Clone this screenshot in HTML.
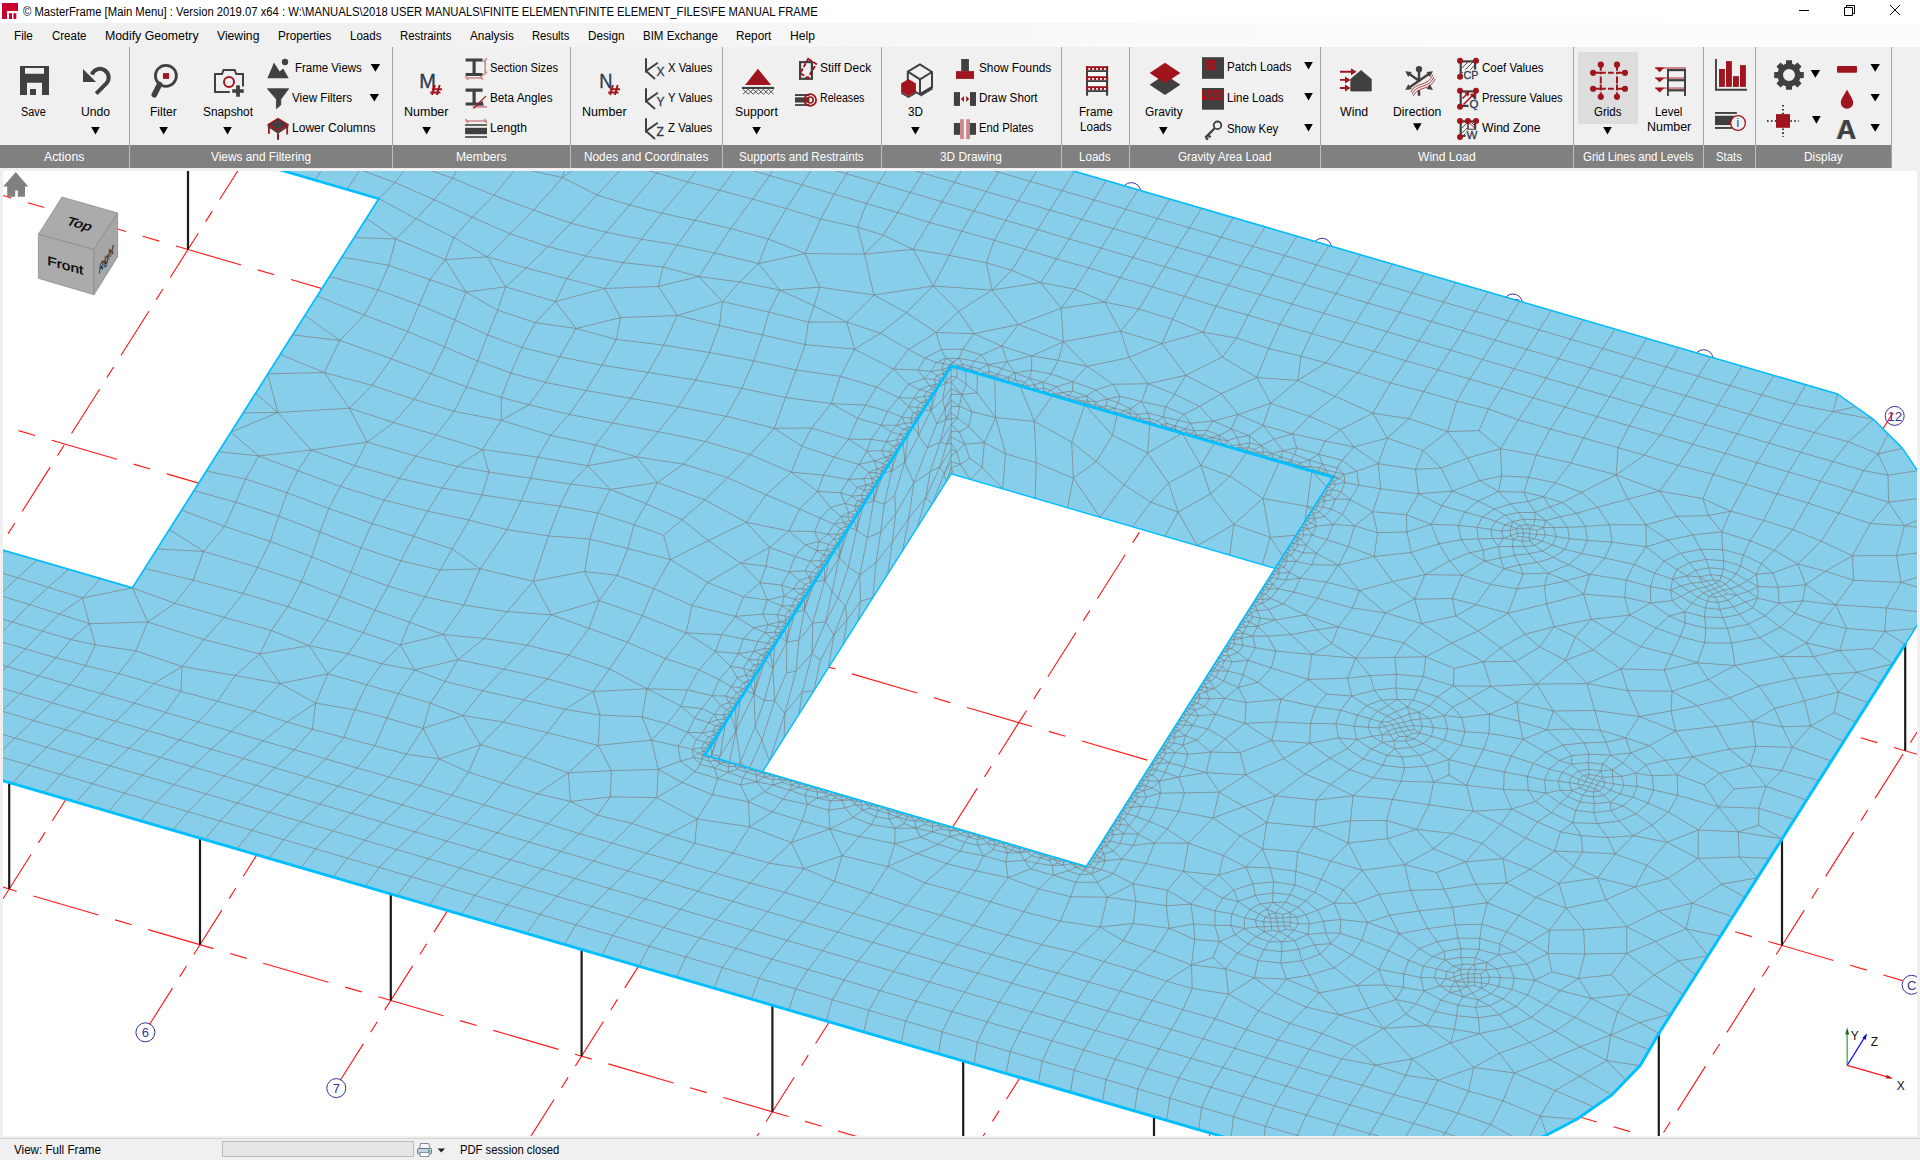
<!DOCTYPE html><html><head><meta charset="utf-8"><title>MasterFrame</title><style>
html,body{margin:0;padding:0;background:#f0f0f0;}
body{width:1920px;height:1160px;position:relative;overflow:hidden;font-family:"Liberation Sans", sans-serif;font-size:12px;color:#000;}
.abs{position:absolute;}
.t{position:absolute;white-space:pre;line-height:1;transform-origin:0 0;}
#title{left:0;top:0;width:1920px;height:23px;background:#fff;}
#menu{left:0;top:23px;width:1920px;height:24px;background:linear-gradient(90deg,#f0f0f0 0px,#f0f0f0 300px,#f6f6f6 800px,#fbfbfb 1300px,#fcfcfc 1920px);}
#ribbon{left:0;top:47px;width:1920px;height:98px;background:#f0f0f0;}
#labels{left:0;top:145px;width:1891.5px;height:22.5px;background:#808080;}
.sep{position:absolute;top:47px;width:1px;height:121px;background:#a3a3a3;}
.sep2{position:absolute;top:145px;width:1px;height:23px;background:#bdbdbd;}
#hl{left:1578px;top:52px;width:60px;height:72px;background:#dddddd;}
#vp{left:3px;top:171px;width:1914px;height:964.5px;background:#fff;overflow:hidden;}
#status{left:0;top:1138px;width:1920px;height:22px;background:#f0f0f0;border-top:1px solid #d4d4d4;}
#prog{left:222px;top:1141px;width:190px;height:14px;background:#e6e6e6;border:1px solid #bcbcbc;}
</style></head><body>
<div id="title" class="abs"></div><div id="menu" class="abs"></div><div id="ribbon" class="abs"></div><div id="labels" class="abs"></div><div id="hl" class="abs"></div>
<div class="sep" style="left:128.9px"></div>
<div class="sep" style="left:391.9px"></div>
<div class="sep" style="left:569.9px"></div>
<div class="sep" style="left:721.9px"></div>
<div class="sep" style="left:880.9px"></div>
<div class="sep" style="left:1060.9px"></div>
<div class="sep" style="left:1129.0px"></div>
<div class="sep" style="left:1320.1px"></div>
<div class="sep" style="left:1573.0px"></div>
<div class="sep" style="left:1703.1px"></div>
<div class="sep" style="left:1755.1px"></div>
<div class="sep" style="left:1890.9px"></div>
<div class="sep2" style="left:128.9px"></div>
<div class="sep2" style="left:391.9px"></div>
<div class="sep2" style="left:569.9px"></div>
<div class="sep2" style="left:721.9px"></div>
<div class="sep2" style="left:880.9px"></div>
<div class="sep2" style="left:1060.9px"></div>
<div class="sep2" style="left:1129.0px"></div>
<div class="sep2" style="left:1320.1px"></div>
<div class="sep2" style="left:1573.0px"></div>
<div class="sep2" style="left:1703.1px"></div>
<div class="sep2" style="left:1755.1px"></div>
<div id="status" class="abs"></div><div id="prog" class="abs"></div>
<svg class="abs" style="left:414px;top:1139px" width="36" height="20" viewBox="414 1139 36 20"><path d="M420.5,1143.5h8l2,5h-11z" fill="#f4f6fa" stroke="#6a7c96" stroke-width="0.9"/><rect x="417.5" y="1148.5" width="14" height="5.5" rx="1" fill="#c9d2e0" stroke="#5a6b86" stroke-width="0.9"/><rect x="420" y="1152.5" width="9" height="4" fill="#fff" stroke="#6a7c96" stroke-width="0.8"/><rect x="428" y="1150" width="2" height="1.6" fill="#2bb24a"/><path d="M437.6,1148.5h7.4l-3.7,4z" fill="#222"/></svg>
<div id="vp" class="abs"><svg width="1914" height="964.5" viewBox="3 171 1914 964.5" style="position:absolute;left:0;top:0;font-family:'Liberation Sans',sans-serif"><path d="M-10.0,883.4 L900.0,1149.1" stroke="#ff1a1a" stroke-width="1.15" fill="none" stroke-dasharray="67.9,17.3,17.3,17.3" stroke-dashoffset="74.7"/>
<path d="M1560.0,1111.2 L1700.0,1152.0" stroke="#ff1a1a" stroke-width="1.15" fill="none" stroke-dasharray="67.9,17.3,17.3,17.3" stroke-dashoffset="29.5"/>
<path d="M828.0,666.9 L1200.0,775.5" stroke="#ff1a1a" stroke-width="1.15" fill="none" stroke-dasharray="67.9,17.3,17.3,17.3" stroke-dashoffset="94.8"/>
<path d="M1700.0,921.5 L1902.5,980.6" stroke="#ff1a1a" stroke-width="1.15" fill="none" stroke-dasharray="67.9,17.3,17.3,17.3" stroke-dashoffset="48.6"/>
<path d="M1840.0,731.8 L1925.0,756.6" stroke="#ff1a1a" stroke-width="1.15" fill="none" stroke-dasharray="67.9,17.3,17.3,17.3" stroke-dashoffset="63.8"/>
<path d="M-10.0,191.7 L340.0,293.9" stroke="#ff1a1a" stroke-width="1.15" fill="none" stroke-dasharray="67.9,17.3,17.3,17.3" stroke-dashoffset="45.9"/>
<path d="M-10.0,422.3 L215.0,487.9" stroke="#ff1a1a" stroke-width="1.15" fill="none" stroke-dasharray="67.9,17.3,17.3,17.3" stroke-dashoffset="55.5"/>
<path d="M-41.3,968.8 L83.1,772.2" stroke="#ff1a1a" stroke-width="1.15" fill="none" stroke-dasharray="52.4,13.7,12.5,13.7" stroke-dashoffset="9.4"/>
<path d="M149.5,1024.5 L273.9,827.9" stroke="#ff1a1a" stroke-width="1.15" fill="none" stroke-dasharray="52.4,13.7,12.5,13.7" stroke-dashoffset="9.4"/>
<path d="M340.3,1080.2 L464.7,883.6" stroke="#ff1a1a" stroke-width="1.15" fill="none" stroke-dasharray="52.4,13.7,12.5,13.7" stroke-dashoffset="9.4"/>
<path d="M531.1,1135.9 L655.5,939.3" stroke="#ff1a1a" stroke-width="1.15" fill="none" stroke-dasharray="52.4,13.7,12.5,13.7" stroke-dashoffset="9.4"/>
<path d="M721.9,1191.6 L846.3,995.0" stroke="#ff1a1a" stroke-width="1.15" fill="none" stroke-dasharray="52.4,13.7,12.5,13.7" stroke-dashoffset="9.4"/>
<path d="M912.7,1247.3 L1037.1,1050.7" stroke="#ff1a1a" stroke-width="1.15" fill="none" stroke-dasharray="52.4,13.7,12.5,13.7" stroke-dashoffset="9.4"/>
<path d="M1103.5,1303.0 L1227.9,1106.4" stroke="#ff1a1a" stroke-width="1.15" fill="none" stroke-dasharray="52.4,13.7,12.5,13.7" stroke-dashoffset="9.4"/>
<path d="M1294.3,1358.7 L1418.7,1162.1" stroke="#ff1a1a" stroke-width="1.15" fill="none" stroke-dasharray="52.4,13.7,12.5,13.7" stroke-dashoffset="9.4"/>
<path d="M1511.0,1373.5 L1929.8,711.9" stroke="#ff1a1a" stroke-width="1.15" fill="none" stroke-dasharray="52.4,13.7,12.5,13.7" stroke-dashoffset="57.8"/>
<path d="M1893.0,412.9 L1837.6,500.5" stroke="#ff1a1a" stroke-width="1.15" fill="none" stroke-dasharray="52.4,13.7,12.5,13.7" stroke-dashoffset="0.0"/>
<path d="M-58.4,638.7 L261.9,132.7" stroke="#ff1a1a" stroke-width="1.15" fill="none" stroke-dasharray="52.4,13.7,12.5,13.7" stroke-dashoffset="34.0"/>
<path d="M883.3,936.7 L1148.2,518.3" stroke="#ff1a1a" stroke-width="1.15" fill="none" stroke-dasharray="52.4,13.7,12.5,13.7" stroke-dashoffset="61.5"/>
<circle cx="145.4" cy="1032.3" r="9.5" fill="none" stroke="#37339a" stroke-width="1"/>
<text x="145.4" y="1037.0" font-size="13" fill="#37339a" text-anchor="middle">6</text>
<circle cx="336.3" cy="1088.1" r="9.5" fill="none" stroke="#37339a" stroke-width="1"/>
<text x="336.3" y="1092.8" font-size="13" fill="#37339a" text-anchor="middle">7</text>
<circle cx="1894.7" cy="415.9" r="9.5" fill="none" stroke="#37339a" stroke-width="1"/>
<text x="1894.7" y="420.8" font-size="13.5" fill="#37339a" text-anchor="middle">12</text>
<circle cx="1911.6" cy="984.8" r="9.5" fill="none" stroke="#37339a" stroke-width="1"/>
<text x="1911.6" y="989.5" font-size="13" fill="#37339a" text-anchor="middle">C</text>
<circle cx="1131.3" cy="192.1" r="9.5" fill="none" stroke="#37339a" stroke-width="1"/>
<text x="1131.3" y="196.8" font-size="13" fill="#37339a" text-anchor="middle">8</text>
<circle cx="1322.1" cy="247.8" r="9.5" fill="none" stroke="#37339a" stroke-width="1"/>
<text x="1322.1" y="252.5" font-size="13" fill="#37339a" text-anchor="middle">9</text>
<circle cx="1512.9" cy="303.5" r="9.5" fill="none" stroke="#37339a" stroke-width="1"/>
<text x="1512.9" y="308.2" font-size="13" fill="#37339a" text-anchor="middle">10</text>
<circle cx="1703.7" cy="359.2" r="9.5" fill="none" stroke="#37339a" stroke-width="1"/>
<text x="1703.7" y="363.9" font-size="13" fill="#37339a" text-anchor="middle">11</text>
<path d="M9.2,782.5 L9.2,889.0" stroke="#1c1c1c" stroke-width="2.2" fill="none"/>
<path d="M200.0,838.2 L200.0,944.7" stroke="#1c1c1c" stroke-width="2.2" fill="none"/>
<path d="M390.8,893.9 L390.8,1000.4" stroke="#1c1c1c" stroke-width="2.2" fill="none"/>
<path d="M581.6,949.6 L581.6,1056.1" stroke="#1c1c1c" stroke-width="2.2" fill="none"/>
<path d="M772.4,1005.3 L772.4,1111.8" stroke="#1c1c1c" stroke-width="2.2" fill="none"/>
<path d="M963.2,1061.0 L963.2,1167.5" stroke="#1c1c1c" stroke-width="2.2" fill="none"/>
<path d="M1154.0,1116.7 L1154.0,1223.2" stroke="#1c1c1c" stroke-width="2.2" fill="none"/>
<path d="M1344.8,1172.4 L1344.8,1278.9" stroke="#1c1c1c" stroke-width="2.2" fill="none"/>
<path d="M1658.8,1033.5 L1658.8,1140.0" stroke="#1c1c1c" stroke-width="2.2" fill="none"/>
<path d="M1782.0,838.9 L1782.0,945.4" stroke="#1c1c1c" stroke-width="2.2" fill="none"/>
<path d="M1905.2,644.3 L1905.2,750.8" stroke="#1c1c1c" stroke-width="2.2" fill="none"/>
<path d="M188.0,143.0 L188.0,249.5" stroke="#1c1c1c" stroke-width="2.2" fill="none"/>
<path d="M951.2,365.8 L1332.8,477.2 L1332.8,585.2 L951.2,473.8Z" fill="#87ceeb" stroke="none" stroke-width="0" stroke-linejoin="round"/>
<path d="M951.2,365.8 L704.8,755.0 L704.8,863.0 L951.2,473.8Z" fill="#87ceeb" stroke="none" stroke-width="0" stroke-linejoin="round"/>
<path d="M956.9,367.5 L951.2,369.9 M956.9,367.5 L956.9,377.5 M965.2,369.9 L966.2,384.2 M977.3,373.4 L977.1,392.9 M994.7,378.5 L995.7,417.6 M1020.0,385.9 L1034.3,421.3 M1052.4,395.4 L1034.3,421.3 M1084.9,404.8 L1071.7,442.2 M1084.9,404.8 L1112.5,435.2 M1117.3,414.3 L1112.5,435.2 M1149.8,423.8 L1147.6,453.0 M1182.2,433.2 L1147.6,453.0 M1182.2,433.2 L1200.8,465.3 M1214.6,442.7 L1200.8,465.3 M1247.1,452.2 L1229.9,476.2 M1279.5,461.6 L1262.9,498.4 M1311.9,471.1 L1332.8,493.5 M1311.9,471.1 L1307.0,506.4 M1332.8,509.8 L1307.0,506.4 M1332.8,526.1 L1307.0,506.4 M1332.8,542.4 L1303.0,534.7 M1332.8,558.7 L1311.0,560.7 M1332.8,575.0 L1317.5,580.7 M1317.5,580.7 L1311.0,560.7 M1294.6,574.1 L1270.2,537.3 M1294.6,574.1 L1311.0,560.7 M1262.2,564.6 L1270.2,537.3 M1229.8,555.1 L1233.7,524.5 M1197.3,545.7 L1233.7,524.5 M1197.3,545.7 L1178.1,512.2 M1164.9,536.2 L1178.1,512.2 M1132.5,526.7 L1150.6,502.2 M1100.0,517.2 L1124.1,484.8 M1100.0,517.2 L1073.3,478.1 M1067.6,507.8 L1073.3,478.1 M1035.2,498.3 L1036.2,462.7 M1002.7,488.8 L1005.6,453.8 M1002.7,488.8 L982.2,467.3 M970.3,479.4 L982.2,467.3 M970.3,479.4 L960.5,464.4 M954.1,474.6 L951.2,467.7 M951.2,467.7 L960.5,464.4 M951.2,461.6 L960.5,464.4 M951.2,455.5 L956.7,451.6 M951.2,449.3 L956.7,451.6 M951.2,443.2 L956.7,451.6 M951.2,437.1 L964.8,444.2 M951.2,431.0 L959.3,431.9 M951.2,424.9 L957.4,418.0 M951.2,424.9 L959.3,431.9 M951.2,418.8 L957.4,418.0 M951.2,412.7 L957.4,418.0 M951.2,406.6 L959.5,406.3 M951.2,400.4 L959.5,406.3 M951.2,394.3 L961.8,394.5 M951.2,388.2 L961.8,394.5 M951.2,382.1 L961.8,394.5 M951.2,382.1 L956.9,377.5 M951.2,376.0 L956.9,377.5 M1147.6,453.0 L1124.1,484.8 M1147.6,453.0 L1168.6,483.0 M1147.6,453.0 L1112.5,435.2 M972.0,411.8 L968.8,426.7 M972.0,411.8 L995.7,417.6 M972.0,411.8 L959.5,406.3 M972.0,411.8 L961.8,394.5 M1200.8,465.3 L1168.6,483.0 M1200.8,465.3 L1210.4,494.0 M1200.8,465.3 L1229.9,476.2 M1096.2,461.5 L1071.7,442.2 M1096.2,461.5 L1124.1,484.8 M1096.2,461.5 L1073.3,478.1 M1096.2,461.5 L1112.5,435.2 M1034.3,421.3 L1036.2,462.7 M1034.3,421.3 L1071.7,442.2 M1034.3,421.3 L995.7,417.6 M1262.9,498.4 L1233.7,524.5 M1262.9,498.4 L1307.0,506.4 M1262.9,498.4 L1229.9,476.2 M1262.9,498.4 L1270.2,537.3 M1005.6,453.8 L1036.2,462.7 M1005.6,453.8 L995.7,417.6 M1005.6,453.8 L984.4,442.7 M982.2,467.3 L969.6,458.4 M982.2,467.3 L984.4,442.7 M1233.7,524.5 L1210.4,494.0 M1233.7,524.5 L1270.2,537.3 M1036.2,462.7 L1073.3,478.1 M1071.7,442.2 L1073.3,478.1 M1307.0,506.4 L1303.0,534.7 M1124.1,484.8 L1150.6,502.2 M1178.1,512.2 L1168.6,483.0 M1178.1,512.2 L1210.4,494.0 M1178.1,512.2 L1150.6,502.2 M966.2,384.2 L977.1,392.9 M966.2,384.2 L961.8,394.5 M966.2,384.2 L956.9,377.5 M968.8,426.7 L957.4,418.0 M968.8,426.7 L984.4,442.7 M968.8,426.7 L959.3,431.9 M1168.6,483.0 L1150.6,502.2 M1210.4,494.0 L1229.9,476.2 M995.7,417.6 L977.1,392.9 M995.7,417.6 L984.4,442.7 M964.8,444.2 L969.6,458.4 M964.8,444.2 L984.4,442.7 M964.8,444.2 L956.7,451.6 M964.8,444.2 L959.3,431.9 M1303.0,534.7 L1270.2,537.3 M1303.0,534.7 L1311.0,560.7 M959.5,406.3 L957.4,418.0 M959.5,406.3 L961.8,394.5 M960.5,464.4 L969.6,458.4 M960.5,464.4 L956.7,451.6 M977.1,392.9 L961.8,394.5 M947.5,371.6 L951.2,369.9 M947.5,371.6 L945.4,383.6 M942.6,379.4 L945.4,383.6 M937.6,387.2 L945.4,383.6 M937.6,387.2 L931.0,410.1 M932.7,395.0 L931.0,410.1 M927.8,402.8 L931.0,410.1 M922.9,410.6 L931.0,410.1 M917.9,418.3 L918.7,435.5 M913.0,426.1 L918.7,435.5 M908.1,433.9 L904.8,462.0 M903.2,441.7 L904.8,462.0 M898.2,449.5 L891.7,471.3 M893.3,457.3 L891.7,471.3 M888.4,465.0 L891.7,471.3 M883.4,472.8 L873.7,500.7 M883.4,472.8 L891.7,471.3 M878.5,480.6 L873.7,500.7 M873.6,488.4 L873.7,500.7 M868.7,496.2 L873.7,500.7 M863.7,504.0 L873.7,500.7 M863.7,504.0 L856.6,530.1 M858.8,511.8 L856.6,530.1 M853.9,519.5 L856.6,530.1 M848.9,527.3 L856.6,530.1 M848.9,527.3 L839.2,557.6 M844.0,535.1 L839.2,557.6 M839.1,542.9 L839.2,557.6 M834.2,550.7 L839.2,557.6 M829.2,558.5 L824.9,580.3 M824.3,566.2 L824.9,580.3 M819.4,574.0 L824.9,580.3 M814.4,581.8 L824.9,580.3 M814.4,581.8 L804.4,609.8 M809.5,589.6 L804.4,609.8 M804.6,597.4 L804.4,609.8 M799.7,605.2 L804.4,609.8 M794.7,612.9 L786.7,642.1 M794.7,612.9 L804.4,609.8 M789.8,620.7 L786.7,642.1 M784.9,628.5 L786.7,642.1 M780.0,636.3 L786.7,642.1 M775.0,644.1 L772.9,668.5 M770.1,651.9 L772.9,668.5 M765.2,659.6 L754.0,694.0 M765.2,659.6 L772.9,668.5 M760.2,667.4 L754.0,694.0 M755.3,675.2 L754.0,694.0 M750.4,683.0 L754.0,694.0 M745.5,690.8 L754.0,694.0 M740.5,698.6 L735.9,731.1 M735.6,706.4 L735.9,731.1 M730.7,714.1 L735.9,731.1 M725.7,721.9 L720.0,756.2 M720.8,729.7 L711.8,754.6 M715.9,737.5 L711.8,754.6 M711.0,745.3 L711.8,754.6 M706.0,753.1 L704.8,762.1 M704.8,762.1 L711.8,754.6 M704.8,769.3 L711.8,754.6 M704.8,776.4 L708.5,780.6 M704.8,776.4 L711.8,754.6 M704.8,783.5 L708.5,780.6 M704.8,790.7 L708.5,780.6 M704.8,797.8 L708.5,780.6 M704.8,797.8 L714.4,787.7 M704.8,804.9 L714.4,787.7 M704.8,812.1 L712.9,802.4 M704.8,819.2 L712.9,802.4 M704.8,826.3 L712.4,816.8 M704.8,833.5 L708.9,833.4 M704.8,840.6 L708.9,833.4 M704.8,847.7 L708.9,833.4 M704.8,854.8 L709.1,856.2 M704.8,854.8 L715.6,833.8 M704.8,862.0 L709.1,856.2 M715.6,846.0 L715.6,833.8 M725.3,830.6 L715.6,833.8 M725.3,830.6 L735.1,796.0 M739.8,807.7 L735.1,796.0 M754.6,784.3 L748.0,771.1 M769.4,761.0 L761.9,740.3 M769.4,761.0 L784.8,713.5 M784.2,737.6 L784.8,713.5 M799.0,714.3 L802.3,691.9 M813.8,690.9 L802.3,691.9 M813.8,690.9 L820.3,660.2 M828.5,667.5 L833.8,635.2 M843.3,644.2 L847.0,619.8 M858.1,620.8 L860.5,601.3 M872.9,597.5 L876.0,562.5 M872.9,597.5 L860.5,601.3 M887.7,574.1 L892.3,542.0 M902.5,550.8 L908.8,518.2 M917.2,527.4 L925.8,497.4 M932.0,504.1 L944.2,473.8 M932.0,504.1 L925.8,497.4 M946.3,481.6 L951.2,467.7 M946.3,481.6 L944.2,473.8 M951.2,461.6 L944.2,473.8 M951.2,455.5 L944.2,473.8 M951.2,449.3 L939.9,466.9 M951.2,443.2 L946.7,444.1 M951.2,437.1 L946.7,444.1 M951.2,431.0 L946.7,444.1 M951.2,424.9 L940.3,441.9 M951.2,418.8 L945.6,419.9 M951.2,412.7 L945.6,419.9 M951.2,406.6 L945.6,419.9 M951.2,400.4 L945.0,409.2 M951.2,394.3 L945.0,409.2 M951.2,388.2 L942.7,399.8 M951.2,382.1 L945.4,383.6 M951.2,376.0 L945.4,383.6 M735.9,731.1 L754.0,694.0 M735.9,731.1 L740.5,761.5 M735.9,731.1 L720.0,756.2 M735.9,731.1 L726.2,777.6 M802.3,691.9 L812.1,653.4 M802.3,691.9 L784.8,713.5 M945.6,419.9 L936.8,423.7 M945.6,419.9 L940.3,441.9 M945.6,419.9 L945.0,409.2 M876.0,562.5 L859.8,574.9 M876.0,562.5 L892.3,542.0 M876.0,562.5 L880.7,532.2 M774.6,700.7 L761.9,740.3 M774.6,700.7 L772.9,668.5 M774.6,700.7 L784.8,713.5 M774.6,700.7 L764.4,700.4 M774.6,700.7 L786.6,672.9 M859.8,574.9 L867.4,537.6 M859.8,574.9 L848.4,567.0 M859.8,574.9 L845.4,605.9 M859.8,574.9 L860.5,601.3 M833.8,635.2 L825.7,621.7 M833.8,635.2 L845.4,605.9 M833.8,635.2 L847.0,619.8 M833.8,635.2 L820.3,660.2 M918.7,435.5 L904.8,462.0 M918.7,435.5 L927.4,447.8 M918.7,435.5 L931.0,410.1 M722.4,806.3 L712.4,816.8 M722.4,806.3 L726.2,777.6 M722.4,806.3 L715.6,833.8 M722.4,806.3 L735.1,796.0 M873.7,500.7 L867.4,537.6 M873.7,500.7 L884.3,504.2 M761.9,740.3 L755.2,726.7 M761.9,740.3 L748.0,771.1 M754.0,694.0 L755.2,726.7 M754.0,694.0 L764.4,700.4 M796.0,671.2 L798.9,640.1 M796.0,671.2 L812.1,653.4 M796.0,671.2 L784.8,713.5 M796.0,671.2 L786.6,672.9 M798.9,640.1 L812.7,623.2 M798.9,640.1 L786.7,642.1 M798.9,640.1 L804.4,609.8 M825.7,621.7 L812.7,623.2 M825.7,621.7 L812.1,653.4 M825.7,621.7 L838.0,597.9 M825.7,621.7 L832.1,591.7 M812.7,623.2 L812.1,653.4 M812.7,623.2 L824.9,580.3 M812.7,623.2 L804.4,609.8 M939.9,466.9 L930.2,471.6 M939.9,466.9 L944.2,473.8 M939.9,466.9 L946.7,444.1 M939.9,466.9 L925.8,497.4 M895.8,513.6 L892.3,542.0 M895.8,513.6 L913.8,482.9 M895.8,513.6 L880.7,532.2 M895.8,513.6 L894.6,495.4 M867.4,537.6 L856.6,530.1 M867.4,537.6 L880.7,532.2 M740.5,761.5 L755.2,726.7 M740.5,761.5 L726.2,777.6 M740.5,761.5 L748.0,771.1 M740.5,761.5 L735.1,796.0 M812.1,653.4 L820.3,660.2 M892.3,542.0 L908.8,518.2 M936.8,423.7 L927.4,447.8 M936.8,423.7 L945.0,409.2 M936.8,423.7 L931.0,410.1 M848.4,567.0 L838.0,597.9 M848.4,567.0 L856.6,530.1 M848.4,567.0 L839.2,557.6 M845.4,605.9 L838.0,597.9 M845.4,605.9 L847.0,619.8 M884.3,504.2 L880.7,532.2 M884.3,504.2 L894.6,495.4 M884.3,504.2 L891.7,471.3 M708.5,780.6 L720.0,756.2 M772.9,668.5 L764.4,700.4 M772.9,668.5 L786.7,642.1 M712.4,816.8 L712.9,802.4 M712.4,816.8 L708.9,833.4 M908.8,518.2 L913.8,482.9 M908.8,518.2 L925.8,497.4 M913.8,482.9 L930.2,471.6 M913.8,482.9 L904.8,462.0 M913.8,482.9 L927.4,447.8 M720.0,756.2 L714.4,787.7 M720.0,756.2 L711.8,754.6 M930.2,471.6 L940.3,441.9 M930.2,471.6 L925.8,497.4 M714.4,787.7 L726.2,777.6 M714.4,787.7 L712.9,802.4 M824.9,580.3 L839.2,557.6 M824.9,580.3 L832.1,591.7 M838.0,597.9 L832.1,591.7 M755.2,726.7 L764.4,700.4 M904.8,462.0 L894.6,495.4 M904.8,462.0 L891.7,471.3 M726.2,777.6 L712.9,802.4 M748.0,771.1 L735.1,796.0 M942.7,399.8 L945.4,383.6 M942.7,399.8 L945.0,409.2 M942.7,399.8 L931.0,410.1 M715.6,833.8 L708.9,833.4 M940.3,441.9 L946.7,444.1 M940.3,441.9 L927.4,447.8 M839.2,557.6 L832.1,591.7 M786.6,672.9 L786.7,642.1 M860.5,601.3 L847.0,619.8" stroke="#7e7e7e" stroke-width="0.7" fill="none"/>
<path d="M704.8,863.0 L951.2,473.8 L1332.8,585.2" stroke="#00bfff" stroke-width="1.4" fill="none"/>
<path d="M951.2,365.8 L951.2,473.8" stroke="#7e7e7e" stroke-width="0.7" fill="none"/>
<path d="M215.8,-79.4 L1837.6,394.0 L1873.4,419.3 L1902.5,448.4 L1917.5,470.8 L1931.0,497.0 L1940.0,530.0 L1940.0,570.0 L1925.3,612.6 L1905.2,644.3 L1658.8,1033.5 L1640.0,1065.7 L1611.7,1095.0 L1576.7,1119.3 L1546.7,1135.0 L1505.0,1152.0 L1460.0,1164.0 L1391.2,1185.9 L-277.0,699.0 L-153.8,504.4 L132.4,587.9 L378.8,198.7 L92.6,115.2Z M704.8,755.0 L1086.4,866.4 L1332.8,477.2 L951.2,365.8Z" fill="#87ceeb" fill-rule="evenodd"/>
<path d="M704.8,755.0 L708.0,755.9 M704.8,755.0 L706.0,753.1 M704.8,755.0 L702.3,754.9 M704.8,755.0 L704.2,756.7 M708.0,755.9 L711.2,756.9 M708.0,755.9 L708.3,757.8 M711.2,756.9 L714.3,757.8 M711.2,756.9 L708.3,757.8 M711.2,756.9 L714.6,760.2 M714.3,757.8 L717.5,758.7 M714.3,757.8 L714.6,760.2 M717.5,758.7 L720.7,759.6 M717.5,758.7 L719.2,761.0 M720.7,759.6 L723.9,760.6 M720.7,759.6 L719.2,761.0 M723.9,760.6 L727.1,761.5 M723.9,760.6 L723.8,762.3 M727.1,761.5 L730.2,762.4 M727.1,761.5 L723.8,762.3 M730.2,762.4 L733.4,763.4 M730.2,762.4 L729.1,763.8 M733.4,763.4 L736.6,764.3 M733.4,763.4 L729.1,763.8 M733.4,763.4 L734.9,766.1 M736.6,764.3 L739.8,765.2 M736.6,764.3 L734.9,766.1 M739.8,765.2 L743.0,766.1 M739.8,765.2 L739.2,767.1 M743.0,766.1 L746.1,767.1 M743.0,766.1 L744.7,768.0 M746.1,767.1 L749.3,768.0 M746.1,767.1 L744.7,768.0 M749.3,768.0 L752.5,768.9 M749.3,768.0 L744.7,768.0 M749.3,768.0 L750.6,770.0 M752.5,768.9 L755.7,769.9 M752.5,768.9 L750.6,770.0 M755.7,769.9 L758.9,770.8 M755.7,769.9 L755.2,771.3 M758.9,770.8 L762.0,771.7 M758.9,770.8 L755.2,771.3 M758.9,770.8 L760.2,772.8 M762.0,771.7 L765.2,772.6 M762.0,771.7 L760.2,772.8 M765.2,772.6 L768.4,773.6 M765.2,772.6 L764.4,774.1 M768.4,773.6 L771.6,774.5 M768.4,773.6 L764.4,774.1 M768.4,773.6 L769.6,775.7 M771.6,774.5 L774.8,775.4 M771.6,774.5 L769.6,775.7 M774.8,775.4 L777.9,776.4 M774.8,775.4 L774.1,776.9 M777.9,776.4 L781.1,777.3 M777.9,776.4 L774.1,776.9 M777.9,776.4 L780.0,779.2 M781.1,777.3 L784.3,778.2 M781.1,777.3 L780.0,779.2 M784.3,778.2 L787.5,779.1 M784.3,778.2 L784.9,780.1 M787.5,779.1 L790.7,780.1 M787.5,779.1 L784.9,780.1 M790.7,780.1 L793.8,781.0 M790.7,780.1 L790.1,781.6 M793.8,781.0 L797.0,781.9 M793.8,781.0 L790.1,781.6 M793.8,781.0 L795.5,783.2 M797.0,781.9 L800.2,782.9 M797.0,781.9 L795.5,783.2 M800.2,782.9 L803.4,783.8 M800.2,782.9 L799.7,784.4 M803.4,783.8 L806.6,784.7 M803.4,783.8 L799.7,784.4 M803.4,783.8 L805.4,786.3 M806.6,784.7 L809.7,785.6 M806.6,784.7 L805.4,786.3 M809.7,785.6 L812.9,786.6 M809.7,785.6 L805.4,786.3 M809.7,785.6 L811.3,787.9 M812.9,786.6 L816.1,787.5 M812.9,786.6 L811.3,787.9 M816.1,787.5 L819.3,788.4 M816.1,787.5 L815.8,789.0 M819.3,788.4 L822.5,789.3 M819.3,788.4 L815.8,789.0 M819.3,788.4 L821.1,790.6 M822.5,789.3 L825.6,790.3 M822.5,789.3 L821.1,790.6 M825.6,790.3 L828.8,791.2 M825.6,790.3 L825.3,792.6 M828.8,791.2 L832.0,792.1 M828.8,791.2 L825.3,792.6 M832.0,792.1 L835.2,793.1 M832.0,792.1 L831.2,794.8 M835.2,793.1 L838.4,794.0 M835.2,793.1 L836.3,795.3 M838.4,794.0 L841.5,794.9 M838.4,794.0 L836.3,795.3 M841.5,794.9 L844.7,795.8 M841.5,794.9 L841.2,796.6 M844.7,795.8 L847.9,796.8 M844.7,795.8 L841.2,796.6 M844.7,795.8 L846.6,798.2 M847.9,796.8 L851.1,797.7 M847.9,796.8 L846.6,798.2 M851.1,797.7 L854.3,798.6 M851.1,797.7 L851.0,800.0 M854.3,798.6 L857.4,799.6 M854.3,798.6 L851.0,800.0 M857.4,799.6 L860.6,800.5 M857.4,799.6 L856.0,801.4 M860.6,800.5 L863.8,801.4 M860.6,800.5 L860.7,802.2 M863.8,801.4 L867.0,802.3 M863.8,801.4 L860.7,802.2 M863.8,801.4 L866.7,804.5 M867.0,802.3 L870.2,803.3 M867.0,802.3 L866.7,804.5 M870.2,803.3 L873.3,804.2 M870.2,803.3 L871.3,805.4 M873.3,804.2 L876.5,805.1 M873.3,804.2 L871.3,805.4 M876.5,805.1 L879.7,806.1 M876.5,805.1 L876.5,807.0 M879.7,806.1 L882.9,807.0 M879.7,806.1 L876.5,807.0 M879.7,806.1 L882.0,808.5 M882.9,807.0 L886.1,807.9 M882.9,807.0 L882.0,808.5 M886.1,807.9 L889.2,808.8 M886.1,807.9 L887.5,810.1 M889.2,808.8 L892.4,809.8 M889.2,808.8 L887.5,810.1 M892.4,809.8 L895.6,810.7 M892.4,809.8 L891.5,811.6 M895.6,810.7 L898.8,811.6 M895.6,810.7 L897.1,813.0 M898.8,811.6 L902.0,812.6 M898.8,811.6 L897.1,813.0 M902.0,812.6 L905.1,813.5 M902.0,812.6 L901.8,814.4 M905.1,813.5 L908.3,814.4 M905.1,813.5 L901.8,814.4 M908.3,814.4 L911.5,815.3 M908.3,814.4 L907.1,816.4 M911.5,815.3 L914.7,816.3 M911.5,815.3 L912.1,817.4 M914.7,816.3 L917.9,817.2 M914.7,816.3 L912.1,817.4 M914.7,816.3 L918.2,818.7 M917.9,817.2 L921.0,818.1 M917.9,817.2 L918.2,818.7 M921.0,818.1 L924.2,819.1 M921.0,818.1 L918.2,818.7 M924.2,819.1 L927.4,820.0 M924.2,819.1 L922.0,820.9 M927.4,820.0 L930.6,820.9 M927.4,820.0 L927.4,821.9 M930.6,820.9 L933.8,821.8 M930.6,820.9 L927.4,821.9 M933.8,821.8 L936.9,822.8 M933.8,821.8 L932.6,823.3 M936.9,822.8 L940.1,823.7 M936.9,822.8 L932.6,823.3 M936.9,822.8 L938.5,825.6 M940.1,823.7 L943.3,824.6 M940.1,823.7 L938.5,825.6 M943.3,824.6 L946.5,825.6 M943.3,824.6 L942.7,826.6 M946.5,825.6 L949.7,826.5 M946.5,825.6 L948.4,827.4 M949.7,826.5 L952.8,827.4 M949.7,826.5 L948.4,827.4 M952.8,827.4 L956.0,828.3 M952.8,827.4 L948.4,827.4 M952.8,827.4 L954.1,829.4 M956.0,828.3 L959.2,829.3 M956.0,828.3 L954.1,829.4 M959.2,829.3 L962.4,830.2 M959.2,829.3 L957.4,830.8 M962.4,830.2 L965.6,831.1 M962.4,830.2 L957.4,830.8 M962.4,830.2 L963.9,832.4 M965.6,831.1 L968.7,832.1 M965.6,831.1 L963.9,832.4 M968.7,832.1 L971.9,833.0 M968.7,832.1 L968.2,833.7 M971.9,833.0 L975.1,833.9 M971.9,833.0 L968.2,833.7 M971.9,833.0 L973.5,835.3 M975.1,833.9 L978.3,834.8 M975.1,833.9 L973.5,835.3 M978.3,834.8 L981.5,835.8 M978.3,834.8 L978.7,836.9 M981.5,835.8 L984.6,836.7 M981.5,835.8 L978.7,836.9 M984.6,836.7 L987.8,837.6 M984.6,836.7 L983.2,838.7 M987.8,837.6 L991.0,838.6 M987.8,837.6 L983.2,838.7 M987.8,837.6 L989.8,840.1 M991.0,838.6 L994.2,839.5 M991.0,838.6 L989.8,840.1 M994.2,839.5 L997.4,840.4 M994.2,839.5 L994.0,841.2 M997.4,840.4 L1000.5,841.3 M997.4,840.4 L994.0,841.2 M997.4,840.4 L999.1,842.8 M1000.5,841.3 L1003.7,842.3 M1000.5,841.3 L999.1,842.8 M1003.7,842.3 L1006.9,843.2 M1003.7,842.3 L1003.6,844.0 M1006.9,843.2 L1010.1,844.1 M1006.9,843.2 L1003.6,844.0 M1006.9,843.2 L1008.8,845.6 M1010.1,844.1 L1013.3,845.0 M1010.1,844.1 L1008.8,845.6 M1013.3,845.0 L1016.4,846.0 M1013.3,845.0 L1014.0,847.2 M1016.4,846.0 L1019.6,846.9 M1016.4,846.0 L1014.0,847.2 M1019.6,846.9 L1022.8,847.8 M1019.6,846.9 L1019.3,848.7 M1022.8,847.8 L1026.0,848.8 M1022.8,847.8 L1019.3,848.7 M1022.8,847.8 L1024.6,850.3 M1026.0,848.8 L1029.2,849.7 M1026.0,848.8 L1024.6,850.3 M1029.2,849.7 L1032.3,850.6 M1029.2,849.7 L1027.9,851.8 M1032.3,850.6 L1035.5,851.5 M1032.3,850.6 L1027.9,851.8 M1032.3,850.6 L1034.8,853.1 M1035.5,851.5 L1038.7,852.5 M1035.5,851.5 L1034.8,853.1 M1038.7,852.5 L1041.9,853.4 M1038.7,852.5 L1040.0,854.6 M1041.9,853.4 L1045.1,854.3 M1041.9,853.4 L1040.0,854.6 M1045.1,854.3 L1048.2,855.3 M1045.1,854.3 L1044.7,856.1 M1048.2,855.3 L1051.4,856.2 M1048.2,855.3 L1044.7,856.1 M1051.4,856.2 L1054.6,857.1 M1051.4,856.2 L1049.9,857.9 M1054.6,857.1 L1057.8,858.0 M1054.6,857.1 L1054.7,859.4 M1057.8,858.0 L1061.0,859.0 M1057.8,858.0 L1054.7,859.4 M1061.0,859.0 L1064.1,859.9 M1061.0,859.0 L1059.5,860.7 M1064.1,859.9 L1067.3,860.8 M1064.1,859.9 L1064.0,861.7 M1067.3,860.8 L1070.5,861.8 M1067.3,860.8 L1064.0,861.7 M1067.3,860.8 L1071.0,863.7 M1070.5,861.8 L1073.7,862.7 M1070.5,861.8 L1071.0,863.7 M1073.7,862.7 L1076.9,863.6 M1073.7,862.7 L1071.0,863.7 M1076.9,863.6 L1080.0,864.5 M1076.9,863.6 L1075.7,864.8 M1080.0,864.5 L1083.2,865.5 M1080.0,864.5 L1075.7,864.8 M1080.0,864.5 L1080.7,866.3 M1083.2,865.5 L1086.4,866.4 M1083.2,865.5 L1080.7,866.3 M1086.4,866.4 L1087.6,864.5 M1086.4,866.4 L1084.9,867.8 M1086.4,866.4 L1088.2,867.5 M1087.6,864.5 L1088.9,862.5 M1087.6,864.5 L1090.5,864.7 M1088.9,862.5 L1090.1,860.6 M1088.9,862.5 L1090.5,864.7 M1090.1,860.6 L1091.3,858.6 M1090.1,860.6 L1093.5,861.3 M1091.3,858.6 L1092.6,856.7 M1091.3,858.6 L1095.1,857.8 M1092.6,856.7 L1093.8,854.7 M1092.6,856.7 L1095.1,857.8 M1093.8,854.7 L1095.0,852.8 M1093.8,854.7 L1096.8,854.9 M1095.0,852.8 L1096.3,850.8 M1095.0,852.8 L1096.8,854.9 M1096.3,850.8 L1097.5,848.9 M1096.3,850.8 L1099.5,851.9 M1097.5,848.9 L1098.7,846.9 M1097.5,848.9 L1101.5,848.8 M1098.7,846.9 L1100.0,845.0 M1098.7,846.9 L1101.5,848.8 M1100.0,845.0 L1101.2,843.0 M1100.0,845.0 L1102.5,845.7 M1101.2,843.0 L1102.4,841.1 M1101.2,843.0 L1102.5,845.7 M1101.2,843.0 L1105.1,842.2 M1102.4,841.1 L1103.6,839.2 M1102.4,841.1 L1105.1,842.2 M1103.6,839.2 L1104.9,837.2 M1103.6,839.2 L1105.1,842.2 M1103.6,839.2 L1106.8,838.4 M1104.9,837.2 L1106.1,835.3 M1104.9,837.2 L1106.8,838.4 M1106.1,835.3 L1107.3,833.3 M1106.1,835.3 L1108.5,835.5 M1107.3,833.3 L1108.6,831.4 M1107.3,833.3 L1108.5,835.5 M1107.3,833.3 L1110.7,832.6 M1108.6,831.4 L1109.8,829.4 M1108.6,831.4 L1110.7,832.6 M1109.8,829.4 L1111.0,827.5 M1109.8,829.4 L1112.6,830.6 M1111.0,827.5 L1112.3,825.5 M1111.0,827.5 L1112.6,830.6 M1111.0,827.5 L1114.2,826.5 M1112.3,825.5 L1113.5,823.6 M1112.3,825.5 L1114.2,826.5 M1113.5,823.6 L1114.7,821.6 M1113.5,823.6 L1115.9,824.0 M1114.7,821.6 L1116.0,819.7 M1114.7,821.6 L1115.9,824.0 M1114.7,821.6 L1119.4,820.5 M1116.0,819.7 L1117.2,817.8 M1116.0,819.7 L1119.4,820.5 M1117.2,817.8 L1118.4,815.8 M1117.2,817.8 L1120.6,817.5 M1118.4,815.8 L1119.7,813.9 M1118.4,815.8 L1120.6,817.5 M1119.7,813.9 L1120.9,811.9 M1119.7,813.9 L1122.2,814.2 M1120.9,811.9 L1122.1,810.0 M1120.9,811.9 L1122.2,814.2 M1120.9,811.9 L1124.2,811.1 M1122.1,810.0 L1123.4,808.0 M1122.1,810.0 L1124.2,811.1 M1123.4,808.0 L1124.6,806.1 M1123.4,808.0 L1126.1,808.2 M1124.6,806.1 L1125.8,804.1 M1124.6,806.1 L1126.1,808.2 M1124.6,806.1 L1128.1,804.9 M1125.8,804.1 L1127.1,802.2 M1125.8,804.1 L1128.1,804.9 M1127.1,802.2 L1128.3,800.2 M1127.1,802.2 L1130.3,801.7 M1128.3,800.2 L1129.5,798.3 M1128.3,800.2 L1130.3,801.7 M1129.5,798.3 L1130.8,796.3 M1129.5,798.3 L1132.1,798.7 M1130.8,796.3 L1132.0,794.4 M1130.8,796.3 L1132.1,798.7 M1132.0,794.4 L1133.2,792.5 M1132.0,794.4 L1134.7,795.6 M1133.2,792.5 L1134.4,790.5 M1133.2,792.5 L1136.7,793.1 M1134.4,790.5 L1135.7,788.6 M1134.4,790.5 L1136.7,793.1 M1134.4,790.5 L1138.5,789.1 M1135.7,788.6 L1136.9,786.6 M1135.7,788.6 L1138.5,789.1 M1136.9,786.6 L1138.1,784.7 M1136.9,786.6 L1140.4,786.1 M1138.1,784.7 L1139.4,782.7 M1138.1,784.7 L1140.4,786.1 M1139.4,782.7 L1140.6,780.8 M1139.4,782.7 L1142.4,783.7 M1140.6,780.8 L1141.8,778.8 M1140.6,780.8 L1144.0,780.2 M1141.8,778.8 L1143.1,776.9 M1141.8,778.8 L1144.0,780.2 M1143.1,776.9 L1144.3,774.9 M1143.1,776.9 L1146.8,776.9 M1144.3,774.9 L1145.5,773.0 M1144.3,774.9 L1146.8,776.9 M1145.5,773.0 L1146.8,771.0 M1145.5,773.0 L1148.8,773.8 M1146.8,771.0 L1148.0,769.1 M1146.8,771.0 L1150.4,770.4 M1148.0,769.1 L1149.2,767.2 M1148.0,769.1 L1150.4,770.4 M1149.2,767.2 L1150.5,765.2 M1149.2,767.2 L1152.2,767.9 M1150.5,765.2 L1151.7,763.3 M1150.5,765.2 L1153.5,764.3 M1151.7,763.3 L1152.9,761.3 M1151.7,763.3 L1153.5,764.3 M1152.9,761.3 L1154.2,759.4 M1152.9,761.3 L1153.5,764.3 M1152.9,761.3 L1156.1,760.7 M1154.2,759.4 L1155.4,757.4 M1154.2,759.4 L1156.1,760.7 M1155.4,757.4 L1156.6,755.5 M1155.4,757.4 L1157.7,758.2 M1156.6,755.5 L1157.9,753.5 M1156.6,755.5 L1157.7,758.2 M1156.6,755.5 L1160.0,755.0 M1157.9,753.5 L1159.1,751.6 M1157.9,753.5 L1160.0,755.0 M1159.1,751.6 L1160.3,749.6 M1159.1,751.6 L1162.3,752.3 M1160.3,749.6 L1161.6,747.7 M1160.3,749.6 L1164.1,749.4 M1161.6,747.7 L1162.8,745.7 M1161.6,747.7 L1164.1,749.4 M1162.8,745.7 L1164.0,743.8 M1162.8,745.7 L1165.6,745.8 M1164.0,743.8 L1165.2,741.9 M1164.0,743.8 L1165.6,745.8 M1165.2,741.9 L1166.5,739.9 M1165.2,741.9 L1168.5,742.5 M1166.5,739.9 L1167.7,738.0 M1166.5,739.9 L1169.6,739.5 M1167.7,738.0 L1168.9,736.0 M1167.7,738.0 L1169.6,739.5 M1167.7,738.0 L1171.4,735.8 M1168.9,736.0 L1170.2,734.1 M1168.9,736.0 L1171.4,735.8 M1170.2,734.1 L1171.4,732.1 M1170.2,734.1 L1171.4,735.8 M1171.4,732.1 L1172.6,730.2 M1171.4,732.1 L1174.6,733.3 M1172.6,730.2 L1173.9,728.2 M1172.6,730.2 L1175.3,730.5 M1173.9,728.2 L1175.1,726.3 M1173.9,728.2 L1175.3,730.5 M1173.9,728.2 L1177.2,727.2 M1175.1,726.3 L1176.3,724.3 M1175.1,726.3 L1177.2,727.2 M1176.3,724.3 L1177.6,722.4 M1176.3,724.3 L1179.3,724.1 M1177.6,722.4 L1178.8,720.5 M1177.6,722.4 L1179.3,724.1 M1178.8,720.5 L1180.0,718.5 M1178.8,720.5 L1181.2,721.0 M1180.0,718.5 L1181.3,716.6 M1180.0,718.5 L1181.2,721.0 M1180.0,718.5 L1183.5,717.8 M1181.3,716.6 L1182.5,714.6 M1181.3,716.6 L1183.5,717.8 M1182.5,714.6 L1183.7,712.7 M1182.5,714.6 L1185.3,714.9 M1183.7,712.7 L1185.0,710.7 M1183.7,712.7 L1185.3,714.9 M1183.7,712.7 L1187.3,711.5 M1185.0,710.7 L1186.2,708.8 M1185.0,710.7 L1187.3,711.5 M1186.2,708.8 L1187.4,706.8 M1186.2,708.8 L1189.7,708.5 M1187.4,706.8 L1188.7,704.9 M1187.4,706.8 L1189.7,708.5 M1188.7,704.9 L1189.9,702.9 M1188.7,704.9 L1192.3,705.3 M1189.9,702.9 L1191.1,701.0 M1189.9,702.9 L1192.3,705.3 M1191.1,701.0 L1192.4,699.0 M1191.1,701.0 L1194.0,702.1 M1192.4,699.0 L1193.6,697.1 M1192.4,699.0 L1195.5,698.6 M1193.6,697.1 L1194.8,695.2 M1193.6,697.1 L1195.5,698.6 M1194.8,695.2 L1196.0,693.2 M1194.8,695.2 L1197.5,696.4 M1196.0,693.2 L1197.3,691.3 M1196.0,693.2 L1199.4,694.0 M1197.3,691.3 L1198.5,689.3 M1197.3,691.3 L1199.4,694.0 M1197.3,691.3 L1201.1,689.9 M1198.5,689.3 L1199.7,687.4 M1198.5,689.3 L1201.1,689.9 M1199.7,687.4 L1201.0,685.4 M1199.7,687.4 L1202.9,686.9 M1201.0,685.4 L1202.2,683.5 M1201.0,685.4 L1202.9,686.9 M1202.2,683.5 L1203.4,681.5 M1202.2,683.5 L1205.3,684.1 M1203.4,681.5 L1204.7,679.6 M1203.4,681.5 L1205.3,684.1 M1203.4,681.5 L1206.9,680.0 M1204.7,679.6 L1205.9,677.6 M1204.7,679.6 L1206.9,680.0 M1205.9,677.6 L1207.1,675.7 M1205.9,677.6 L1208.5,677.8 M1207.1,675.7 L1208.4,673.7 M1207.1,675.7 L1208.5,677.8 M1208.4,673.7 L1209.6,671.8 M1208.4,673.7 L1211.5,674.7 M1209.6,671.8 L1210.8,669.9 M1209.6,671.8 L1213.1,671.1 M1210.8,669.9 L1212.1,667.9 M1210.8,669.9 L1213.1,671.1 M1212.1,667.9 L1213.3,666.0 M1212.1,667.9 L1214.9,668.1 M1213.3,666.0 L1214.5,664.0 M1213.3,666.0 L1214.9,668.1 M1214.5,664.0 L1215.8,662.1 M1214.5,664.0 L1217.7,665.1 M1215.8,662.1 L1217.0,660.1 M1215.8,662.1 L1218.8,661.9 M1217.0,660.1 L1218.2,658.2 M1217.0,660.1 L1218.8,661.9 M1217.0,660.1 L1220.7,658.2 M1218.2,658.2 L1219.5,656.2 M1218.2,658.2 L1220.7,658.2 M1219.5,656.2 L1220.7,654.3 M1219.5,656.2 L1220.7,658.2 M1220.7,654.3 L1221.9,652.3 M1220.7,654.3 L1223.1,655.2 M1221.9,652.3 L1223.2,650.4 M1221.9,652.3 L1223.1,655.2 M1221.9,652.3 L1226.4,651.4 M1223.2,650.4 L1224.4,648.4 M1223.2,650.4 L1226.4,651.4 M1224.4,648.4 L1225.6,646.5 M1224.4,648.4 L1227.6,648.8 M1225.6,646.5 L1226.8,644.6 M1225.6,646.5 L1228.5,646.3 M1226.8,644.6 L1228.1,642.6 M1226.8,644.6 L1228.5,646.3 M1228.1,642.6 L1229.3,640.7 M1228.1,642.6 L1230.4,643.3 M1229.3,640.7 L1230.5,638.7 M1229.3,640.7 L1230.4,643.3 M1229.3,640.7 L1233.9,639.7 M1230.5,638.7 L1231.8,636.8 M1230.5,638.7 L1233.9,639.7 M1231.8,636.8 L1233.0,634.8 M1231.8,636.8 L1235.0,636.7 M1233.0,634.8 L1234.2,632.9 M1233.0,634.8 L1235.0,636.7 M1234.2,632.9 L1235.5,630.9 M1234.2,632.9 L1236.8,633.5 M1235.5,630.9 L1236.7,629.0 M1235.5,630.9 L1236.8,633.5 M1235.5,630.9 L1239.1,630.2 M1236.7,629.0 L1237.9,627.0 M1236.7,629.0 L1239.1,630.2 M1237.9,627.0 L1239.2,625.1 M1237.9,627.0 L1240.9,627.3 M1239.2,625.1 L1240.4,623.2 M1239.2,625.1 L1240.9,627.3 M1239.2,625.1 L1242.7,624.3 M1240.4,623.2 L1241.6,621.2 M1240.4,623.2 L1242.7,624.3 M1241.6,621.2 L1242.9,619.3 M1241.6,621.2 L1244.3,621.7 M1242.9,619.3 L1244.1,617.3 M1242.9,619.3 L1244.3,621.7 M1242.9,619.3 L1246.4,618.4 M1244.1,617.3 L1245.3,615.4 M1244.1,617.3 L1246.4,618.4 M1245.3,615.4 L1246.6,613.4 M1245.3,615.4 L1248.5,615.1 M1246.6,613.4 L1247.8,611.5 M1246.6,613.4 L1248.5,615.1 M1247.8,611.5 L1249.0,609.5 M1247.8,611.5 L1251.1,612.4 M1249.0,609.5 L1250.3,607.6 M1249.0,609.5 L1251.1,612.4 M1249.0,609.5 L1252.0,608.4 M1250.3,607.6 L1251.5,605.6 M1250.3,607.6 L1252.0,608.4 M1251.5,605.6 L1252.7,603.7 M1251.5,605.6 L1252.0,608.4 M1251.5,605.6 L1255.6,605.9 M1252.7,603.7 L1254.0,601.7 M1252.7,603.7 L1255.6,605.9 M1252.7,603.7 L1256.7,602.2 M1254.0,601.7 L1255.2,599.8 M1254.0,601.7 L1256.7,602.2 M1255.2,599.8 L1256.4,597.9 M1255.2,599.8 L1258.6,599.2 M1256.4,597.9 L1257.6,595.9 M1256.4,597.9 L1258.6,599.2 M1257.6,595.9 L1258.9,594.0 M1257.6,595.9 L1261.5,596.4 M1258.9,594.0 L1260.1,592.0 M1258.9,594.0 L1262.1,593.3 M1260.1,592.0 L1261.3,590.1 M1260.1,592.0 L1262.1,593.3 M1261.3,590.1 L1262.6,588.1 M1261.3,590.1 L1264.0,590.1 M1262.6,588.1 L1263.8,586.2 M1262.6,588.1 L1264.0,590.1 M1262.6,588.1 L1266.0,586.8 M1263.8,586.2 L1265.0,584.2 M1263.8,586.2 L1266.0,586.8 M1265.0,584.2 L1266.3,582.3 M1265.0,584.2 L1267.7,584.3 M1266.3,582.3 L1267.5,580.3 M1266.3,582.3 L1267.7,584.3 M1266.3,582.3 L1269.8,581.0 M1267.5,580.3 L1268.7,578.4 M1267.5,580.3 L1269.8,581.0 M1268.7,578.4 L1270.0,576.4 M1268.7,578.4 L1272.1,577.7 M1270.0,576.4 L1271.2,574.5 M1270.0,576.4 L1272.1,577.7 M1271.2,574.5 L1272.4,572.6 M1271.2,574.5 L1274.0,574.5 M1272.4,572.6 L1273.7,570.6 M1272.4,572.6 L1274.0,574.5 M1272.4,572.6 L1276.2,571.2 M1273.7,570.6 L1274.9,568.7 M1273.7,570.6 L1276.2,571.2 M1274.9,568.7 L1276.1,566.7 M1274.9,568.7 L1278.7,568.6 M1276.1,566.7 L1277.4,564.8 M1276.1,566.7 L1278.7,568.6 M1277.4,564.8 L1278.6,562.8 M1277.4,564.8 L1280.4,565.0 M1278.6,562.8 L1279.8,560.9 M1278.6,562.8 L1280.4,565.0 M1279.8,560.9 L1281.1,558.9 M1279.8,560.9 L1282.9,561.6 M1281.1,558.9 L1282.3,557.0 M1281.1,558.9 L1284.1,559.1 M1282.3,557.0 L1283.5,555.0 M1282.3,557.0 L1284.1,559.1 M1283.5,555.0 L1284.8,553.1 M1283.5,555.0 L1286.8,556.7 M1284.8,553.1 L1286.0,551.1 M1284.8,553.1 L1287.7,553.2 M1286.0,551.1 L1287.2,549.2 M1286.0,551.1 L1287.7,553.2 M1287.2,549.2 L1288.4,547.3 M1287.2,549.2 L1289.7,550.0 M1288.4,547.3 L1289.7,545.3 M1288.4,547.3 L1289.7,550.0 M1288.4,547.3 L1292.0,546.6 M1289.7,545.3 L1290.9,543.4 M1289.7,545.3 L1292.0,546.6 M1290.9,543.4 L1292.1,541.4 M1290.9,543.4 L1294.1,543.4 M1292.1,541.4 L1293.4,539.5 M1292.1,541.4 L1294.1,543.4 M1293.4,539.5 L1294.6,537.5 M1293.4,539.5 L1296.9,540.8 M1294.6,537.5 L1295.8,535.6 M1294.6,537.5 L1297.6,537.4 M1295.8,535.6 L1297.1,533.6 M1295.8,535.6 L1297.6,537.4 M1297.1,533.6 L1298.3,531.7 M1297.1,533.6 L1299.3,534.3 M1298.3,531.7 L1299.5,529.7 M1298.3,531.7 L1299.3,534.3 M1298.3,531.7 L1302.6,530.5 M1299.5,529.7 L1300.8,527.8 M1299.5,529.7 L1302.6,530.5 M1300.8,527.8 L1302.0,525.9 M1300.8,527.8 L1304.0,527.6 M1302.0,525.9 L1303.2,523.9 M1302.0,525.9 L1304.0,527.6 M1303.2,523.9 L1304.5,522.0 M1303.2,523.9 L1306.3,525.0 M1304.5,522.0 L1305.7,520.0 M1304.5,522.0 L1306.3,525.0 M1304.5,522.0 L1307.8,521.0 M1305.7,520.0 L1306.9,518.1 M1305.7,520.0 L1307.8,521.0 M1306.9,518.1 L1308.2,516.1 M1306.9,518.1 L1309.6,518.4 M1308.2,516.1 L1309.4,514.2 M1308.2,516.1 L1309.6,518.4 M1308.2,516.1 L1311.6,515.4 M1309.4,514.2 L1310.6,512.2 M1309.4,514.2 L1311.6,515.4 M1310.6,512.2 L1311.9,510.3 M1310.6,512.2 L1313.7,513.4 M1311.9,510.3 L1313.1,508.3 M1311.9,510.3 L1313.7,513.4 M1311.9,510.3 L1315.5,509.2 M1313.1,508.3 L1314.3,506.4 M1313.1,508.3 L1315.5,509.2 M1314.3,506.4 L1315.6,504.4 M1314.3,506.4 L1317.6,506.1 M1315.6,504.4 L1316.8,502.5 M1315.6,504.4 L1317.6,506.1 M1316.8,502.5 L1318.0,500.6 M1316.8,502.5 L1319.4,502.7 M1318.0,500.6 L1319.2,498.6 M1318.0,500.6 L1319.4,502.7 M1318.0,500.6 L1321.6,499.4 M1319.2,498.6 L1320.5,496.7 M1319.2,498.6 L1321.6,499.4 M1320.5,496.7 L1321.7,494.7 M1320.5,496.7 L1323.9,496.8 M1321.7,494.7 L1322.9,492.8 M1321.7,494.7 L1323.9,496.8 M1322.9,492.8 L1324.2,490.8 M1322.9,492.8 L1325.8,493.9 M1324.2,490.8 L1325.4,488.9 M1324.2,490.8 L1327.2,490.8 M1325.4,488.9 L1326.6,486.9 M1325.4,488.9 L1327.2,490.8 M1325.4,488.9 L1329.1,487.4 M1326.6,486.9 L1327.9,485.0 M1326.6,486.9 L1329.1,487.4 M1327.9,485.0 L1329.1,483.0 M1327.9,485.0 L1331.3,484.2 M1329.1,483.0 L1330.3,481.1 M1329.1,483.0 L1331.3,484.2 M1330.3,481.1 L1331.6,479.1 M1330.3,481.1 L1333.8,481.5 M1331.6,479.1 L1332.8,477.2 M1331.6,479.1 L1333.8,481.5 M1331.6,479.1 L1334.7,477.8 M1332.8,477.2 L1329.6,476.3 M1332.8,477.2 L1334.7,477.8 M1332.8,477.2 L1334.3,476.0 M1329.6,476.3 L1326.4,475.3 M1329.6,476.3 L1328.1,474.1 M1326.4,475.3 L1323.3,474.4 M1326.4,475.3 L1328.1,474.1 M1323.3,474.4 L1320.1,473.5 M1323.3,474.4 L1323.4,472.6 M1320.1,473.5 L1316.9,472.6 M1320.1,473.5 L1323.4,472.6 M1316.9,472.6 L1313.7,471.6 M1316.9,472.6 L1318.4,470.8 M1313.7,471.6 L1310.5,470.7 M1313.7,471.6 L1313.3,469.9 M1310.5,470.7 L1307.4,469.8 M1310.5,470.7 L1313.3,469.9 M1310.5,470.7 L1307.9,468.3 M1307.4,469.8 L1304.2,468.8 M1307.4,469.8 L1307.9,468.3 M1304.2,468.8 L1301.0,467.9 M1304.2,468.8 L1303.6,466.6 M1301.0,467.9 L1297.8,467.0 M1301.0,467.9 L1303.6,466.6 M1297.8,467.0 L1294.6,466.1 M1297.8,467.0 L1297.8,465.1 M1294.6,466.1 L1291.5,465.1 M1294.6,466.1 L1297.8,465.1 M1291.5,465.1 L1288.3,464.2 M1291.5,465.1 L1292.2,463.1 M1288.3,464.2 L1285.1,463.3 M1288.3,464.2 L1287.9,462.2 M1285.1,463.3 L1281.9,462.3 M1285.1,463.3 L1287.9,462.2 M1281.9,462.3 L1278.7,461.4 M1281.9,462.3 L1282.4,460.8 M1278.7,461.4 L1275.6,460.5 M1278.7,461.4 L1282.4,460.8 M1278.7,461.4 L1277.1,459.2 M1275.6,460.5 L1272.4,459.6 M1275.6,460.5 L1277.1,459.2 M1272.4,459.6 L1269.2,458.6 M1272.4,459.6 L1272.7,457.7 M1269.2,458.6 L1266.0,457.7 M1269.2,458.6 L1272.7,457.7 M1269.2,458.6 L1267.4,456.1 M1266.0,457.7 L1262.8,456.8 M1266.0,457.7 L1267.4,456.1 M1262.8,456.8 L1259.7,455.8 M1262.8,456.8 L1262.3,454.6 M1259.7,455.8 L1256.5,454.9 M1259.7,455.8 L1262.3,454.6 M1256.5,454.9 L1253.3,454.0 M1256.5,454.9 L1258.0,452.7 M1253.3,454.0 L1250.1,453.1 M1253.3,454.0 L1252.6,452.0 M1250.1,453.1 L1246.9,452.1 M1250.1,453.1 L1252.6,452.0 M1246.9,452.1 L1243.8,451.2 M1246.9,452.1 L1246.8,450.2 M1243.8,451.2 L1240.6,450.3 M1243.8,451.2 L1246.8,450.2 M1240.6,450.3 L1237.4,449.4 M1240.6,450.3 L1242.4,448.1 M1237.4,449.4 L1234.2,448.4 M1237.4,449.4 L1238.1,447.6 M1234.2,448.4 L1231.0,447.5 M1234.2,448.4 L1238.1,447.6 M1234.2,448.4 L1232.1,445.7 M1231.0,447.5 L1227.9,446.6 M1231.0,447.5 L1232.1,445.7 M1227.9,446.6 L1224.7,445.6 M1227.9,446.6 L1232.1,445.7 M1227.9,446.6 L1225.8,444.2 M1224.7,445.6 L1221.5,444.7 M1224.7,445.6 L1225.8,444.2 M1221.5,444.7 L1218.3,443.8 M1221.5,444.7 L1221.4,443.0 M1218.3,443.8 L1215.1,442.9 M1218.3,443.8 L1221.4,443.0 M1218.3,443.8 L1216.2,441.6 M1215.1,442.9 L1212.0,441.9 M1215.1,442.9 L1216.2,441.6 M1212.0,441.9 L1208.8,441.0 M1212.0,441.9 L1212.0,440.4 M1208.8,441.0 L1205.6,440.1 M1208.8,441.0 L1212.0,440.4 M1208.8,441.0 L1206.7,438.8 M1205.6,440.1 L1202.4,439.1 M1205.6,440.1 L1206.7,438.8 M1202.4,439.1 L1199.2,438.2 M1202.4,439.1 L1201.5,437.1 M1199.2,438.2 L1196.1,437.3 M1199.2,438.2 L1201.5,437.1 M1196.1,437.3 L1192.9,436.4 M1196.1,437.3 L1196.5,435.1 M1192.9,436.4 L1189.7,435.4 M1192.9,436.4 L1196.5,435.1 M1189.7,435.4 L1186.5,434.5 M1189.7,435.4 L1191.6,433.6 M1186.5,434.5 L1183.3,433.6 M1186.5,434.5 L1186.7,432.7 M1183.3,433.6 L1180.2,432.6 M1183.3,433.6 L1186.7,432.7 M1183.3,433.6 L1181.1,431.1 M1180.2,432.6 L1177.0,431.7 M1180.2,432.6 L1181.1,431.1 M1177.0,431.7 L1173.8,430.8 M1177.0,431.7 L1175.7,429.4 M1173.8,430.8 L1170.6,429.9 M1173.8,430.8 L1175.7,429.4 M1170.6,429.9 L1167.4,428.9 M1170.6,429.9 L1170.9,428.0 M1167.4,428.9 L1164.3,428.0 M1167.4,428.9 L1170.9,428.0 M1164.3,428.0 L1161.1,427.1 M1164.3,428.0 L1166.0,426.1 M1161.1,427.1 L1157.9,426.1 M1161.1,427.1 L1161.9,424.7 M1157.9,426.1 L1154.7,425.2 M1157.9,426.1 L1161.9,424.7 M1157.9,426.1 L1155.3,423.5 M1154.7,425.2 L1151.5,424.3 M1154.7,425.2 L1155.3,423.5 M1151.5,424.3 L1148.4,423.4 M1151.5,424.3 L1150.0,422.0 M1148.4,423.4 L1145.2,422.4 M1148.4,423.4 L1150.0,422.0 M1145.2,422.4 L1142.0,421.5 M1145.2,422.4 L1144.7,421.0 M1142.0,421.5 L1138.8,420.6 M1142.0,421.5 L1144.7,421.0 M1138.8,420.6 L1135.6,419.6 M1138.8,420.6 L1141.4,418.6 M1135.6,419.6 L1132.5,418.7 M1135.6,419.6 L1135.7,417.6 M1132.5,418.7 L1129.3,417.8 M1132.5,418.7 L1135.7,417.6 M1129.3,417.8 L1126.1,416.9 M1129.3,417.8 L1130.2,416.4 M1126.1,416.9 L1122.9,415.9 M1126.1,416.9 L1130.2,416.4 M1126.1,416.9 L1124.9,414.9 M1122.9,415.9 L1119.7,415.0 M1122.9,415.9 L1124.9,414.9 M1119.7,415.0 L1116.6,414.1 M1119.7,415.0 L1120.7,413.3 M1116.6,414.1 L1113.4,413.1 M1116.6,414.1 L1115.0,412.1 M1113.4,413.1 L1110.2,412.2 M1113.4,413.1 L1115.0,412.1 M1110.2,412.2 L1107.0,411.3 M1110.2,412.2 L1115.0,412.1 M1110.2,412.2 L1109.1,410.0 M1107.0,411.3 L1103.8,410.4 M1107.0,411.3 L1109.1,410.0 M1103.8,410.4 L1100.7,409.4 M1103.8,410.4 L1104.7,408.3 M1100.7,409.4 L1097.5,408.5 M1100.7,409.4 L1100.0,406.7 M1097.5,408.5 L1094.3,407.6 M1097.5,408.5 L1100.0,406.7 M1094.3,407.6 L1091.1,406.6 M1094.3,407.6 L1095.0,405.3 M1091.1,406.6 L1087.9,405.7 M1091.1,406.6 L1089.5,404.2 M1087.9,405.7 L1084.8,404.8 M1087.9,405.7 L1089.5,404.2 M1084.8,404.8 L1081.6,403.9 M1084.8,404.8 L1084.9,402.8 M1081.6,403.9 L1078.4,402.9 M1081.6,403.9 L1084.9,402.8 M1078.4,402.9 L1075.2,402.0 M1078.4,402.9 L1080.5,400.9 M1075.2,402.0 L1072.0,401.1 M1075.2,402.0 L1074.8,400.0 M1072.0,401.1 L1068.9,400.1 M1072.0,401.1 L1074.8,400.0 M1068.9,400.1 L1065.7,399.2 M1068.9,400.1 L1069.4,398.5 M1065.7,399.2 L1062.5,398.3 M1065.7,399.2 L1069.4,398.5 M1065.7,399.2 L1064.0,397.1 M1062.5,398.3 L1059.3,397.4 M1062.5,398.3 L1064.0,397.1 M1059.3,397.4 L1056.1,396.4 M1059.3,397.4 L1059.1,395.4 M1056.1,396.4 L1053.0,395.5 M1056.1,396.4 L1059.1,395.4 M1053.0,395.5 L1049.8,394.6 M1053.0,395.5 L1054.7,393.7 M1049.8,394.6 L1046.6,393.7 M1049.8,394.6 L1054.7,393.7 M1049.8,394.6 L1047.8,392.4 M1046.6,393.7 L1043.4,392.7 M1046.6,393.7 L1047.8,392.4 M1043.4,392.7 L1040.2,391.8 M1043.4,392.7 L1043.8,391.1 M1040.2,391.8 L1037.1,390.9 M1040.2,391.8 L1043.8,391.1 M1040.2,391.8 L1037.9,388.8 M1037.1,390.9 L1033.9,389.9 M1037.1,390.9 L1037.9,388.8 M1033.9,389.9 L1030.7,389.0 M1033.9,389.9 L1034.2,388.1 M1030.7,389.0 L1027.5,388.1 M1030.7,389.0 L1034.2,388.1 M1030.7,389.0 L1028.2,385.8 M1027.5,388.1 L1024.3,387.2 M1027.5,388.1 L1028.2,385.8 M1024.3,387.2 L1021.2,386.2 M1024.3,387.2 L1023.3,384.9 M1021.2,386.2 L1018.0,385.3 M1021.2,386.2 L1023.3,384.9 M1018.0,385.3 L1014.8,384.4 M1018.0,385.3 L1018.0,383.6 M1014.8,384.4 L1011.6,383.4 M1014.8,384.4 L1018.0,383.6 M1014.8,384.4 L1012.7,382.1 M1011.6,383.4 L1008.4,382.5 M1011.6,383.4 L1012.7,382.1 M1008.4,382.5 L1005.3,381.6 M1008.4,382.5 L1008.6,380.8 M1005.3,381.6 L1002.1,380.7 M1005.3,381.6 L1008.6,380.8 M1005.3,381.6 L1003.2,379.3 M1002.1,380.7 L998.9,379.7 M1002.1,380.7 L1003.2,379.3 M998.9,379.7 L995.7,378.8 M998.9,379.7 L997.8,377.6 M995.7,378.8 L992.5,377.9 M995.7,378.8 L997.8,377.6 M992.5,377.9 L989.4,376.9 M992.5,377.9 L994.0,376.0 M989.4,376.9 L986.2,376.0 M989.4,376.9 L988.3,374.7 M986.2,376.0 L983.0,375.1 M986.2,376.0 L988.3,374.7 M983.0,375.1 L979.8,374.2 M983.0,375.1 L983.7,373.0 M979.8,374.2 L976.6,373.2 M979.8,374.2 L983.7,373.0 M979.8,374.2 L977.2,371.6 M976.6,373.2 L973.5,372.3 M976.6,373.2 L977.2,371.6 M973.5,372.3 L970.3,371.4 M973.5,372.3 L972.1,370.1 M970.3,371.4 L967.1,370.4 M970.3,371.4 L972.1,370.1 M967.1,370.4 L963.9,369.5 M967.1,370.4 L968.2,368.7 M963.9,369.5 L960.7,368.6 M963.9,369.5 L962.7,367.3 M960.7,368.6 L957.6,367.7 M960.7,368.6 L962.7,367.3 M957.6,367.7 L954.4,366.7 M957.6,367.7 L958.1,365.5 M954.4,366.7 L951.2,365.8 M954.4,366.7 L958.1,365.5 M954.4,366.7 L952.0,364.6 M951.2,365.8 L950.0,367.7 M951.2,365.8 L952.0,364.6 M951.2,365.8 L949.3,364.7 M950.0,367.7 L948.7,369.7 M950.0,367.7 L947.3,367.9 M948.7,369.7 L947.5,371.6 M948.7,369.7 L947.3,367.9 M948.7,369.7 L945.1,371.1 M947.5,371.6 L946.3,373.6 M947.5,371.6 L945.1,371.1 M946.3,373.6 L945.0,375.5 M946.3,373.6 L943.0,373.8 M945.0,375.5 L943.8,377.5 M945.0,375.5 L943.0,373.8 M943.8,377.5 L942.6,379.4 M943.8,377.5 L943.0,373.8 M943.8,377.5 L940.4,378.1 M942.6,379.4 L941.3,381.4 M942.6,379.4 L940.4,378.1 M941.3,381.4 L940.1,383.3 M941.3,381.4 L939.0,380.5 M940.1,383.3 L938.9,385.3 M940.1,383.3 L939.0,380.5 M940.1,383.3 L935.9,384.2 M938.9,385.3 L937.6,387.2 M938.9,385.3 L935.9,384.2 M937.6,387.2 L936.4,389.2 M937.6,387.2 L934.6,387.0 M936.4,389.2 L935.2,391.1 M936.4,389.2 L934.6,387.0 M935.2,391.1 L934.0,393.0 M935.2,391.1 L932.0,388.9 M935.2,391.1 L931.6,393.3 M934.0,393.0 L932.7,395.0 M934.0,393.0 L931.6,393.3 M932.7,395.0 L931.5,396.9 M932.7,395.0 L931.6,393.3 M931.5,396.9 L930.3,398.9 M931.5,396.9 L929.1,396.3 M930.3,398.9 L929.0,400.8 M930.3,398.9 L929.1,396.3 M930.3,398.9 L925.9,400.0 M929.0,400.8 L927.8,402.8 M929.0,400.8 L925.9,400.0 M927.8,402.8 L926.6,404.7 M927.8,402.8 L925.3,402.4 M926.6,404.7 L925.3,406.7 M926.6,404.7 L925.3,402.4 M926.6,404.7 L923.3,405.4 M925.3,406.7 L924.1,408.6 M925.3,406.7 L923.3,405.4 M924.1,408.6 L922.9,410.6 M924.1,408.6 L921.6,408.1 M922.9,410.6 L921.6,412.5 M922.9,410.6 L921.6,408.1 M922.9,410.6 L918.4,411.7 M921.6,412.5 L920.4,414.5 M921.6,412.5 L918.4,411.7 M920.4,414.5 L919.2,416.4 M920.4,414.5 L917.2,414.7 M919.2,416.4 L917.9,418.3 M919.2,416.4 L917.2,414.7 M917.9,418.3 L916.7,420.3 M917.9,418.3 L915.4,418.0 M916.7,420.3 L915.5,422.2 M916.7,420.3 L915.4,418.0 M916.7,420.3 L913.5,421.0 M915.5,422.2 L914.2,424.2 M915.5,422.2 L913.5,421.0 M914.2,424.2 L913.0,426.1 M914.2,424.2 L911.1,422.8 M913.0,426.1 L911.8,428.1 M913.0,426.1 L911.1,422.8 M913.0,426.1 L908.2,427.5 M911.8,428.1 L910.5,430.0 M911.8,428.1 L908.2,427.5 M910.5,430.0 L909.3,432.0 M910.5,430.0 L907.4,430.5 M909.3,432.0 L908.1,433.9 M909.3,432.0 L907.4,430.5 M908.1,433.9 L906.8,435.9 M908.1,433.9 L905.4,433.7 M906.8,435.9 L905.6,437.8 M906.8,435.9 L905.4,433.7 M906.8,435.9 L903.3,437.0 M905.6,437.8 L904.4,439.7 M905.6,437.8 L903.3,437.0 M904.4,439.7 L903.2,441.7 M904.4,439.7 L901.8,439.6 M903.2,441.7 L901.9,443.6 M903.2,441.7 L901.8,439.6 M903.2,441.7 L898.7,443.4 M901.9,443.6 L900.7,445.6 M901.9,443.6 L898.7,443.4 M900.7,445.6 L899.5,447.5 M900.7,445.6 L898.1,445.6 M899.5,447.5 L898.2,449.5 M899.5,447.5 L898.1,445.6 M899.5,447.5 L896.0,449.3 M898.2,449.5 L897.0,451.4 M898.2,449.5 L896.0,449.3 M897.0,451.4 L895.8,453.4 M897.0,451.4 L896.0,449.3 M895.8,453.4 L894.5,455.3 M895.8,453.4 L892.8,452.4 M894.5,455.3 L893.3,457.3 M894.5,455.3 L890.7,455.3 M893.3,457.3 L892.1,459.2 M893.3,457.3 L890.7,455.3 M892.1,459.2 L890.8,461.2 M892.1,459.2 L888.9,458.1 M890.8,461.2 L889.6,463.1 M890.8,461.2 L887.4,460.7 M889.6,463.1 L888.4,465.0 M889.6,463.1 L887.4,460.7 M889.6,463.1 L885.8,464.7 M888.4,465.0 L887.1,467.0 M888.4,465.0 L885.8,464.7 M887.1,467.0 L885.9,468.9 M887.1,467.0 L883.4,467.3 M885.9,468.9 L884.7,470.9 M885.9,468.9 L883.4,467.3 M884.7,470.9 L883.4,472.8 M884.7,470.9 L881.7,470.7 M883.4,472.8 L882.2,474.8 M883.4,472.8 L881.7,470.7 M882.2,474.8 L881.0,476.7 M882.2,474.8 L880.1,473.8 M881.0,476.7 L879.7,478.7 M881.0,476.7 L880.1,473.8 M881.0,476.7 L877.0,476.7 M879.7,478.7 L878.5,480.6 M879.7,478.7 L877.0,476.7 M879.7,478.7 L876.0,480.6 M878.5,480.6 L877.3,482.6 M878.5,480.6 L876.0,480.6 M877.3,482.6 L876.0,484.5 M877.3,482.6 L876.0,480.6 M876.0,484.5 L874.8,486.5 M876.0,484.5 L872.6,483.0 M874.8,486.5 L873.6,488.4 M874.8,486.5 L871.6,486.4 M873.6,488.4 L872.4,490.3 M873.6,488.4 L871.6,486.4 M872.4,490.3 L871.1,492.3 M872.4,490.3 L869.9,489.7 M871.1,492.3 L869.9,494.2 M871.1,492.3 L869.9,489.7 M871.1,492.3 L867.9,493.1 M869.9,494.2 L868.7,496.2 M869.9,494.2 L867.9,493.1 M868.7,496.2 L867.4,498.1 M868.7,496.2 L866.2,495.7 M867.4,498.1 L866.2,500.1 M867.4,498.1 L866.2,495.7 M867.4,498.1 L863.0,499.2 M866.2,500.1 L865.0,502.0 M866.2,500.1 L863.0,499.2 M865.0,502.0 L863.7,504.0 M865.0,502.0 L861.8,502.2 M863.7,504.0 L862.5,505.9 M863.7,504.0 L861.8,502.2 M862.5,505.9 L861.3,507.9 M862.5,505.9 L859.4,505.4 M861.3,507.9 L860.0,509.8 M861.3,507.9 L858.3,507.9 M860.0,509.8 L858.8,511.8 M860.0,509.8 L858.3,507.9 M858.8,511.8 L857.6,513.7 M858.8,511.8 L855.7,510.5 M857.6,513.7 L856.3,515.6 M857.6,513.7 L855.7,510.5 M857.6,513.7 L853.7,514.6 M856.3,515.6 L855.1,517.6 M856.3,515.6 L853.7,514.6 M855.1,517.6 L853.9,519.5 M855.1,517.6 L852.4,517.2 M853.9,519.5 L852.6,521.5 M853.9,519.5 L852.4,517.2 M853.9,519.5 L849.8,520.8 M852.6,521.5 L851.4,523.4 M852.6,521.5 L849.8,520.8 M851.4,523.4 L850.2,525.4 M851.4,523.4 L849.8,520.8 M851.4,523.4 L847.8,524.4 M850.2,525.4 L848.9,527.3 M850.2,525.4 L847.8,524.4 M848.9,527.3 L847.7,529.3 M848.9,527.3 L845.7,526.5 M847.7,529.3 L846.5,531.2 M847.7,529.3 L845.7,526.5 M847.7,529.3 L844.3,530.5 M846.5,531.2 L845.2,533.2 M846.5,531.2 L844.3,530.5 M845.2,533.2 L844.0,535.1 M845.2,533.2 L842.6,533.3 M844.0,535.1 L842.8,537.0 M844.0,535.1 L842.6,533.3 M844.0,535.1 L840.5,536.3 M842.8,537.0 L841.6,539.0 M842.8,537.0 L840.5,536.3 M841.6,539.0 L840.3,540.9 M841.6,539.0 L838.9,538.9 M840.3,540.9 L839.1,542.9 M840.3,540.9 L838.9,538.9 M840.3,540.9 L837.0,542.7 M839.1,542.9 L837.9,544.8 M839.1,542.9 L837.0,542.7 M837.9,544.8 L836.6,546.8 M837.9,544.8 L837.0,542.7 M836.6,546.8 L835.4,548.7 M836.6,546.8 L833.9,545.7 M835.4,548.7 L834.2,550.7 M835.4,548.7 L832.5,548.7 M834.2,550.7 L832.9,552.6 M834.2,550.7 L832.5,548.7 M834.2,550.7 L830.5,552.1 M832.9,552.6 L831.7,554.6 M832.9,552.6 L830.5,552.1 M831.7,554.6 L830.5,556.5 M831.7,554.6 L828.5,555.2 M830.5,556.5 L829.2,558.5 M830.5,556.5 L828.5,555.2 M829.2,558.5 L828.0,560.4 M829.2,558.5 L826.3,557.5 M828.0,560.4 L826.8,562.3 M828.0,560.4 L824.4,561.1 M826.8,562.3 L825.5,564.3 M826.8,562.3 L824.4,561.1 M825.5,564.3 L824.3,566.2 M825.5,564.3 L821.9,564.4 M824.3,566.2 L823.1,568.2 M824.3,566.2 L821.9,564.4 M823.1,568.2 L821.8,570.1 M823.1,568.2 L820.8,567.4 M821.8,570.1 L820.6,572.1 M821.8,570.1 L820.8,567.4 M821.8,570.1 L818.7,570.6 M820.6,572.1 L819.4,574.0 M820.6,572.1 L818.7,570.6 M819.4,574.0 L818.1,576.0 M819.4,574.0 L816.4,573.4 M818.1,576.0 L816.9,577.9 M818.1,576.0 L815.3,576.9 M816.9,577.9 L815.7,579.9 M816.9,577.9 L815.3,576.9 M815.7,579.9 L814.4,581.8 M815.7,579.9 L815.3,576.9 M815.7,579.9 L812.5,580.2 M814.4,581.8 L813.2,583.8 M814.4,581.8 L812.5,580.2 M813.2,583.8 L812.0,585.7 M813.2,583.8 L810.5,582.3 M812.0,585.7 L810.8,587.6 M812.0,585.7 L810.5,582.3 M812.0,585.7 L808.5,586.6 M810.8,587.6 L809.5,589.6 M810.8,587.6 L808.5,586.6 M809.5,589.6 L808.3,591.5 M809.5,589.6 L806.4,589.6 M808.3,591.5 L807.1,593.5 M808.3,591.5 L806.4,589.6 M807.1,593.5 L805.8,595.4 M807.1,593.5 L803.7,592.1 M805.8,595.4 L804.6,597.4 M805.8,595.4 L802.9,595.4 M804.6,597.4 L803.4,599.3 M804.6,597.4 L802.9,595.4 M803.4,599.3 L802.1,601.3 M803.4,599.3 L800.9,598.7 M802.1,601.3 L800.9,603.2 M802.1,601.3 L800.9,598.7 M802.1,601.3 L798.8,602.1 M800.9,603.2 L799.7,605.2 M800.9,603.2 L798.8,602.1 M799.7,605.2 L798.4,607.1 M799.7,605.2 L797.1,605.0 M798.4,607.1 L797.2,609.0 M798.4,607.1 L797.1,605.0 M798.4,607.1 L795.1,608.1 M797.2,609.0 L796.0,611.0 M797.2,609.0 L795.1,608.1 M796.0,611.0 L794.7,612.9 M796.0,611.0 L793.5,610.7 M794.7,612.9 L793.5,614.9 M794.7,612.9 L793.5,610.7 M794.7,612.9 L791.4,614.1 M793.5,614.9 L792.3,616.8 M793.5,614.9 L791.4,614.1 M792.3,616.8 L791.0,618.8 M792.3,616.8 L789.0,617.3 M791.0,618.8 L789.8,620.7 M791.0,618.8 L789.0,617.3 M789.8,620.7 L788.6,622.7 M789.8,620.7 L785.8,620.0 M788.6,622.7 L787.3,624.6 M788.6,622.7 L785.0,623.1 M787.3,624.6 L786.1,626.6 M787.3,624.6 L785.0,623.1 M786.1,626.6 L784.9,628.5 M786.1,626.6 L783.2,626.4 M784.9,628.5 L783.6,630.5 M784.9,628.5 L783.2,626.4 M784.9,628.5 L781.3,629.7 M783.6,630.5 L782.4,632.4 M783.6,630.5 L781.3,629.7 M782.4,632.4 L781.2,634.3 M782.4,632.4 L779.2,632.9 M781.2,634.3 L780.0,636.3 M781.2,634.3 L779.2,632.9 M780.0,636.3 L778.7,638.2 M780.0,636.3 L776.7,635.5 M778.7,638.2 L777.5,640.2 M778.7,638.2 L776.7,635.5 M778.7,638.2 L775.0,639.5 M777.5,640.2 L776.3,642.1 M777.5,640.2 L775.0,639.5 M776.3,642.1 L775.0,644.1 M776.3,642.1 L773.3,642.2 M775.0,644.1 L773.8,646.0 M775.0,644.1 L773.3,642.2 M775.0,644.1 L771.4,645.5 M773.8,646.0 L772.6,648.0 M773.8,646.0 L771.4,645.5 M772.6,648.0 L771.3,649.9 M772.6,648.0 L769.2,648.6 M771.3,649.9 L770.1,651.9 M771.3,649.9 L769.2,648.6 M770.1,651.9 L768.9,653.8 M770.1,651.9 L766.5,651.9 M768.9,653.8 L767.6,655.8 M768.9,653.8 L766.5,651.9 M767.6,655.8 L766.4,657.7 M767.6,655.8 L764.8,654.9 M766.4,657.7 L765.2,659.6 M766.4,657.7 L763.7,657.4 M765.2,659.6 L763.9,661.6 M765.2,659.6 L763.7,657.4 M763.9,661.6 L762.7,663.5 M763.9,661.6 L761.9,660.6 M762.7,663.5 L761.5,665.5 M762.7,663.5 L761.9,660.6 M762.7,663.5 L758.6,664.0 M761.5,665.5 L760.2,667.4 M761.5,665.5 L758.6,664.0 M760.2,667.4 L759.0,669.4 M760.2,667.4 L757.0,666.7 M759.0,669.4 L757.8,671.3 M759.0,669.4 L755.5,670.2 M757.8,671.3 L756.5,673.3 M757.8,671.3 L755.5,670.2 M756.5,673.3 L755.3,675.2 M756.5,673.3 L753.8,673.2 M755.3,675.2 L754.1,677.2 M755.3,675.2 L753.8,673.2 M754.1,677.2 L752.8,679.1 M754.1,677.2 L751.6,676.3 M752.8,679.1 L751.6,681.1 M752.8,679.1 L751.6,676.3 M752.8,679.1 L748.3,680.1 M751.6,681.1 L750.4,683.0 M751.6,681.1 L748.3,680.1 M750.4,683.0 L749.2,684.9 M750.4,683.0 L747.6,682.6 M749.2,684.9 L747.9,686.9 M749.2,684.9 L747.6,682.6 M749.2,684.9 L745.8,685.9 M747.9,686.9 L746.7,688.8 M747.9,686.9 L745.8,685.9 M746.7,688.8 L745.5,690.8 M746.7,688.8 L743.7,688.9 M745.5,690.8 L744.2,692.7 M745.5,690.8 L743.7,688.9 M744.2,692.7 L743.0,694.7 M744.2,692.7 L741.3,691.3 M743.0,694.7 L741.8,696.6 M743.0,694.7 L741.3,691.3 M743.0,694.7 L739.6,695.4 M741.8,696.6 L740.5,698.6 M741.8,696.6 L739.6,695.4 M740.5,698.6 L739.3,700.5 M740.5,698.6 L737.8,698.2 M739.3,700.5 L738.1,702.5 M739.3,700.5 L737.8,698.2 M739.3,700.5 L735.9,701.2 M738.1,702.5 L736.8,704.4 M738.1,702.5 L735.9,701.2 M736.8,704.4 L735.6,706.4 M736.8,704.4 L734.1,703.8 M735.6,706.4 L734.4,708.3 M735.6,706.4 L734.1,703.8 M735.6,706.4 L731.7,707.5 M734.4,708.3 L733.1,710.2 M734.4,708.3 L731.7,707.5 M733.1,710.2 L731.9,712.2 M733.1,710.2 L731.7,707.5 M733.1,710.2 L729.6,711.3 M731.9,712.2 L730.7,714.1 M731.9,712.2 L729.6,711.3 M730.7,714.1 L729.4,716.1 M730.7,714.1 L728.0,714.0 M729.4,716.1 L728.2,718.0 M729.4,716.1 L728.0,714.0 M729.4,716.1 L726.2,717.2 M728.2,718.0 L727.0,720.0 M728.2,718.0 L726.2,717.2 M727.0,720.0 L725.7,721.9 M727.0,720.0 L723.9,719.0 M725.7,721.9 L724.5,723.9 M725.7,721.9 L723.9,719.0 M725.7,721.9 L720.7,723.5 M724.5,723.9 L723.3,725.8 M724.5,723.9 L720.7,723.5 M723.3,725.8 L722.0,727.8 M723.3,725.8 L720.0,726.4 M722.0,727.8 L720.8,729.7 M722.0,727.8 L720.0,726.4 M720.8,729.7 L719.6,731.6 M720.8,729.7 L718.2,729.5 M719.6,731.6 L718.4,733.6 M719.6,731.6 L718.2,729.5 M719.6,731.6 L716.0,732.8 M718.4,733.6 L717.1,735.5 M718.4,733.6 L716.0,732.8 M717.1,735.5 L715.9,737.5 M717.1,735.5 L713.9,734.9 M715.9,737.5 L714.7,739.4 M715.9,737.5 L713.9,734.9 M715.9,737.5 L712.1,738.9 M714.7,739.4 L713.4,741.4 M714.7,739.4 L712.1,738.9 M713.4,741.4 L712.2,743.3 M713.4,741.4 L710.1,742.0 M712.2,743.3 L711.0,745.3 M712.2,743.3 L710.1,742.0 M711.0,745.3 L709.7,747.2 M711.0,745.3 L708.3,744.9 M709.7,747.2 L708.5,749.2 M709.7,747.2 L708.3,744.9 M708.5,749.2 L707.3,751.1 M708.5,749.2 L705.5,748.2 M707.3,751.1 L706.0,753.1 M707.3,751.1 L703.4,751.3 M706.0,753.1 L703.4,751.3 M708.3,757.8 L704.2,756.7 M708.3,757.8 L709.7,761.4 M714.6,760.2 L719.2,761.0 M714.6,760.2 L709.7,761.4 M714.6,760.2 L719.8,763.8 M719.2,761.0 L723.8,762.3 M719.2,761.0 L719.8,763.8 M723.8,762.3 L729.1,763.8 M723.8,762.3 L719.8,763.8 M729.1,763.8 L728.3,766.7 M734.9,766.1 L739.2,767.1 M734.9,766.1 L728.3,766.7 M734.9,766.1 L737.2,769.4 M739.2,767.1 L744.7,768.0 M739.2,767.1 L737.2,769.4 M744.7,768.0 L746.3,772.0 M750.6,770.0 L755.2,771.3 M750.6,770.0 L746.3,772.0 M755.2,771.3 L756.3,774.9 M760.2,772.8 L764.4,774.1 M760.2,772.8 L756.3,774.9 M764.4,774.1 L764.0,777.2 M769.6,775.7 L774.1,776.9 M769.6,775.7 L764.0,777.2 M774.1,776.9 L772.9,779.7 M780.0,779.2 L784.9,780.1 M780.0,779.2 L772.9,779.7 M780.0,779.2 L782.3,782.3 M784.9,780.1 L790.1,781.6 M784.9,780.1 L782.3,782.3 M790.1,781.6 L791.3,785.1 M795.5,783.2 L799.7,784.4 M795.5,783.2 L791.3,785.1 M799.7,784.4 L799.0,787.3 M805.4,786.3 L799.0,787.3 M805.4,786.3 L807.5,789.9 M811.3,787.9 L815.8,789.0 M811.3,787.9 L807.5,789.9 M815.8,789.0 L817.4,792.1 M821.1,790.6 L825.3,792.6 M821.1,790.6 L817.4,792.1 M825.3,792.6 L831.2,794.8 M825.3,792.6 L817.4,792.1 M825.3,792.6 L826.4,796.6 M831.2,794.8 L836.3,795.3 M831.2,794.8 L826.4,796.6 M831.2,794.8 L835.4,798.0 M836.3,795.3 L841.2,796.6 M836.3,795.3 L835.4,798.0 M841.2,796.6 L842.1,800.4 M846.6,798.2 L851.0,800.0 M846.6,798.2 L842.1,800.4 M851.0,800.0 L856.0,801.4 M851.0,800.0 L842.1,800.4 M851.0,800.0 L855.0,804.7 M856.0,801.4 L860.7,802.2 M856.0,801.4 L855.0,804.7 M860.7,802.2 L861.3,805.3 M866.7,804.5 L871.3,805.4 M866.7,804.5 L861.3,805.3 M866.7,804.5 L869.9,808.0 M871.3,805.4 L876.5,807.0 M871.3,805.4 L869.9,808.0 M876.5,807.0 L878.5,810.9 M882.0,808.5 L887.5,810.1 M882.0,808.5 L878.5,810.9 M887.5,810.1 L891.5,811.6 M887.5,810.1 L888.9,813.8 M891.5,811.6 L897.1,813.0 M891.5,811.6 L888.9,813.8 M897.1,813.0 L901.8,814.4 M897.1,813.0 L897.9,817.1 M901.8,814.4 L907.1,816.4 M901.8,814.4 L897.9,817.1 M907.1,816.4 L912.1,817.4 M907.1,816.4 L906.3,819.5 M912.1,817.4 L915.1,821.1 M918.2,818.7 L922.0,820.9 M918.2,818.7 L915.1,821.1 M922.0,820.9 L927.4,821.9 M922.0,820.9 L915.1,821.1 M922.0,820.9 L924.5,824.3 M927.4,821.9 L932.6,823.3 M927.4,821.9 L924.5,824.3 M932.6,823.3 L932.3,826.4 M938.5,825.6 L942.7,826.6 M938.5,825.6 L932.3,826.4 M938.5,825.6 L941.0,828.9 M942.7,826.6 L948.4,827.4 M942.7,826.6 L941.0,828.9 M948.4,827.4 L950.2,830.7 M954.1,829.4 L957.4,830.8 M954.1,829.4 L950.2,830.7 M957.4,830.8 L950.2,830.7 M957.4,830.8 L960.1,834.2 M963.9,832.4 L968.2,833.7 M963.9,832.4 L960.1,834.2 M968.2,833.7 L968.7,837.0 M973.5,835.3 L978.7,836.9 M973.5,835.3 L968.7,837.0 M978.7,836.9 L983.2,838.7 M978.7,836.9 L977.1,839.5 M983.2,838.7 L977.1,839.5 M983.2,838.7 L987.5,843.6 M989.8,840.1 L994.0,841.2 M989.8,840.1 L987.5,843.6 M994.0,841.2 L995.4,845.0 M999.1,842.8 L1003.6,844.0 M999.1,842.8 L995.4,845.0 M1003.6,844.0 L1005.1,847.7 M1008.8,845.6 L1014.0,847.2 M1008.8,845.6 L1005.1,847.7 M1014.0,847.2 L1019.3,848.7 M1014.0,847.2 L1011.8,850.3 M1019.3,848.7 L1019.8,852.5 M1024.6,850.3 L1027.9,851.8 M1024.6,850.3 L1019.8,852.5 M1027.9,851.8 L1019.8,852.5 M1027.9,851.8 L1031.6,855.7 M1034.8,853.1 L1040.0,854.6 M1034.8,853.1 L1031.6,855.7 M1040.0,854.6 L1044.7,856.1 M1040.0,854.6 L1040.1,858.0 M1044.7,856.1 L1049.9,857.9 M1044.7,856.1 L1040.1,858.0 M1049.9,857.9 L1054.7,859.4 M1049.9,857.9 L1049.1,860.2 M1054.7,859.4 L1059.5,860.7 M1054.7,859.4 L1049.1,860.2 M1054.7,859.4 L1057.7,862.8 M1059.5,860.7 L1064.0,861.7 M1059.5,860.7 L1057.7,862.8 M1064.0,861.7 L1063.2,865.1 M1071.0,863.7 L1075.7,864.8 M1071.0,863.7 L1063.2,865.1 M1071.0,863.7 L1075.6,867.3 M1075.7,864.8 L1075.6,867.3 M1080.7,866.3 L1084.9,867.8 M1080.7,866.3 L1075.6,867.3 M1084.9,867.8 L1088.2,867.5 M1084.9,867.8 L1084.1,870.5 M1088.2,867.5 L1090.5,864.7 M1088.2,867.5 L1084.1,870.5 M1088.2,867.5 L1094.0,867.9 M1090.5,864.7 L1093.5,861.3 M1090.5,864.7 L1094.0,867.9 M1093.5,861.3 L1095.1,857.8 M1093.5,861.3 L1098.3,862.1 M1095.1,857.8 L1096.8,854.9 M1095.1,857.8 L1100.2,857.8 M1096.8,854.9 L1099.5,851.9 M1096.8,854.9 L1100.2,857.8 M1099.5,851.9 L1101.5,848.8 M1099.5,851.9 L1104.0,853.8 M1101.5,848.8 L1102.5,845.7 M1101.5,848.8 L1104.0,853.8 M1101.5,848.8 L1106.9,846.0 M1102.5,845.7 L1106.9,846.0 M1105.1,842.2 L1106.9,846.0 M1105.1,842.2 L1110.5,841.1 M1106.8,838.4 L1108.5,835.5 M1106.8,838.4 L1110.5,841.1 M1108.5,835.5 L1113.4,834.8 M1110.7,832.6 L1112.6,830.6 M1110.7,832.6 L1113.4,834.8 M1112.6,830.6 L1113.4,834.8 M1112.6,830.6 L1117.7,828.9 M1114.2,826.5 L1115.9,824.0 M1114.2,826.5 L1117.7,828.9 M1115.9,824.0 L1120.6,824.5 M1119.4,820.5 L1120.6,817.5 M1119.4,820.5 L1120.6,824.5 M1119.4,820.5 L1124.4,819.3 M1120.6,817.5 L1122.2,814.2 M1120.6,817.5 L1124.4,819.3 M1122.2,814.2 L1127.7,813.8 M1124.2,811.1 L1126.1,808.2 M1124.2,811.1 L1127.7,813.8 M1126.1,808.2 L1131.7,807.3 M1128.1,804.9 L1130.3,801.7 M1128.1,804.9 L1131.7,807.3 M1130.3,801.7 L1132.1,798.7 M1130.3,801.7 L1135.1,802.2 M1132.1,798.7 L1134.7,795.6 M1132.1,798.7 L1135.1,802.2 M1134.7,795.6 L1136.7,793.1 M1134.7,795.6 L1138.3,796.9 M1136.7,793.1 L1138.3,796.9 M1136.7,793.1 L1143.8,790.8 M1138.5,789.1 L1140.4,786.1 M1138.5,789.1 L1143.8,790.8 M1140.4,786.1 L1142.4,783.7 M1140.4,786.1 L1145.8,786.1 M1142.4,783.7 L1144.0,780.2 M1142.4,783.7 L1145.8,786.1 M1144.0,780.2 L1146.8,776.9 M1144.0,780.2 L1149.1,780.9 M1146.8,776.9 L1148.8,773.8 M1146.8,776.9 L1149.1,780.9 M1146.8,776.9 L1152.7,775.2 M1148.8,773.8 L1150.4,770.4 M1148.8,773.8 L1152.7,775.2 M1150.4,770.4 L1152.2,767.9 M1150.4,770.4 L1155.9,769.8 M1152.2,767.9 L1153.5,764.3 M1152.2,767.9 L1155.9,769.8 M1153.5,764.3 L1159.5,763.4 M1156.1,760.7 L1157.7,758.2 M1156.1,760.7 L1159.5,763.4 M1157.7,758.2 L1162.7,758.7 M1160.0,755.0 L1162.3,752.3 M1160.0,755.0 L1162.7,758.7 M1162.3,752.3 L1164.1,749.4 M1162.3,752.3 L1166.1,753.3 M1164.1,749.4 L1165.6,745.8 M1164.1,749.4 L1166.1,753.3 M1164.1,749.4 L1169.3,747.7 M1165.6,745.8 L1168.5,742.5 M1165.6,745.8 L1169.3,747.7 M1168.5,742.5 L1169.6,739.5 M1168.5,742.5 L1173.7,743.0 M1169.6,739.5 L1175.1,737.5 M1171.4,735.8 L1174.6,733.3 M1171.4,735.8 L1175.1,737.5 M1174.6,733.3 L1175.3,730.5 M1174.6,733.3 L1175.1,737.5 M1174.6,733.3 L1179.4,730.5 M1175.3,730.5 L1179.4,730.5 M1177.2,727.2 L1179.3,724.1 M1177.2,727.2 L1179.4,730.5 M1179.3,724.1 L1181.2,721.0 M1179.3,724.1 L1184.3,725.4 M1181.2,721.0 L1186.5,720.9 M1183.5,717.8 L1185.3,714.9 M1183.5,717.8 L1186.5,720.9 M1185.3,714.9 L1190.7,714.6 M1187.3,711.5 L1189.7,708.5 M1187.3,711.5 L1190.7,714.6 M1189.7,708.5 L1192.3,705.3 M1189.7,708.5 L1195.2,710.0 M1192.3,705.3 L1194.0,702.1 M1192.3,705.3 L1195.2,710.0 M1192.3,705.3 L1197.6,703.2 M1194.0,702.1 L1195.5,698.6 M1194.0,702.1 L1197.6,703.2 M1195.5,698.6 L1197.5,696.4 M1195.5,698.6 L1200.1,698.2 M1197.5,696.4 L1199.4,694.0 M1197.5,696.4 L1200.1,698.2 M1199.4,694.0 L1200.1,698.2 M1199.4,694.0 L1206.2,691.9 M1201.1,689.9 L1202.9,686.9 M1201.1,689.9 L1206.2,691.9 M1202.9,686.9 L1205.3,684.1 M1202.9,686.9 L1207.3,687.9 M1205.3,684.1 L1207.3,687.9 M1205.3,684.1 L1210.3,681.4 M1206.9,680.0 L1208.5,677.8 M1206.9,680.0 L1210.3,681.4 M1208.5,677.8 L1211.5,674.7 M1208.5,677.8 L1210.3,681.4 M1211.5,674.7 L1213.1,671.1 M1211.5,674.7 L1215.9,677.0 M1213.1,671.1 L1214.9,668.1 M1213.1,671.1 L1218.7,670.8 M1214.9,668.1 L1217.7,665.1 M1214.9,668.1 L1218.7,670.8 M1217.7,665.1 L1218.8,661.9 M1217.7,665.1 L1222.2,666.8 M1218.8,661.9 L1224.5,660.7 M1220.7,658.2 L1223.1,655.2 M1220.7,658.2 L1224.5,660.7 M1223.1,655.2 L1228.7,656.1 M1226.4,651.4 L1227.6,648.8 M1226.4,651.4 L1228.7,656.1 M1226.4,651.4 L1231.3,648.6 M1227.6,648.8 L1228.5,646.3 M1227.6,648.8 L1231.3,648.6 M1228.5,646.3 L1230.4,643.3 M1228.5,646.3 L1231.3,648.6 M1230.4,643.3 L1235.0,644.0 M1233.9,639.7 L1235.0,636.7 M1233.9,639.7 L1235.0,644.0 M1233.9,639.7 L1241.2,638.3 M1235.0,636.7 L1236.8,633.5 M1235.0,636.7 L1241.2,638.3 M1236.8,633.5 L1243.0,633.0 M1239.1,630.2 L1240.9,627.3 M1239.1,630.2 L1243.0,633.0 M1240.9,627.3 L1246.6,626.7 M1242.7,624.3 L1244.3,621.7 M1242.7,624.3 L1246.6,626.7 M1244.3,621.7 L1249.6,621.9 M1246.4,618.4 L1248.5,615.1 M1246.4,618.4 L1249.6,621.9 M1248.5,615.1 L1251.1,612.4 M1248.5,615.1 L1252.8,616.6 M1251.1,612.4 L1252.8,616.6 M1251.1,612.4 L1257.3,610.7 M1252.0,608.4 L1257.3,610.7 M1255.6,605.9 L1257.3,610.7 M1255.6,605.9 L1262.3,603.5 M1256.7,602.2 L1258.6,599.2 M1256.7,602.2 L1262.3,603.5 M1258.6,599.2 L1261.5,596.4 M1258.6,599.2 L1263.2,599.5 M1261.5,596.4 L1262.1,593.3 M1261.5,596.4 L1263.2,599.5 M1261.5,596.4 L1266.1,594.2 M1262.1,593.3 L1264.0,590.1 M1262.1,593.3 L1266.1,594.2 M1264.0,590.1 L1269.6,588.8 M1266.0,586.8 L1267.7,584.3 M1266.0,586.8 L1269.6,588.8 M1267.7,584.3 L1272.8,584.2 M1269.8,581.0 L1272.1,577.7 M1269.8,581.0 L1272.8,584.2 M1272.1,577.7 L1274.0,574.5 M1272.1,577.7 L1277.6,578.7 M1274.0,574.5 L1279.4,573.1 M1276.2,571.2 L1278.7,568.6 M1276.2,571.2 L1279.4,573.1 M1278.7,568.6 L1280.4,565.0 M1278.7,568.6 L1279.4,573.1 M1278.7,568.6 L1284.1,567.0 M1280.4,565.0 L1282.9,561.6 M1280.4,565.0 L1284.1,567.0 M1282.9,561.6 L1284.1,559.1 M1282.9,561.6 L1287.0,561.2 M1284.1,559.1 L1286.8,556.7 M1284.1,559.1 L1287.0,561.2 M1286.8,556.7 L1287.7,553.2 M1286.8,556.7 L1287.0,561.2 M1286.8,556.7 L1291.4,555.5 M1287.7,553.2 L1289.7,550.0 M1287.7,553.2 L1291.4,555.5 M1289.7,550.0 L1294.9,550.2 M1292.0,546.6 L1294.1,543.4 M1292.0,546.6 L1294.9,550.2 M1294.1,543.4 L1296.9,540.8 M1294.1,543.4 L1298.2,545.0 M1296.9,540.8 L1297.6,537.4 M1296.9,540.8 L1298.2,545.0 M1296.9,540.8 L1301.3,539.4 M1297.6,537.4 L1299.3,534.3 M1297.6,537.4 L1301.3,539.4 M1299.3,534.3 L1303.8,534.8 M1302.6,530.5 L1304.0,527.6 M1302.6,530.5 L1303.8,534.8 M1302.6,530.5 L1308.4,528.9 M1304.0,527.6 L1306.3,525.0 M1304.0,527.6 L1308.4,528.9 M1306.3,525.0 L1308.4,528.9 M1306.3,525.0 L1311.4,522.9 M1307.8,521.0 L1309.6,518.4 M1307.8,521.0 L1311.4,522.9 M1309.6,518.4 L1314.8,518.7 M1311.6,515.4 L1313.7,513.4 M1311.6,515.4 L1314.8,518.7 M1313.7,513.4 L1314.8,518.7 M1313.7,513.4 L1319.2,511.8 M1315.5,509.2 L1317.6,506.1 M1315.5,509.2 L1319.2,511.8 M1317.6,506.1 L1319.4,502.7 M1317.6,506.1 L1323.1,507.2 M1319.4,502.7 L1324.8,501.2 M1321.6,499.4 L1323.9,496.8 M1321.6,499.4 L1324.8,501.2 M1323.9,496.8 L1325.8,493.9 M1323.9,496.8 L1324.8,501.2 M1323.9,496.8 L1329.5,494.9 M1325.8,493.9 L1327.2,490.8 M1325.8,493.9 L1329.5,494.9 M1327.2,490.8 L1332.8,489.7 M1329.1,487.4 L1331.3,484.2 M1329.1,487.4 L1332.8,489.7 M1331.3,484.2 L1333.8,481.5 M1331.3,484.2 L1336.1,484.4 M1333.8,481.5 L1336.1,484.4 M1333.8,481.5 L1339.1,478.5 M1334.7,477.8 L1334.3,476.0 M1334.7,477.8 L1339.1,478.5 M1334.3,476.0 L1328.1,474.1 M1334.3,476.0 L1339.1,478.5 M1334.3,476.0 L1335.9,472.3 M1328.1,474.1 L1323.4,472.6 M1328.1,474.1 L1326.2,470.3 M1323.4,472.6 L1318.4,470.8 M1323.4,472.6 L1326.2,470.3 M1318.4,470.8 L1313.3,469.9 M1318.4,470.8 L1319.4,467.9 M1313.3,469.9 L1310.4,466.5 M1307.9,468.3 L1303.6,466.6 M1307.9,468.3 L1310.4,466.5 M1303.6,466.6 L1297.8,465.1 M1303.6,466.6 L1310.4,466.5 M1303.6,466.6 L1300.4,462.9 M1297.8,465.1 L1292.2,463.1 M1297.8,465.1 L1300.4,462.9 M1292.2,463.1 L1287.9,462.2 M1292.2,463.1 L1291.2,460.0 M1287.9,462.2 L1282.4,460.8 M1287.9,462.2 L1291.2,460.0 M1282.4,460.8 L1280.9,457.0 M1277.1,459.2 L1272.7,457.7 M1277.1,459.2 L1280.9,457.0 M1272.7,457.7 L1271.7,453.4 M1267.4,456.1 L1262.3,454.6 M1267.4,456.1 L1271.7,453.4 M1262.3,454.6 L1258.0,452.7 M1262.3,454.6 L1263.7,451.7 M1258.0,452.7 L1252.6,452.0 M1258.0,452.7 L1263.7,451.7 M1258.0,452.7 L1255.2,449.5 M1252.6,452.0 L1246.8,450.2 M1252.6,452.0 L1255.2,449.5 M1246.8,450.2 L1242.4,448.1 M1246.8,450.2 L1248.4,447.7 M1242.4,448.1 L1238.1,447.6 M1242.4,448.1 L1248.4,447.7 M1242.4,448.1 L1239.6,444.4 M1238.1,447.6 L1239.6,444.4 M1232.1,445.7 L1239.6,444.4 M1232.1,445.7 L1227.4,440.7 M1225.8,444.2 L1221.4,443.0 M1225.8,444.2 L1227.4,440.7 M1221.4,443.0 L1219.4,439.5 M1216.2,441.6 L1212.0,440.4 M1216.2,441.6 L1219.4,439.5 M1212.0,440.4 L1211.9,437.5 M1206.7,438.8 L1201.5,437.1 M1206.7,438.8 L1211.9,437.5 M1201.5,437.1 L1196.5,435.1 M1201.5,437.1 L1203.8,434.8 M1196.5,435.1 L1191.6,433.6 M1196.5,435.1 L1203.8,434.8 M1196.5,435.1 L1193.9,430.6 M1191.6,433.6 L1186.7,432.7 M1191.6,433.6 L1193.9,430.6 M1186.7,432.7 L1185.4,428.9 M1181.1,431.1 L1175.7,429.4 M1181.1,431.1 L1185.4,428.9 M1175.7,429.4 L1170.9,428.0 M1175.7,429.4 L1175.4,426.0 M1170.9,428.0 L1166.0,426.1 M1170.9,428.0 L1175.4,426.0 M1166.0,426.1 L1161.9,424.7 M1166.0,426.1 L1166.9,423.4 M1161.9,424.7 L1166.9,423.4 M1161.9,424.7 L1157.7,420.9 M1155.3,423.5 L1150.0,422.0 M1155.3,423.5 L1157.7,420.9 M1150.0,422.0 L1144.7,421.0 M1150.0,422.0 L1149.4,418.6 M1144.7,421.0 L1141.4,418.6 M1141.4,418.6 L1135.7,417.6 M1141.4,418.6 L1149.4,418.6 M1141.4,418.6 L1137.7,414.5 M1135.7,417.6 L1130.2,416.4 M1135.7,417.6 L1137.7,414.5 M1130.2,416.4 L1129.7,413.2 M1124.9,414.9 L1120.7,413.3 M1124.9,414.9 L1129.7,413.2 M1120.7,413.3 L1115.0,412.1 M1120.7,413.3 L1123.8,410.9 M1115.0,412.1 L1114.4,408.2 M1109.1,410.0 L1104.7,408.3 M1109.1,410.0 L1114.4,408.2 M1104.7,408.3 L1100.0,406.7 M1104.7,408.3 L1106.3,405.6 M1100.0,406.7 L1095.0,405.3 M1100.0,406.7 L1106.3,405.6 M1100.0,406.7 L1095.7,401.8 M1095.0,405.3 L1089.5,404.2 M1095.0,405.3 L1095.7,401.8 M1089.5,404.2 L1084.9,402.8 M1089.5,404.2 L1087.7,401.0 M1084.9,402.8 L1080.5,400.9 M1084.9,402.8 L1087.7,401.0 M1080.5,400.9 L1074.8,400.0 M1080.5,400.9 L1087.7,401.0 M1080.5,400.9 L1077.6,397.9 M1074.8,400.0 L1069.4,398.5 M1074.8,400.0 L1077.6,397.9 M1069.4,398.5 L1068.9,395.3 M1064.0,397.1 L1059.1,395.4 M1064.0,397.1 L1068.9,395.3 M1059.1,395.4 L1054.7,393.7 M1059.1,395.4 L1062.0,392.4 M1054.7,393.7 L1062.0,392.4 M1054.7,393.7 L1050.7,390.3 M1047.8,392.4 L1043.8,391.1 M1047.8,392.4 L1050.7,390.3 M1043.8,391.1 L1043.7,388.1 M1037.9,388.8 L1034.2,388.1 M1037.9,388.8 L1043.7,388.1 M1037.9,388.8 L1034.5,384.6 M1034.2,388.1 L1034.5,384.6 M1028.2,385.8 L1023.3,384.9 M1028.2,385.8 L1034.5,384.6 M1028.2,385.8 L1024.4,382.2 M1023.3,384.9 L1018.0,383.6 M1023.3,384.9 L1024.4,382.2 M1018.0,383.6 L1015.6,379.7 M1012.7,382.1 L1008.6,380.8 M1012.7,382.1 L1015.6,379.7 M1008.6,380.8 L1008.0,377.4 M1003.2,379.3 L997.8,377.6 M1003.2,379.3 L1008.0,377.4 M997.8,377.6 L994.0,376.0 M997.8,377.6 L998.0,374.2 M994.0,376.0 L988.3,374.7 M994.0,376.0 L998.0,374.2 M988.3,374.7 L983.7,373.0 M988.3,374.7 L989.3,371.6 M983.7,373.0 L989.3,371.6 M983.7,373.0 L979.9,369.1 M977.2,371.6 L972.1,370.1 M977.2,371.6 L979.9,369.1 M972.1,370.1 L968.2,368.7 M972.1,370.1 L971.1,366.6 M968.2,368.7 L962.7,367.3 M968.2,368.7 L971.1,366.6 M962.7,367.3 L958.1,365.5 M962.7,367.3 L962.7,364.2 M958.1,365.5 L962.7,364.2 M958.1,365.5 L952.8,361.9 M952.0,364.6 L949.3,364.7 M952.0,364.6 L952.8,361.9 M949.3,364.7 L947.3,367.9 M949.3,364.7 L952.8,361.9 M949.3,364.7 L943.3,363.5 M947.3,367.9 L941.8,369.5 M945.1,371.1 L943.0,373.8 M945.1,371.1 L941.8,369.5 M943.0,373.8 L941.8,369.5 M943.0,373.8 L937.0,375.6 M940.4,378.1 L939.0,380.5 M940.4,378.1 L937.0,375.6 M939.0,380.5 L934.2,379.7 M935.9,384.2 L934.6,387.0 M935.9,384.2 L934.2,379.7 M935.9,384.2 L929.5,385.6 M934.6,387.0 L932.0,388.9 M934.6,387.0 L929.5,385.6 M932.0,388.9 L929.5,385.6 M932.0,388.9 L926.9,391.7 M931.6,393.3 L929.1,396.3 M931.6,393.3 L926.9,391.7 M929.1,396.3 L923.8,396.3 M925.9,400.0 L925.3,402.4 M925.9,400.0 L923.8,396.3 M925.9,400.0 L920.7,402.5 M925.3,402.4 L920.7,402.5 M923.3,405.4 L921.6,408.1 M923.3,405.4 L920.7,402.5 M921.6,408.1 L917.0,407.3 M918.4,411.7 L917.2,414.7 M918.4,411.7 L917.0,407.3 M918.4,411.7 L913.5,412.8 M917.2,414.7 L915.4,418.0 M917.2,414.7 L913.5,412.8 M915.4,418.0 L910.8,418.3 M913.5,421.0 L911.1,422.8 M913.5,421.0 L910.8,418.3 M911.1,422.8 L910.8,418.3 M911.1,422.8 L904.7,423.3 M908.2,427.5 L907.4,430.5 M908.2,427.5 L904.7,423.3 M908.2,427.5 L903.1,429.4 M907.4,430.5 L905.4,433.7 M907.4,430.5 L903.1,429.4 M905.4,433.7 L899.7,434.6 M903.3,437.0 L901.8,439.6 M903.3,437.0 L899.7,434.6 M901.8,439.6 L896.5,439.9 M898.7,443.4 L898.1,445.6 M898.7,443.4 L896.5,439.9 M898.7,443.4 L893.5,446.2 M898.1,445.6 L893.5,446.2 M896.0,449.3 L892.8,452.4 M896.0,449.3 L893.5,446.2 M892.8,452.4 L890.7,455.3 M892.8,452.4 L889.3,451.3 M890.7,455.3 L888.9,458.1 M890.7,455.3 L889.3,451.3 M890.7,455.3 L884.8,457.2 M888.9,458.1 L887.4,460.7 M888.9,458.1 L884.8,457.2 M887.4,460.7 L884.8,457.2 M887.4,460.7 L882.6,463.4 M885.8,464.7 L883.4,467.3 M885.8,464.7 L882.6,463.4 M883.4,467.3 L881.7,470.7 M883.4,467.3 L882.6,463.4 M883.4,467.3 L876.9,468.7 M881.7,470.7 L880.1,473.8 M881.7,470.7 L876.9,468.7 M880.1,473.8 L875.8,472.8 M877.0,476.7 L875.8,472.8 M877.0,476.7 L871.6,478.3 M876.0,480.6 L872.6,483.0 M876.0,480.6 L871.6,478.3 M872.6,483.0 L871.6,486.4 M872.6,483.0 L871.6,478.3 M872.6,483.0 L866.0,485.0 M871.6,486.4 L869.9,489.7 M871.6,486.4 L866.0,485.0 M869.9,489.7 L864.3,490.1 M867.9,493.1 L866.2,495.7 M867.9,493.1 L864.3,490.1 M866.2,495.7 L861.2,495.4 M863.0,499.2 L861.8,502.2 M863.0,499.2 L861.2,495.4 M863.0,499.2 L857.7,500.8 M861.8,502.2 L859.4,505.4 M861.8,502.2 L857.7,500.8 M859.4,505.4 L858.3,507.9 M859.4,505.4 L854.9,505.8 M858.3,507.9 L855.7,510.5 M858.3,507.9 L854.9,505.8 M855.7,510.5 L854.9,505.8 M855.7,510.5 L848.7,512.4 M853.7,514.6 L852.4,517.2 M853.7,514.6 L848.7,512.4 M852.4,517.2 L847.8,516.9 M849.8,520.8 L847.8,516.9 M849.8,520.8 L843.6,522.5 M847.8,524.4 L845.7,526.5 M847.8,524.4 L843.6,522.5 M845.7,526.5 L843.6,522.5 M845.7,526.5 L840.3,528.7 M844.3,530.5 L842.6,533.3 M844.3,530.5 L840.3,528.7 M842.6,533.3 L836.9,534.3 M840.5,536.3 L838.9,538.9 M840.5,536.3 L836.9,534.3 M838.9,538.9 L833.8,539.0 M837.0,542.7 L833.9,545.7 M837.0,542.7 L833.8,539.0 M833.9,545.7 L832.5,548.7 M833.9,545.7 L828.7,544.4 M832.5,548.7 L826.4,550.2 M830.5,552.1 L828.5,555.2 M830.5,552.1 L826.4,550.2 M828.5,555.2 L826.3,557.5 M828.5,555.2 L823.4,554.9 M826.3,557.5 L824.4,561.1 M826.3,557.5 L823.4,554.9 M824.4,561.1 L821.9,564.4 M824.4,561.1 L819.9,560.5 M821.9,564.4 L820.8,567.4 M821.9,564.4 L819.9,560.5 M821.9,564.4 L816.7,567.1 M820.8,567.4 L816.7,567.1 M818.7,570.6 L816.4,573.4 M818.7,570.6 L816.7,567.1 M816.4,573.4 L815.3,576.9 M816.4,573.4 L811.9,572.1 M815.3,576.9 L809.2,577.1 M812.5,580.2 L810.5,582.3 M812.5,580.2 L809.2,577.1 M810.5,582.3 L809.2,577.1 M810.5,582.3 L805.3,584.3 M808.5,586.6 L806.4,589.6 M808.5,586.6 L805.3,584.3 M806.4,589.6 L803.7,592.1 M806.4,589.6 L802.3,588.6 M803.7,592.1 L802.9,595.4 M803.7,592.1 L802.3,588.6 M803.7,592.1 L799.0,593.8 M802.9,595.4 L800.9,598.7 M802.9,595.4 L799.0,593.8 M800.9,598.7 L795.0,599.3 M798.8,602.1 L797.1,605.0 M798.8,602.1 L795.0,599.3 M797.1,605.0 L791.5,605.8 M795.1,608.1 L793.5,610.7 M795.1,608.1 L791.5,605.8 M793.5,610.7 L788.6,610.7 M791.4,614.1 L789.0,617.3 M791.4,614.1 L788.6,610.7 M789.0,617.3 L785.8,620.0 M789.0,617.3 L785.0,615.9 M785.8,620.0 L785.0,623.1 M785.8,620.0 L785.0,615.9 M785.8,620.0 L779.3,621.9 M785.0,623.1 L783.2,626.4 M785.0,623.1 L779.3,621.9 M783.2,626.4 L777.5,627.0 M781.3,629.7 L779.2,632.9 M781.3,629.7 L777.5,627.0 M779.2,632.9 L776.7,635.5 M779.2,632.9 L774.6,632.2 M776.7,635.5 L774.6,632.2 M776.7,635.5 L771.1,637.8 M775.0,639.5 L773.3,642.2 M775.0,639.5 L771.1,637.8 M773.3,642.2 L767.5,643.2 M771.4,645.5 L769.2,648.6 M771.4,645.5 L767.5,643.2 M769.2,648.6 L766.5,651.9 M769.2,648.6 L764.1,648.5 M766.5,651.9 L764.8,654.9 M766.5,651.9 L764.1,648.5 M766.5,651.9 L761.3,654.8 M764.8,654.9 L763.7,657.4 M764.8,654.9 L761.3,654.8 M763.7,657.4 L761.9,660.6 M763.7,657.4 L761.3,654.8 M761.9,660.6 L757.6,659.7 M758.6,664.0 L757.0,666.7 M758.6,664.0 L757.6,659.7 M758.6,664.0 L753.6,665.2 M757.0,666.7 L755.5,670.2 M757.0,666.7 L753.6,665.2 M755.5,670.2 L753.8,673.2 M755.5,670.2 L750.2,670.6 M753.8,673.2 L751.6,676.3 M753.8,673.2 L750.2,670.6 M751.6,676.3 L745.9,675.0 M748.3,680.1 L747.6,682.6 M748.3,680.1 L745.9,675.0 M748.3,680.1 L743.4,682.7 M747.6,682.6 L743.4,682.7 M745.8,685.9 L743.7,688.9 M745.8,685.9 L743.4,682.7 M743.7,688.9 L741.3,691.3 M743.7,688.9 L739.6,687.4 M741.3,691.3 L739.6,687.4 M741.3,691.3 L736.2,692.8 M739.6,695.4 L737.8,698.2 M739.6,695.4 L736.2,692.8 M737.8,698.2 L732.7,698.2 M735.9,701.2 L734.1,703.8 M735.9,701.2 L732.7,698.2 M734.1,703.8 L728.8,702.6 M731.7,707.5 L728.8,702.6 M731.7,707.5 L726.1,709.6 M729.6,711.3 L728.0,714.0 M729.6,711.3 L726.1,709.6 M728.0,714.0 L723.5,714.9 M726.2,717.2 L723.9,719.0 M726.2,717.2 L723.5,714.9 M723.9,719.0 L723.5,714.9 M723.9,719.0 L717.1,719.9 M720.7,723.5 L720.0,726.4 M720.7,723.5 L717.1,719.9 M720.7,723.5 L715.5,725.9 M720.0,726.4 L718.2,729.5 M720.0,726.4 L715.5,725.9 M718.2,729.5 L713.0,731.1 M716.0,732.8 L713.9,734.9 M716.0,732.8 L713.0,731.1 M713.9,734.9 L713.0,731.1 M713.9,734.9 L708.3,737.1 M712.1,738.9 L710.1,742.0 M712.1,738.9 L708.3,737.1 M710.1,742.0 L708.3,744.9 M710.1,742.0 L704.8,742.2 M708.3,744.9 L705.5,748.2 M708.3,744.9 L704.8,742.2 M705.5,748.2 L703.4,751.3 M705.5,748.2 L701.3,747.7 M703.4,751.3 L702.3,754.9 M703.4,751.3 L701.3,747.7 M703.4,751.3 L697.4,753.4 M702.3,754.9 L704.2,756.7 M702.3,754.9 L697.4,753.4 M702.3,754.9 L701.7,759.0 M704.2,756.7 L701.7,759.0 M709.7,761.4 L701.7,759.0 M709.7,761.4 L714.6,768.1 M719.8,763.8 L728.3,766.7 M719.8,763.8 L714.6,768.1 M728.3,766.7 L728.3,772.3 M737.2,769.4 L746.3,772.0 M737.2,769.4 L728.3,772.3 M746.3,772.0 L756.3,774.9 M746.3,772.0 L743.1,777.7 M756.3,774.9 L764.0,777.2 M756.3,774.9 L756.7,781.8 M764.0,777.2 L772.9,779.7 M764.0,777.2 L756.7,781.8 M772.9,779.7 L772.9,785.0 M782.3,782.3 L791.3,785.1 M782.3,782.3 L772.9,785.0 M791.3,785.1 L799.0,787.3 M791.3,785.1 L789.7,790.3 M799.0,787.3 L807.5,789.9 M799.0,787.3 L789.7,790.3 M807.5,789.9 L817.4,792.1 M807.5,789.9 L805.0,795.6 M817.4,792.1 L817.5,798.0 M826.4,796.6 L817.5,798.0 M826.4,796.6 L830.5,801.0 M835.4,798.0 L842.1,800.4 M835.4,798.0 L830.5,801.0 M842.1,800.4 L830.5,801.0 M842.1,800.4 L845.2,807.9 M855.0,804.7 L861.3,805.3 M855.0,804.7 L845.2,807.9 M855.0,804.7 L862.8,810.3 M861.3,805.3 L862.8,810.3 M869.9,808.0 L878.5,810.9 M869.9,808.0 L862.8,810.3 M878.5,810.9 L888.9,813.8 M878.5,810.9 L875.4,816.4 M888.9,813.8 L897.9,817.1 M888.9,813.8 L889.0,819.1 M897.9,817.1 L906.3,819.5 M897.9,817.1 L889.0,819.1 M897.9,817.1 L904.2,823.6 M906.3,819.5 L915.1,821.1 M906.3,819.5 L904.2,823.6 M915.1,821.1 L915.8,828.1 M924.5,824.3 L932.3,826.4 M924.5,824.3 L915.8,828.1 M932.3,826.4 L932.4,831.8 M941.0,828.9 L950.2,830.7 M941.0,828.9 L932.4,831.8 M950.2,830.7 L949.7,836.6 M960.1,834.2 L968.7,837.0 M960.1,834.2 L949.7,836.6 M968.7,837.0 L977.1,839.5 M968.7,837.0 L964.6,842.2 M977.1,839.5 L978.1,845.3 M987.5,843.6 L995.4,845.0 M987.5,843.6 L978.1,845.3 M987.5,843.6 L993.4,849.7 M995.4,845.0 L1005.1,847.7 M995.4,845.0 L993.4,849.7 M1005.1,847.7 L1011.8,850.3 M1005.1,847.7 L1007.4,853.0 M1011.8,850.3 L1019.8,852.5 M1011.8,850.3 L1007.4,853.0 M1019.8,852.5 L1007.4,853.0 M1019.8,852.5 L1024.6,860.3 M1031.6,855.7 L1040.1,858.0 M1031.6,855.7 L1024.6,860.3 M1040.1,858.0 L1049.1,860.2 M1040.1,858.0 L1036.7,863.2 M1049.1,860.2 L1052.3,865.5 M1057.7,862.8 L1063.2,865.1 M1057.7,862.8 L1052.3,865.5 M1063.2,865.1 L1052.3,865.5 M1063.2,865.1 L1068.0,870.9 M1075.6,867.3 L1084.1,870.5 M1075.6,867.3 L1068.0,870.9 M1084.1,870.5 L1080.0,874.9 M1084.1,870.5 L1091.6,873.8 M1094.0,867.9 L1098.3,862.1 M1094.0,867.9 L1091.6,873.8 M1094.0,867.9 L1101.2,869.6 M1098.3,862.1 L1100.2,857.8 M1098.3,862.1 L1105.3,860.6 M1100.2,857.8 L1104.0,853.8 M1100.2,857.8 L1105.3,860.6 M1104.0,853.8 L1105.3,860.6 M1104.0,853.8 L1113.4,850.9 M1106.9,846.0 L1110.5,841.1 M1106.9,846.0 L1113.4,850.9 M1110.5,841.1 L1113.4,834.8 M1110.5,841.1 L1120.0,843.3 M1113.4,834.8 L1123.7,833.6 M1117.7,828.9 L1120.6,824.5 M1117.7,828.9 L1123.7,833.6 M1120.6,824.5 L1128.8,825.5 M1124.4,819.3 L1127.7,813.8 M1124.4,819.3 L1128.8,825.5 M1127.7,813.8 L1131.7,807.3 M1127.7,813.8 L1136.5,816.6 M1131.7,807.3 L1135.1,802.2 M1131.7,807.3 L1141.4,806.3 M1135.1,802.2 L1138.3,796.9 M1135.1,802.2 L1141.4,806.3 M1138.3,796.9 L1146.3,797.0 M1143.8,790.8 L1145.8,786.1 M1143.8,790.8 L1146.3,797.0 M1143.8,790.8 L1152.7,788.0 M1145.8,786.1 L1149.1,780.9 M1145.8,786.1 L1152.7,788.0 M1149.1,780.9 L1159.5,781.0 M1152.7,775.2 L1155.9,769.8 M1152.7,775.2 L1159.5,781.0 M1155.9,769.8 L1159.5,763.4 M1155.9,769.8 L1165.0,772.5 M1159.5,763.4 L1162.7,758.7 M1159.5,763.4 L1169.1,762.7 M1162.7,758.7 L1166.1,753.3 M1162.7,758.7 L1169.1,762.7 M1166.1,753.3 L1174.9,752.6 M1169.3,747.7 L1173.7,743.0 M1169.3,747.7 L1174.9,752.6 M1173.7,743.0 L1175.1,737.5 M1173.7,743.0 L1183.1,745.0 M1175.1,737.5 L1185.3,735.7 M1179.4,730.5 L1184.3,725.4 M1179.4,730.5 L1185.3,735.7 M1184.3,725.4 L1186.5,720.9 M1184.3,725.4 L1192.6,725.4 M1186.5,720.9 L1190.7,714.6 M1186.5,720.9 L1192.6,725.4 M1190.7,714.6 L1195.2,710.0 M1190.7,714.6 L1198.6,715.9 M1195.2,710.0 L1198.6,715.9 M1195.2,710.0 L1204.7,706.5 M1197.6,703.2 L1200.1,698.2 M1197.6,703.2 L1204.7,706.5 M1200.1,698.2 L1209.4,698.8 M1206.2,691.9 L1207.3,687.9 M1206.2,691.9 L1209.4,698.8 M1206.2,691.9 L1214.3,688.5 M1207.3,687.9 L1214.3,688.5 M1210.3,681.4 L1215.9,677.0 M1210.3,681.4 L1214.3,688.5 M1215.9,677.0 L1218.7,670.8 M1215.9,677.0 L1223.7,681.1 M1218.7,670.8 L1222.2,666.8 M1218.7,670.8 L1227.9,671.1 M1222.2,666.8 L1224.5,660.7 M1222.2,666.8 L1227.9,671.1 M1224.5,660.7 L1228.7,656.1 M1224.5,660.7 L1232.1,661.8 M1228.7,656.1 L1232.1,661.8 M1228.7,656.1 L1238.0,652.6 M1231.3,648.6 L1235.0,644.0 M1231.3,648.6 L1238.0,652.6 M1235.0,644.0 L1243.2,645.5 M1241.2,638.3 L1243.0,633.0 M1241.2,638.3 L1243.2,645.5 M1241.2,638.3 L1252.5,636.1 M1243.0,633.0 L1246.6,626.7 M1243.0,633.0 L1252.5,636.1 M1246.6,626.7 L1249.6,621.9 M1246.6,626.7 L1257.7,626.3 M1249.6,621.9 L1252.8,616.6 M1249.6,621.9 L1257.7,626.3 M1252.8,616.6 L1260.4,618.1 M1257.3,610.7 L1260.4,618.1 M1257.3,610.7 L1268.5,609.6 M1262.3,603.5 L1263.2,599.5 M1262.3,603.5 L1268.5,609.6 M1262.3,603.5 L1270.5,598.4 M1263.2,599.5 L1270.5,598.4 M1266.1,594.2 L1269.6,588.8 M1266.1,594.2 L1270.5,598.4 M1269.6,588.8 L1272.8,584.2 M1269.6,588.8 L1278.4,588.9 M1272.8,584.2 L1277.6,578.7 M1272.8,584.2 L1278.4,588.9 M1277.6,578.7 L1279.4,573.1 M1277.6,578.7 L1286.0,580.0 M1279.4,573.1 L1289.2,572.3 M1284.1,567.0 L1287.0,561.2 M1284.1,567.0 L1289.2,572.3 M1287.0,561.2 L1296.2,561.5 M1291.4,555.5 L1294.9,550.2 M1291.4,555.5 L1296.2,561.5 M1294.9,550.2 L1298.2,545.0 M1294.9,550.2 L1303.0,552.7 M1298.2,545.0 L1306.1,545.2 M1301.3,539.4 L1303.8,534.8 M1301.3,539.4 L1306.1,545.2 M1303.8,534.8 L1312.2,535.1 M1308.4,528.9 L1312.2,535.1 M1308.4,528.9 L1316.4,526.2 M1311.4,522.9 L1314.8,518.7 M1311.4,522.9 L1316.4,526.2 M1314.8,518.7 L1316.4,526.2 M1314.8,518.7 L1324.5,516.3 M1319.2,511.8 L1323.1,507.2 M1319.2,511.8 L1324.5,516.3 M1323.1,507.2 L1324.8,501.2 M1323.1,507.2 L1331.1,509.2 M1324.8,501.2 L1335.5,499.0 M1329.5,494.9 L1332.8,489.7 M1329.5,494.9 L1335.5,499.0 M1332.8,489.7 L1336.1,484.4 M1332.8,489.7 L1341.1,491.8 M1336.1,484.4 L1344.9,482.5 M1339.1,478.5 L1344.9,482.5 M1339.1,478.5 L1344.1,474.4 M1335.9,472.3 L1326.2,470.3 M1335.9,472.3 L1344.1,474.4 M1335.9,472.3 L1337.1,467.8 M1326.2,470.3 L1319.4,467.9 M1326.2,470.3 L1322.5,464.0 M1319.4,467.9 L1310.4,466.5 M1319.4,467.9 L1322.5,464.0 M1310.4,466.5 L1309.2,460.2 M1300.4,462.9 L1291.2,460.0 M1300.4,462.9 L1309.2,460.2 M1291.2,460.0 L1280.9,457.0 M1291.2,460.0 L1294.6,454.5 M1280.9,457.0 L1271.7,453.4 M1280.9,457.0 L1282.8,450.7 M1271.7,453.4 L1263.7,451.7 M1271.7,453.4 L1282.8,450.7 M1271.7,453.4 L1261.3,445.5 M1263.7,451.7 L1261.3,445.5 M1255.2,449.5 L1248.4,447.7 M1255.2,449.5 L1261.3,445.5 M1248.4,447.7 L1249.9,443.1 M1239.6,444.4 L1249.9,443.1 M1239.6,444.4 L1237.1,437.4 M1227.4,440.7 L1219.4,439.5 M1227.4,440.7 L1237.1,437.4 M1227.4,440.7 L1219.6,435.4 M1219.4,439.5 L1211.9,437.5 M1219.4,439.5 L1219.6,435.4 M1211.9,437.5 L1203.8,434.8 M1211.9,437.5 L1219.6,435.4 M1203.8,434.8 L1207.0,430.4 M1193.9,430.6 L1185.4,428.9 M1193.9,430.6 L1207.0,430.4 M1193.9,430.6 L1190.6,423.3 M1185.4,428.9 L1175.4,426.0 M1185.4,428.9 L1190.6,423.3 M1175.4,426.0 L1166.9,423.4 M1175.4,426.0 L1178.2,420.3 M1166.9,423.4 L1163.4,416.9 M1157.7,420.9 L1149.4,418.6 M1157.7,420.9 L1163.4,416.9 M1149.4,418.6 L1148.0,413.0 M1137.7,414.5 L1129.7,413.2 M1137.7,414.5 L1148.0,413.0 M1137.7,414.5 L1130.5,408.6 M1129.7,413.2 L1123.8,410.9 M1129.7,413.2 L1130.5,408.6 M1123.8,410.9 L1114.4,408.2 M1123.8,410.9 L1130.5,408.6 M1114.4,408.2 L1106.3,405.6 M1114.4,408.2 L1118.2,402.8 M1106.3,405.6 L1107.2,399.1 M1095.7,401.8 L1087.7,401.0 M1095.7,401.8 L1107.2,399.1 M1095.7,401.8 L1086.6,396.0 M1087.7,401.0 L1086.6,396.0 M1077.6,397.9 L1068.9,395.3 M1077.6,397.9 L1086.6,396.0 M1068.9,395.3 L1062.0,392.4 M1068.9,395.3 L1072.6,391.1 M1062.0,392.4 L1072.6,391.1 M1062.0,392.4 L1057.0,386.7 M1050.7,390.3 L1043.7,388.1 M1050.7,390.3 L1057.0,386.7 M1043.7,388.1 L1043.2,382.3 M1034.5,384.6 L1043.2,382.3 M1034.5,384.6 L1029.6,378.3 M1024.4,382.2 L1015.6,379.7 M1024.4,382.2 L1029.6,378.3 M1015.6,379.7 L1008.0,377.4 M1015.6,379.7 L1015.1,372.9 M1008.0,377.4 L998.0,374.2 M1008.0,377.4 L1015.1,372.9 M998.0,374.2 L989.3,371.6 M998.0,374.2 L1001.7,368.6 M989.3,371.6 L988.4,364.6 M979.9,369.1 L971.1,366.6 M979.9,369.1 L988.4,364.6 M971.1,366.6 L962.7,364.2 M971.1,366.6 L974.2,361.0 M962.7,364.2 L959.0,358.4 M952.8,361.9 L959.0,358.4 M952.8,361.9 L946.0,358.4 M943.3,363.5 L941.8,369.5 M943.3,363.5 L946.0,358.4 M943.3,363.5 L936.2,362.5 M941.8,369.5 L931.2,371.3 M937.0,375.6 L934.2,379.7 M937.0,375.6 L931.2,371.3 M934.2,379.7 L924.2,378.5 M929.5,385.6 L924.2,378.5 M929.5,385.6 L919.4,389.6 M926.9,391.7 L923.8,396.3 M926.9,391.7 L919.4,389.6 M923.8,396.3 L913.7,398.3 M920.7,402.5 L917.0,407.3 M920.7,402.5 L913.7,398.3 M917.0,407.3 L908.6,406.6 M913.5,412.8 L910.8,418.3 M913.5,412.8 L908.6,406.6 M910.8,418.3 L901.7,416.9 M904.7,423.3 L901.7,416.9 M904.7,423.3 L896.7,425.3 M903.1,429.4 L899.7,434.6 M903.1,429.4 L896.7,425.3 M899.7,434.6 L896.5,439.9 M899.7,434.6 L891.1,431.9 M896.5,439.9 L886.6,441.7 M893.5,446.2 L889.3,451.3 M893.5,446.2 L886.6,441.7 M889.3,451.3 L881.7,450.6 M884.8,457.2 L881.7,450.6 M884.8,457.2 L874.2,460.9 M882.6,463.4 L874.2,460.9 M876.9,468.7 L875.8,472.8 M876.9,468.7 L874.2,460.9 M876.9,468.7 L869.1,472.4 M875.8,472.8 L869.1,472.4 M871.6,478.3 L869.1,472.4 M871.6,478.3 L863.5,478.6 M866.0,485.0 L864.3,490.1 M866.0,485.0 L863.5,478.6 M866.0,485.0 L857.3,487.5 M864.3,490.1 L861.2,495.4 M864.3,490.1 L857.3,487.5 M861.2,495.4 L851.9,496.2 M857.7,500.8 L854.9,505.8 M857.7,500.8 L851.9,496.2 M854.9,505.8 L844.9,503.4 M848.7,512.4 L847.8,516.9 M848.7,512.4 L844.9,503.4 M848.7,512.4 L840.8,516.6 M847.8,516.9 L840.8,516.6 M843.6,522.5 L840.8,516.6 M843.6,522.5 L834.4,524.1 M840.3,528.7 L836.9,534.3 M840.3,528.7 L834.4,524.1 M836.9,534.3 L833.8,539.0 M836.9,534.3 L827.8,534.2 M833.8,539.0 L828.7,544.4 M833.8,539.0 L827.8,534.2 M828.7,544.4 L826.4,550.2 M828.7,544.4 L819.0,541.4 M826.4,550.2 L823.4,554.9 M826.4,550.2 L816.8,550.6 M823.4,554.9 L819.9,560.5 M823.4,554.9 L816.8,550.6 M819.9,560.5 L810.6,561.2 M816.7,567.1 L811.9,572.1 M816.7,567.1 L810.6,561.2 M811.9,572.1 L809.2,577.1 M811.9,572.1 L804.9,570.7 M809.2,577.1 L804.9,570.7 M809.2,577.1 L799.5,580.4 M805.3,584.3 L802.3,588.6 M805.3,584.3 L799.5,580.4 M802.3,588.6 L793.4,588.8 M799.0,593.8 L795.0,599.3 M799.0,593.8 L793.4,588.8 M795.0,599.3 L791.5,605.8 M795.0,599.3 L784.2,596.1 M791.5,605.8 L788.6,610.7 M791.5,605.8 L782.0,605.9 M788.6,610.7 L785.0,615.9 M788.6,610.7 L782.0,605.9 M785.0,615.9 L777.4,614.7 M779.3,621.9 L777.5,627.0 M779.3,621.9 L777.4,614.7 M779.3,621.9 L768.1,624.5 M777.5,627.0 L774.6,632.2 M777.5,627.0 L768.1,624.5 M774.6,632.2 L765.2,632.7 M771.1,637.8 L767.5,643.2 M771.1,637.8 L765.2,632.7 M767.5,643.2 L764.1,648.5 M767.5,643.2 L757.7,641.5 M764.1,648.5 L753.8,651.4 M761.3,654.8 L757.6,659.7 M761.3,654.8 L753.8,651.4 M757.6,659.7 L748.9,659.7 M753.6,665.2 L750.2,670.6 M753.6,665.2 L748.9,659.7 M750.2,670.6 L745.9,675.0 M750.2,670.6 L743.4,668.3 M745.9,675.0 L743.4,668.3 M745.9,675.0 L737.3,677.9 M743.4,682.7 L739.6,687.4 M743.4,682.7 L737.3,677.9 M739.6,687.4 L731.3,686.8 M736.2,692.8 L732.7,698.2 M736.2,692.8 L731.3,686.8 M732.7,698.2 L728.8,702.6 M732.7,698.2 L725.8,696.0 M728.8,702.6 L725.8,696.0 M728.8,702.6 L720.5,705.6 M726.1,709.6 L723.5,714.9 M726.1,709.6 L720.5,705.6 M723.5,714.9 L714.5,714.4 M717.1,719.9 L714.5,714.4 M717.1,719.9 L708.5,722.7 M715.5,725.9 L713.0,731.1 M715.5,725.9 L708.5,722.7 M713.0,731.1 L702.5,732.7 M708.3,737.1 L704.8,742.2 M708.3,737.1 L702.5,732.7 M704.8,742.2 L701.3,747.7 M704.8,742.2 L696.3,739.5 M701.3,747.7 L692.4,749.3 M697.4,753.4 L692.4,749.3 M697.4,753.4 L693.3,757.6 M701.7,759.0 L693.3,757.6 M701.7,759.0 L700.4,764.2 M714.6,768.1 L728.3,772.3 M714.6,768.1 L700.4,764.2 M714.6,768.1 L717.6,778.5 M728.3,772.3 L743.1,777.7 M728.3,772.3 L717.6,778.5 M743.1,777.7 L756.7,781.8 M743.1,777.7 L740.6,784.9 M756.7,781.8 L772.9,785.0 M756.7,781.8 L740.6,784.9 M756.7,781.8 L764.6,791.6 M772.9,785.0 L789.7,790.3 M772.9,785.0 L764.6,791.6 M789.7,790.3 L805.0,795.6 M789.7,790.3 L783.2,799.2 M805.0,795.6 L817.5,798.0 M805.0,795.6 L807.4,804.4 M817.5,798.0 L830.5,801.0 M817.5,798.0 L807.4,804.4 M830.5,801.0 L828.7,810.1 M845.2,807.9 L828.7,810.1 M845.2,807.9 L853.0,817.4 M862.8,810.3 L875.4,816.4 M862.8,810.3 L853.0,817.4 M875.4,816.4 L889.0,819.1 M875.4,816.4 L871.5,824.6 M889.0,819.1 L895.0,828.2 M904.2,823.6 L915.8,828.1 M904.2,823.6 L895.0,828.2 M915.8,828.1 L932.4,831.8 M915.8,828.1 L895.0,828.2 M915.8,828.1 L920.5,837.2 M932.4,831.8 L949.7,836.6 M932.4,831.8 L920.5,837.2 M949.7,836.6 L964.6,842.2 M949.7,836.6 L938.1,844.3 M964.6,842.2 L978.1,845.3 M964.6,842.2 L959.9,851.1 M978.1,845.3 L983.5,855.8 M993.4,849.7 L1007.4,853.0 M993.4,849.7 L983.5,855.8 M1007.4,853.0 L1005.8,861.9 M1024.6,860.3 L1036.7,863.2 M1024.6,860.3 L1005.8,861.9 M1024.6,860.3 L1030.5,868.9 M1036.7,863.2 L1052.3,865.5 M1036.7,863.2 L1030.5,868.9 M1052.3,865.5 L1053.3,875.2 M1068.0,870.9 L1080.0,874.9 M1068.0,870.9 L1053.3,875.2 M1080.0,874.9 L1091.6,873.8 M1080.0,874.9 L1075.6,882.4 M1091.6,873.8 L1101.2,869.6 M1091.6,873.8 L1097.2,882.2 M1101.2,869.6 L1105.3,860.6 M1101.2,869.6 L1113.3,873.7 M1105.3,860.6 L1121.8,859.1 M1113.4,850.9 L1120.0,843.3 M1113.4,850.9 L1121.8,859.1 M1120.0,843.3 L1123.7,833.6 M1120.0,843.3 L1133.2,845.4 M1123.7,833.6 L1128.8,825.5 M1123.7,833.6 L1138.1,834.0 M1128.8,825.5 L1136.5,816.6 M1128.8,825.5 L1138.1,834.0 M1136.5,816.6 L1141.4,806.3 M1136.5,816.6 L1149.1,821.3 M1141.4,806.3 L1146.3,797.0 M1141.4,806.3 L1156.6,807.8 M1146.3,797.0 L1160.4,793.2 M1152.7,788.0 L1159.5,781.0 M1152.7,788.0 L1160.4,793.2 M1159.5,781.0 L1165.0,772.5 M1159.5,781.0 L1160.4,793.2 M1159.5,781.0 L1178.6,777.2 M1165.0,772.5 L1169.1,762.7 M1165.0,772.5 L1178.6,777.2 M1169.1,762.7 L1174.9,752.6 M1169.1,762.7 L1184.3,766.9 M1174.9,752.6 L1183.1,745.0 M1174.9,752.6 L1187.8,754.2 M1183.1,745.0 L1185.3,735.7 M1183.1,745.0 L1187.8,754.2 M1183.1,745.0 L1196.7,740.3 M1185.3,735.7 L1192.6,725.4 M1185.3,735.7 L1196.7,740.3 M1192.6,725.4 L1198.6,715.9 M1192.6,725.4 L1207.8,729.0 M1198.6,715.9 L1215.7,714.2 M1204.7,706.5 L1209.4,698.8 M1204.7,706.5 L1215.7,714.2 M1209.4,698.8 L1224.7,698.4 M1214.3,688.5 L1223.7,681.1 M1214.3,688.5 L1224.7,698.4 M1223.7,681.1 L1227.9,671.1 M1223.7,681.1 L1238.4,687.5 M1227.9,671.1 L1232.1,661.8 M1227.9,671.1 L1243.0,674.8 M1232.1,661.8 L1247.9,660.4 M1238.0,652.6 L1243.2,645.5 M1238.0,652.6 L1247.9,660.4 M1243.2,645.5 L1255.5,647.8 M1252.5,636.1 L1257.7,626.3 M1252.5,636.1 L1255.5,647.8 M1252.5,636.1 L1267.8,636.2 M1257.7,626.3 L1260.4,618.1 M1257.7,626.3 L1267.8,636.2 M1257.7,626.3 L1275.1,620.0 M1260.4,618.1 L1275.1,620.0 M1268.5,609.6 L1275.1,620.0 M1268.5,609.6 L1283.2,603.8 M1270.5,598.4 L1278.4,588.9 M1270.5,598.4 L1283.2,603.8 M1278.4,588.9 L1286.0,580.0 M1278.4,588.9 L1293.5,592.1 M1286.0,580.0 L1289.2,572.3 M1286.0,580.0 L1300.3,578.3 M1289.2,572.3 L1296.2,561.5 M1289.2,572.3 L1300.3,578.3 M1296.2,561.5 L1303.0,552.7 M1296.2,561.5 L1311.8,564.7 M1303.0,552.7 L1306.1,545.2 M1303.0,552.7 L1316.4,553.3 M1306.1,545.2 L1312.2,535.1 M1306.1,545.2 L1316.4,553.3 M1312.2,535.1 L1316.4,526.2 M1312.2,535.1 L1327.0,539.8 M1316.4,526.2 L1333.1,524.5 M1324.5,516.3 L1331.1,509.2 M1324.5,516.3 L1333.1,524.5 M1331.1,509.2 L1335.5,499.0 M1331.1,509.2 L1342.3,514.3 M1335.5,499.0 L1341.1,491.8 M1335.5,499.0 L1350.2,499.5 M1341.1,491.8 L1344.9,482.5 M1341.1,491.8 L1350.2,499.5 M1344.9,482.5 L1344.1,474.4 M1344.9,482.5 L1358.8,485.3 M1344.1,474.4 L1337.1,467.8 M1344.1,474.4 L1356.9,471.2 M1337.1,467.8 L1322.5,464.0 M1337.1,467.8 L1342.0,460.3 M1322.5,464.0 L1309.2,460.2 M1322.5,464.0 L1318.8,454.3 M1309.2,460.2 L1294.6,454.5 M1309.2,460.2 L1318.8,454.3 M1294.6,454.5 L1282.8,450.7 M1294.6,454.5 L1296.7,447.9 M1282.8,450.7 L1296.7,447.9 M1282.8,450.7 L1274.0,439.2 M1261.3,445.5 L1249.9,443.1 M1261.3,445.5 L1274.0,439.2 M1261.3,445.5 L1249.1,435.6 M1249.9,443.1 L1249.1,435.6 M1237.1,437.4 L1249.1,435.6 M1237.1,437.4 L1231.2,428.8 M1219.6,435.4 L1207.0,430.4 M1219.6,435.4 L1231.2,428.8 M1207.0,430.4 L1212.8,421.0 M1190.6,423.3 L1178.2,420.3 M1190.6,423.3 L1212.8,421.0 M1190.6,423.3 L1184.0,414.3 M1178.2,420.3 L1163.4,416.9 M1178.2,420.3 L1184.0,414.3 M1163.4,416.9 L1148.0,413.0 M1163.4,416.9 L1165.4,406.8 M1148.0,413.0 L1141.5,401.6 M1130.5,408.6 L1118.2,402.8 M1130.5,408.6 L1141.5,401.6 M1118.2,402.8 L1107.2,399.1 M1118.2,402.8 L1119.9,396.3 M1107.2,399.1 L1119.9,396.3 M1107.2,399.1 L1095.7,389.9 M1086.6,396.0 L1072.6,391.1 M1086.6,396.0 L1095.7,389.9 M1072.6,391.1 L1072.7,381.7 M1057.0,386.7 L1043.2,382.3 M1057.0,386.7 L1072.7,381.7 M1043.2,382.3 L1029.6,378.3 M1043.2,382.3 L1051.2,373.8 M1029.6,378.3 L1015.1,372.9 M1029.6,378.3 L1031.4,370.1 M1015.1,372.9 L1001.7,368.6 M1015.1,372.9 L1031.4,370.1 M1015.1,372.9 L1007.1,361.6 M1001.7,368.6 L988.4,364.6 M1001.7,368.6 L1007.1,361.6 M988.4,364.6 L974.2,361.0 M988.4,364.6 L1007.1,361.6 M988.4,364.6 L981.3,355.0 M974.2,361.0 L959.0,358.4 M974.2,361.0 L981.3,355.0 M959.0,358.4 L946.0,358.4 M959.0,358.4 L962.7,349.2 M946.0,358.4 L936.2,362.5 M946.0,358.4 L941.2,349.5 M936.2,362.5 L931.2,371.3 M936.2,362.5 L925.0,358.1 M931.2,371.3 L924.2,378.5 M931.2,371.3 L917.9,370.1 M924.2,378.5 L917.9,370.1 M924.2,378.5 L908.5,384.2 M919.4,389.6 L913.7,398.3 M919.4,389.6 L908.5,384.2 M913.7,398.3 L908.6,406.6 M913.7,398.3 L898.8,397.6 M908.6,406.6 L901.7,416.9 M908.6,406.6 L898.8,397.6 M901.7,416.9 L896.7,425.3 M901.7,416.9 L887.5,411.3 M896.7,425.3 L891.1,431.9 M896.7,425.3 L881.3,425.1 M891.1,431.9 L886.6,441.7 M891.1,431.9 L881.3,425.1 M886.6,441.7 L881.7,450.6 M886.6,441.7 L871.0,439.3 M881.7,450.6 L866.9,451.2 M874.2,460.9 L866.9,451.2 M874.2,460.9 L858.8,464.5 M869.1,472.4 L863.5,478.6 M869.1,472.4 L858.8,464.5 M863.5,478.6 L848.5,479.5 M857.3,487.5 L851.9,496.2 M857.3,487.5 L848.5,479.5 M851.9,496.2 L844.9,503.4 M851.9,496.2 L840.5,492.8 M844.9,503.4 L840.5,492.8 M844.9,503.4 L830.5,507.5 M840.8,516.6 L834.4,524.1 M840.8,516.6 L830.5,507.5 M834.4,524.1 L827.8,534.2 M834.4,524.1 L820.1,518.2 M827.8,534.2 L819.0,541.4 M827.8,534.2 L814.7,531.6 M819.0,541.4 L816.8,550.6 M819.0,541.4 L814.7,531.6 M819.0,541.4 L805.4,544.9 M816.8,550.6 L810.6,561.2 M816.8,550.6 L805.4,544.9 M810.6,561.2 L804.9,570.7 M810.6,561.2 L794.8,556.4 M804.9,570.7 L789.4,571.9 M799.5,580.4 L793.4,588.8 M799.5,580.4 L789.4,571.9 M793.4,588.8 L784.2,596.1 M793.4,588.8 L781.7,585.1 M784.2,596.1 L782.0,605.9 M784.2,596.1 L781.7,585.1 M784.2,596.1 L767.2,599.9 M782.0,605.9 L777.4,614.7 M782.0,605.9 L767.2,599.9 M777.4,614.7 L762.7,614.1 M768.1,624.5 L765.2,632.7 M768.1,624.5 L762.7,614.1 M768.1,624.5 L753.8,627.8 M765.2,632.7 L757.7,641.5 M765.2,632.7 L753.8,627.8 M757.7,641.5 L753.8,651.4 M757.7,641.5 L743.5,638.9 M753.8,651.4 L748.9,659.7 M753.8,651.4 L738.1,653.6 M748.9,659.7 L743.4,668.3 M748.9,659.7 L738.1,653.6 M743.4,668.3 L730.5,666.4 M737.3,677.9 L731.3,686.8 M737.3,677.9 L730.5,666.4 M731.3,686.8 L725.8,696.0 M731.3,686.8 L719.2,679.6 M725.8,696.0 L712.1,695.7 M720.5,705.6 L714.5,714.4 M720.5,705.6 L712.1,695.7 M714.5,714.4 L708.5,722.7 M714.5,714.4 L701.6,708.6 M708.5,722.7 L702.5,732.7 M708.5,722.7 L694.6,718.1 M702.5,732.7 L696.3,739.5 M702.5,732.7 L687.6,732.3 M696.3,739.5 L692.4,749.3 M696.3,739.5 L687.6,732.3 M692.4,749.3 L693.3,757.6 M692.4,749.3 L678.1,746.1 M693.3,757.6 L700.4,764.2 M693.3,757.6 L680.5,761.1 M700.4,764.2 L694.9,771.6 M717.6,778.5 L740.6,784.9 M717.6,778.5 L694.9,771.6 M717.6,778.5 L712.5,794.7 M740.6,784.9 L748.3,801.8 M764.6,791.6 L783.2,799.2 M764.6,791.6 L748.3,801.8 M783.2,799.2 L807.4,804.4 M783.2,799.2 L772.4,811.9 M807.4,804.4 L828.7,810.1 M807.4,804.4 L802.0,820.8 M828.7,810.1 L829.9,828.9 M853.0,817.4 L871.5,824.6 M853.0,817.4 L829.9,828.9 M871.5,824.6 L895.0,828.2 M871.5,824.6 L859.5,836.5 M895.0,828.2 L894.8,843.7 M920.5,837.2 L938.1,844.3 M920.5,837.2 L894.8,843.7 M938.1,844.3 L959.9,851.1 M938.1,844.3 L917.2,853.6 M959.9,851.1 L983.5,855.8 M959.9,851.1 L946.6,863.6 M983.5,855.8 L1005.8,861.9 M983.5,855.8 L975.9,870.8 M1005.8,861.9 L1008.1,877.7 M1030.5,868.9 L1053.3,875.2 M1030.5,868.9 L1008.1,877.7 M1053.3,875.2 L1075.6,882.4 M1053.3,875.2 L1038.7,888.9 M1075.6,882.4 L1097.2,882.2 M1075.6,882.4 L1070.7,896.8 M1097.2,882.2 L1113.3,873.7 M1097.2,882.2 L1107.3,897.2 M1113.3,873.7 L1121.8,859.1 M1113.3,873.7 L1133.0,883.7 M1121.8,859.1 L1133.2,845.4 M1121.8,859.1 L1146.2,863.6 M1133.2,845.4 L1138.1,834.0 M1133.2,845.4 L1154.5,843.0 M1138.1,834.0 L1149.1,821.3 M1138.1,834.0 L1154.5,843.0 M1149.1,821.3 L1156.6,807.8 M1149.1,821.3 L1167.3,829.1 M1156.6,807.8 L1160.4,793.2 M1156.6,807.8 L1178.8,811.5 M1160.4,793.2 L1184.5,792.8 M1178.6,777.2 L1184.3,766.9 M1178.6,777.2 L1184.5,792.8 M1178.6,777.2 L1206.3,772.6 M1184.3,766.9 L1187.8,754.2 M1184.3,766.9 L1206.3,772.6 M1187.8,754.2 L1210.9,752.1 M1196.7,740.3 L1207.8,729.0 M1196.7,740.3 L1210.9,752.1 M1207.8,729.0 L1215.7,714.2 M1207.8,729.0 L1225.3,739.0 M1215.7,714.2 L1224.7,698.4 M1215.7,714.2 L1244.8,723.4 M1224.7,698.4 L1238.4,687.5 M1224.7,698.4 L1246.2,702.5 M1238.4,687.5 L1243.0,674.8 M1238.4,687.5 L1246.2,702.5 M1238.4,687.5 L1257.9,682.3 M1243.0,674.8 L1247.9,660.4 M1243.0,674.8 L1257.9,682.3 M1247.9,660.4 L1255.5,647.8 M1247.9,660.4 L1271.3,667.9 M1255.5,647.8 L1275.8,651.1 M1267.8,636.2 L1275.8,651.1 M1267.8,636.2 L1291.1,634.6 M1275.1,620.0 L1291.1,634.6 M1275.1,620.0 L1305.0,614.9 M1283.2,603.8 L1293.5,592.1 M1283.2,603.8 L1305.0,614.9 M1293.5,592.1 L1300.3,578.3 M1293.5,592.1 L1317.6,598.3 M1300.3,578.3 L1311.8,564.7 M1300.3,578.3 L1326.6,582.2 M1311.8,564.7 L1316.4,553.3 M1311.8,564.7 L1338.5,565.2 M1316.4,553.3 L1327.0,539.8 M1316.4,553.3 L1338.5,565.2 M1327.0,539.8 L1333.1,524.5 M1327.0,539.8 L1348.3,546.5 M1333.1,524.5 L1342.3,514.3 M1333.1,524.5 L1354.6,525.8 M1342.3,514.3 L1350.2,499.5 M1342.3,514.3 L1354.6,525.8 M1350.2,499.5 L1358.8,485.3 M1350.2,499.5 L1372.5,511.7 M1358.8,485.3 L1356.9,471.2 M1358.8,485.3 L1380.7,488.8 M1356.9,471.2 L1342.0,460.3 M1356.9,471.2 L1378.3,463.7 M1342.0,460.3 L1318.8,454.3 M1342.0,460.3 L1353.9,446.9 M1318.8,454.3 L1296.7,447.9 M1318.8,454.3 L1325.2,441.0 M1296.7,447.9 L1292.4,433.9 M1274.0,439.2 L1292.4,433.9 M1274.0,439.2 L1263.0,425.3 M1249.1,435.6 L1231.2,428.8 M1249.1,435.6 L1263.0,425.3 M1231.2,428.8 L1212.8,421.0 M1231.2,428.8 L1238.0,414.5 M1212.8,421.0 L1238.0,414.5 M1212.8,421.0 L1199.7,406.4 M1184.0,414.3 L1165.4,406.8 M1184.0,414.3 L1199.7,406.4 M1165.4,406.8 L1141.5,401.6 M1165.4,406.8 L1174.6,394.2 M1141.5,401.6 L1119.9,396.3 M1141.5,401.6 L1148.0,383.7 M1119.9,396.3 L1113.1,384.3 M1095.7,389.9 L1072.7,381.7 M1095.7,389.9 L1113.1,384.3 M1072.7,381.7 L1051.2,373.8 M1072.7,381.7 L1087.2,366.4 M1051.2,373.8 L1031.4,370.1 M1051.2,373.8 L1058.3,360.3 M1031.4,370.1 L1031.9,355.9 M1007.1,361.6 L1031.9,355.9 M1007.1,361.6 L1001.7,346.1 M981.3,355.0 L962.7,349.2 M981.3,355.0 L1001.7,346.1 M962.7,349.2 L941.2,349.5 M962.7,349.2 L973.9,333.7 M941.2,349.5 L925.0,358.1 M941.2,349.5 L936.1,332.5 M925.0,358.1 L917.9,370.1 M925.0,358.1 L908.3,349.4 M917.9,370.1 L893.5,369.1 M908.5,384.2 L898.8,397.6 M908.5,384.2 L893.5,369.1 M898.8,397.6 L887.5,411.3 M898.8,397.6 L876.7,387.1 M887.5,411.3 L881.3,425.1 M887.5,411.3 L865.6,405.1 M881.3,425.1 L871.0,439.3 M881.3,425.1 L857.7,418.4 M871.0,439.3 L866.9,451.2 M871.0,439.3 L848.5,439.3 M866.9,451.2 L858.8,464.5 M866.9,451.2 L848.5,439.3 M858.8,464.5 L848.5,479.5 M858.8,464.5 L834.2,457.1 M848.5,479.5 L840.5,492.8 M848.5,479.5 L823.5,475.1 M840.5,492.8 L817.6,491.4 M830.5,507.5 L820.1,518.2 M830.5,507.5 L817.6,491.4 M820.1,518.2 L814.7,531.6 M820.1,518.2 L799.7,508.9 M814.7,531.6 L788.9,531.0 M805.4,544.9 L794.8,556.4 M805.4,544.9 L788.9,531.0 M794.8,556.4 L789.4,571.9 M794.8,556.4 L769.5,547.4 M789.4,571.9 L781.7,585.1 M789.4,571.9 L766.1,566.1 M781.7,585.1 L760.2,582.7 M767.2,599.9 L762.7,614.1 M767.2,599.9 L760.2,582.7 M767.2,599.9 L743.3,596.9 M762.7,614.1 L735.6,616.4 M753.8,627.8 L743.5,638.9 M753.8,627.8 L735.6,616.4 M743.5,638.9 L738.1,653.6 M743.5,638.9 L721.6,634.6 M738.1,653.6 L730.5,666.4 M738.1,653.6 L715.4,651.5 M730.5,666.4 L719.2,679.6 M730.5,666.4 L715.4,651.5 M719.2,679.6 L712.1,695.7 M719.2,679.6 L698.9,669.7 M712.1,695.7 L701.6,708.6 M712.1,695.7 L687.4,689.9 M701.6,708.6 L694.6,718.1 M701.6,708.6 L681.0,706.2 M694.6,718.1 L687.6,732.3 M694.6,718.1 L681.0,706.2 M687.6,732.3 L678.1,746.1 M687.6,732.3 L667.3,723.9 M678.1,746.1 L680.5,761.1 M678.1,746.1 L651.5,740.2 M680.5,761.1 L694.9,771.6 M680.5,761.1 L658.3,769.4 M694.9,771.6 L682.2,782.5 M712.5,794.7 L748.3,801.8 M712.5,794.7 L682.2,782.5 M712.5,794.7 L697.1,819.0 M748.3,801.8 L772.4,811.9 M748.3,801.8 L749.7,826.9 M772.4,811.9 L802.0,820.8 M772.4,811.9 L749.7,826.9 M802.0,820.8 L829.9,828.9 M802.0,820.8 L791.4,842.6 M829.9,828.9 L859.5,836.5 M829.9,828.9 L842.1,855.7 M829.9,828.9 L791.4,842.6 M859.5,836.5 L894.8,843.7 M859.5,836.5 L842.1,855.7 M894.8,843.7 L917.2,853.6 M894.8,843.7 L887.8,866.6 M917.2,853.6 L946.6,863.6 M917.2,853.6 L887.8,866.6 M946.6,863.6 L975.9,870.8 M946.6,863.6 L925.0,882.9 M975.9,870.8 L1008.1,877.7 M975.9,870.8 L958.8,892.2 M1008.1,877.7 L1038.7,888.9 M1008.1,877.7 L990.5,901.9 M1038.7,888.9 L1070.7,896.8 M1038.7,888.9 L1024.0,911.7 M1070.7,896.8 L1107.3,897.2 M1070.7,896.8 L1060.4,921.1 M1107.3,897.2 L1133.0,883.7 M1107.3,897.2 L1100.2,927.1 M1107.3,897.2 L1136.0,901.3 M1133.0,883.7 L1146.2,863.6 M1133.0,883.7 L1167.3,890.2 M1133.0,883.7 L1136.0,901.3 M1146.2,863.6 L1154.5,843.0 M1146.2,863.6 L1183.5,871.4 M1154.5,843.0 L1167.3,829.1 M1154.5,843.0 L1188.4,843.2 M1167.3,829.1 L1178.8,811.5 M1167.3,829.1 L1188.4,843.2 M1178.8,811.5 L1184.5,792.8 M1178.8,811.5 L1213.0,818.0 M1184.5,792.8 L1219.2,792.1 M1206.3,772.6 L1210.9,752.1 M1206.3,772.6 L1245.7,774.9 M1206.3,772.6 L1219.2,792.1 M1210.9,752.1 L1225.3,739.0 M1210.9,752.1 L1240.1,752.6 M1225.3,739.0 L1244.8,723.4 M1225.3,739.0 L1240.1,752.6 M1244.8,723.4 L1246.2,702.5 M1244.8,723.4 L1276.5,721.8 M1244.8,723.4 L1271.7,740.5 M1246.2,702.5 L1281.0,699.2 M1257.9,682.3 L1271.3,667.9 M1257.9,682.3 L1281.0,699.2 M1271.3,667.9 L1275.8,651.1 M1271.3,667.9 L1308.0,679.4 M1275.8,651.1 L1311.9,654.5 M1291.1,634.6 L1316.7,629.7 M1291.1,634.6 L1311.9,654.5 M1305.0,614.9 L1317.6,598.3 M1305.0,614.9 L1316.7,629.7 M1305.0,614.9 L1338.3,626.8 M1317.6,598.3 L1326.6,582.2 M1317.6,598.3 L1352.5,608.0 M1326.6,582.2 L1338.5,565.2 M1326.6,582.2 L1359.5,590.6 M1338.5,565.2 L1348.3,546.5 M1338.5,565.2 L1359.5,590.6 M1338.5,565.2 L1374.2,556.5 M1348.3,546.5 L1354.6,525.8 M1348.3,546.5 L1374.2,556.5 M1354.6,525.8 L1372.5,511.7 M1354.6,525.8 L1377.6,532.7 M1372.5,511.7 L1380.7,488.8 M1372.5,511.7 L1377.6,532.7 M1372.5,511.7 L1406.4,514.7 M1380.7,488.8 L1378.3,463.7 M1380.7,488.8 L1418.6,493.8 M1378.3,463.7 L1353.9,446.9 M1378.3,463.7 L1415.5,469.3 M1378.3,463.7 L1387.3,438.1 M1353.9,446.9 L1325.2,441.0 M1353.9,446.9 L1387.3,438.1 M1353.9,446.9 L1340.5,429.5 M1325.2,441.0 L1292.4,433.9 M1325.2,441.0 L1340.5,429.5 M1292.4,433.9 L1263.0,425.3 M1292.4,433.9 L1309.4,416.3 M1263.0,425.3 L1238.0,414.5 M1263.0,425.3 L1270.7,403.3 M1238.0,414.5 L1221.4,393.6 M1238.0,414.5 L1270.7,403.3 M1199.7,406.4 L1174.6,394.2 M1199.7,406.4 L1221.4,393.6 M1174.6,394.2 L1148.0,383.7 M1174.6,394.2 L1185.9,375.3 M1148.0,383.7 L1113.1,384.3 M1148.0,383.7 L1185.9,375.3 M1148.0,383.7 L1129.1,357.5 M1113.1,384.3 L1087.2,366.4 M1087.2,366.4 L1058.3,360.3 M1087.2,366.4 L1063.4,341.7 M1087.2,366.4 L1129.1,357.5 M1058.3,360.3 L1031.9,355.9 M1058.3,360.3 L1063.4,341.7 M1031.9,355.9 L1001.7,346.1 M1031.9,355.9 L1063.4,341.7 M1001.7,346.1 L973.9,333.7 M1001.7,346.1 L1018.5,324.5 M973.9,333.7 L936.1,332.5 M973.9,333.7 L1018.5,324.5 M973.9,333.7 L958.6,311.3 M936.1,332.5 L908.3,349.4 M936.1,332.5 L958.6,311.3 M936.1,332.5 L906.3,312.6 M908.3,349.4 L893.5,369.1 M908.3,349.4 L880.5,333.2 M893.5,369.1 L876.7,387.1 M893.5,369.1 L854.5,349.1 M876.7,387.1 L865.6,405.1 M876.7,387.1 L840.4,376.3 M865.6,405.1 L857.7,418.4 M865.6,405.1 L831.2,403.6 M857.7,418.4 L848.5,439.3 M857.7,418.4 L831.2,403.6 M848.5,439.3 L834.2,457.1 M848.5,439.3 L811.7,428.0 M834.2,457.1 L823.5,475.1 M834.2,457.1 L801.9,446.2 M823.5,475.1 L817.6,491.4 M823.5,475.1 L791.3,472.2 M817.6,491.4 L799.7,508.9 M817.6,491.4 L791.3,472.2 M799.7,508.9 L788.9,531.0 M799.7,508.9 L766.0,494.8 M788.9,531.0 L769.5,547.4 M788.9,531.0 L746.4,522.3 M769.5,547.4 L766.1,566.1 M769.5,547.4 L740.7,563.2 M769.5,547.4 L746.4,522.3 M766.1,566.1 L760.2,582.7 M766.1,566.1 L740.7,563.2 M760.2,582.7 L743.3,596.9 M760.2,582.7 L740.7,563.2 M743.3,596.9 L735.6,616.4 M743.3,596.9 L707.5,582.4 M735.6,616.4 L721.6,634.6 M735.6,616.4 L692.0,605.5 M721.6,634.6 L715.4,651.5 M721.6,634.6 L686.1,632.9 M715.4,651.5 L698.9,669.7 M715.4,651.5 L686.1,632.9 M698.9,669.7 L687.4,689.9 M698.9,669.7 L665.4,658.5 M687.4,689.9 L681.0,706.2 M687.4,689.9 L647.0,688.8 M681.0,706.2 L667.3,723.9 M681.0,706.2 L647.0,688.8 M667.3,723.9 L651.5,740.2 M667.3,723.9 L642.1,716.9 M651.5,740.2 L658.3,769.4 M651.5,740.2 L598.2,745.4 M651.5,740.2 L642.1,716.9 M658.3,769.4 L682.2,782.5 M658.3,769.4 L656.7,797.6 M658.3,769.4 L611.4,770.6 M682.2,782.5 L656.7,797.6 M1271.5,926.3 L1270.8,922.2 M1271.5,926.3 L1278.0,926.3 M1271.5,926.3 L1264.2,926.8 M1271.5,926.3 L1271.7,930.0 M1270.8,922.2 L1270.4,918.2 M1270.8,922.2 L1277.2,922.1 M1270.8,922.2 L1263.6,921.8 M1270.4,918.2 L1276.4,918.0 M1270.4,918.2 L1269.3,914.5 M1270.4,918.2 L1265.1,917.2 M1278.0,926.3 L1277.2,922.1 M1278.0,926.3 L1284.2,925.9 M1278.0,926.3 L1279.3,931.7 M1277.2,922.1 L1276.4,918.0 M1277.2,922.1 L1283.5,922.0 M1276.4,918.0 L1282.9,918.0 M1276.4,918.0 L1275.3,912.8 M1284.2,925.9 L1283.5,922.0 M1284.2,925.9 L1285.9,929.4 M1284.2,925.9 L1289.8,926.2 M1283.5,922.0 L1282.9,918.0 M1283.5,922.0 L1290.6,922.3 M1282.9,918.0 L1290.1,917.3 M1282.9,918.0 L1282.7,914.4 M1290.6,922.3 L1290.1,917.3 M1290.6,922.3 L1289.8,926.2 M1290.6,922.3 L1298.4,923.8 M1290.1,917.3 L1296.8,917.2 M1290.1,917.3 L1290.0,912.5 M1282.7,914.4 L1275.3,912.8 M1282.7,914.4 L1290.0,912.5 M1275.3,912.8 L1269.3,914.5 M1275.3,912.8 L1280.9,907.2 M1275.3,912.8 L1267.1,909.1 M1269.3,914.5 L1265.1,917.2 M1269.3,914.5 L1267.1,909.1 M1265.1,917.2 L1263.6,921.8 M1265.1,917.2 L1258.9,913.7 M1263.6,921.8 L1264.2,926.8 M1263.6,921.8 L1255.4,920.0 M1264.2,926.8 L1256.7,926.9 M1264.2,926.8 L1264.3,931.8 M1271.7,930.0 L1279.3,931.7 M1271.7,930.0 L1264.3,931.8 M1279.3,931.7 L1285.9,929.4 M1279.3,931.7 L1273.7,936.9 M1279.3,931.7 L1287.7,936.4 M1285.9,929.4 L1294.2,930.3 M1289.8,926.2 L1294.2,930.3 M1296.8,917.2 L1290.0,912.5 M1296.8,917.2 L1298.4,923.8 M1296.8,917.2 L1306.2,914.7 M1290.0,912.5 L1280.9,907.2 M1290.0,912.5 L1297.9,907.2 M1280.9,907.2 L1285.7,902.2 M1280.9,907.2 L1272.8,902.4 M1267.1,909.1 L1258.9,913.7 M1267.1,909.1 L1272.8,902.4 M1267.1,909.1 L1260.2,903.8 M1258.9,913.7 L1255.4,920.0 M1258.9,913.7 L1249.8,909.4 M1255.4,920.0 L1256.7,926.9 M1255.4,920.0 L1244.7,918.1 M1256.7,926.9 L1264.3,931.8 M1256.7,926.9 L1244.2,928.5 M1264.3,931.8 L1273.7,936.9 M1264.3,931.8 L1255.9,936.8 M1273.7,936.9 L1268.8,941.7 M1273.7,936.9 L1281.8,941.9 M1287.7,936.4 L1294.2,930.3 M1287.7,936.4 L1281.8,941.9 M1287.7,936.4 L1294.8,940.6 M1294.2,930.3 L1298.4,923.8 M1294.2,930.3 L1307.9,934.3 M1298.4,923.8 L1309.4,923.8 M1306.2,914.7 L1297.9,907.2 M1306.2,914.7 L1309.4,923.8 M1306.2,914.7 L1317.4,909.9 M1297.9,907.2 L1285.7,902.2 M1297.9,907.2 L1305.5,900.8 M1285.7,902.2 L1272.8,902.4 M1285.7,902.2 L1290.0,894.6 M1272.8,902.4 L1260.2,903.8 M1272.8,902.4 L1272.7,892.9 M1260.2,903.8 L1249.8,909.4 M1260.2,903.8 L1255.4,895.4 M1249.8,909.4 L1244.7,918.1 M1249.8,909.4 L1238.2,901.4 M1244.7,918.1 L1244.2,928.5 M1244.7,918.1 L1231.8,913.8 M1244.2,928.5 L1255.9,936.8 M1244.2,928.5 L1230.8,925.4 M1244.2,928.5 L1235.4,934.8 M1255.9,936.8 L1268.8,941.7 M1255.9,936.8 L1248.0,943.9 M1268.8,941.7 L1281.8,941.9 M1268.8,941.7 L1264.1,949.8 M1281.8,941.9 L1294.8,940.6 M1281.8,941.9 L1281.8,951.6 M1294.8,940.6 L1307.9,934.3 M1294.8,940.6 L1298.8,949.4 M1307.9,934.3 L1309.4,923.8 M1307.9,934.3 L1314.4,944.7 M1307.9,934.3 L1325.8,932.8 M1309.4,923.8 L1323.4,921.2 M1323.4,921.2 L1317.4,909.9 M1323.4,921.2 L1325.8,932.8 M1323.4,921.2 L1340.9,919.5 M1317.4,909.9 L1305.5,900.8 M1317.4,909.9 L1334.2,903.3 M1305.5,900.8 L1290.0,894.6 M1305.5,900.8 L1314.9,892.3 M1290.0,894.6 L1272.7,892.9 M1290.0,894.6 L1295.0,884.9 M1272.7,892.9 L1255.4,895.4 M1272.7,892.9 L1273.8,881.9 M1255.4,895.4 L1238.2,901.4 M1255.4,895.4 L1253.0,883.8 M1238.2,901.4 L1231.8,913.8 M1238.2,901.4 L1233.7,890.0 M1238.2,901.4 L1222.6,898.2 M1231.8,913.8 L1230.8,925.4 M1231.8,913.8 L1215.1,910.9 M1230.8,925.4 L1235.4,934.8 M1230.8,925.4 L1214.7,925.4 M1235.4,934.8 L1248.0,943.9 M1235.4,934.8 L1219.5,941.5 M1248.0,943.9 L1264.1,949.8 M1248.0,943.9 L1237.7,953.2 M1264.1,949.8 L1281.8,951.6 M1264.1,949.8 L1258.3,960.6 M1281.8,951.6 L1298.8,949.4 M1281.8,951.6 L1280.8,963.1 M1298.8,949.4 L1314.4,944.7 M1298.8,949.4 L1301.8,960.8 M1314.4,944.7 L1319.9,954.2 M1314.4,944.7 L1330.8,943.7 M1325.8,932.8 L1330.8,943.7 M1325.8,932.8 L1340.2,933.4 M1340.9,919.5 L1334.2,903.3 M1340.9,919.5 L1340.2,933.4 M1340.9,919.5 L1367.7,922.5 M1334.2,903.3 L1314.9,892.3 M1334.2,903.3 L1355.2,903.2 M1334.2,903.3 L1343.4,889.8 M1314.9,892.3 L1295.0,884.9 M1314.9,892.3 L1321.1,879.2 M1295.0,884.9 L1273.8,881.9 M1295.0,884.9 L1295.9,871.3 M1273.8,881.9 L1253.0,883.8 M1273.8,881.9 L1270.0,867.7 M1253.0,883.8 L1233.7,890.0 M1253.0,883.8 L1245.8,867.1 M1233.7,890.0 L1222.6,898.2 M1233.7,890.0 L1218.8,875.1 M1222.6,898.2 L1215.1,910.9 M1222.6,898.2 L1204.6,888.0 M1215.1,910.9 L1214.7,925.4 M1215.1,910.9 L1190.9,904.1 M1214.7,925.4 L1219.5,941.5 M1214.7,925.4 L1193.6,923.9 M1219.5,941.5 L1237.7,953.2 M1219.5,941.5 L1194.7,939.4 M1219.5,941.5 L1213.0,957.5 M1237.7,953.2 L1258.3,960.6 M1237.7,953.2 L1225.7,969.0 M1258.3,960.6 L1280.8,963.1 M1258.3,960.6 L1254.4,977.8 M1280.8,963.1 L1301.8,960.8 M1280.8,963.1 L1286.5,979.0 M1301.8,960.8 L1319.9,954.2 M1301.8,960.8 L1309.7,975.0 M1319.9,954.2 L1330.8,943.7 M1319.9,954.2 L1334.2,967.7 M1330.8,943.7 L1340.2,933.4 M1330.8,943.7 L1351.8,955.0 M1340.2,933.4 L1361.7,940.1 M1355.2,903.2 L1343.4,889.8 M1355.2,903.2 L1367.7,922.5 M1355.2,903.2 L1379.2,894.4 M1343.4,889.8 L1321.1,879.2 M1343.4,889.8 L1362.3,870.3 M1321.1,879.2 L1295.9,871.3 M1321.1,879.2 L1330.8,861.0 M1295.9,871.3 L1270.0,867.7 M1295.9,871.3 L1297.7,851.8 M1270.0,867.7 L1245.8,867.1 M1270.0,867.7 L1262.6,848.9 M1245.8,867.1 L1218.8,875.1 M1245.8,867.1 L1223.4,855.4 M1245.8,867.1 L1262.6,848.9 M1218.8,875.1 L1204.6,888.0 M1218.8,875.1 L1223.4,855.4 M1218.8,875.1 L1183.5,871.4 M1204.6,888.0 L1190.9,904.1 M1204.6,888.0 L1183.5,871.4 M1190.9,904.1 L1193.6,923.9 M1190.9,904.1 L1167.3,890.2 M1190.9,904.1 L1166.4,905.8 M1193.6,923.9 L1194.7,939.4 M1193.6,923.9 L1169.0,928.3 M1194.7,939.4 L1191.5,964.8 M1194.7,939.4 L1169.0,928.3 M1213.0,957.5 L1225.7,969.0 M1213.0,957.5 L1191.5,964.8 M1225.7,969.0 L1254.4,977.8 M1225.7,969.0 L1228.5,994.2 M1225.7,969.0 L1191.5,964.8 M1254.4,977.8 L1286.5,979.0 M1254.4,977.8 L1228.5,994.2 M1254.4,977.8 L1275.3,992.8 M1286.5,979.0 L1309.7,975.0 M1286.5,979.0 L1319.3,993.0 M1286.5,979.0 L1275.3,992.8 M1309.7,975.0 L1334.2,967.7 M1309.7,975.0 L1319.3,993.0 M1334.2,967.7 L1351.8,955.0 M1334.2,967.7 L1357.0,985.4 M1351.8,955.0 L1361.7,940.1 M1351.8,955.0 L1378.8,969.4 M1361.7,940.1 L1367.7,922.5 M1361.7,940.1 L1388.4,950.7 M1367.7,922.5 L1399.3,933.8 M1367.7,922.5 L1389.5,915.2 M1396.6,732.5 L1394.5,728.7 M1396.6,732.5 L1402.8,731.5 M1396.6,732.5 L1390.4,734.8 M1396.6,732.5 L1398.8,736.5 M1394.5,728.7 L1392.0,724.9 M1394.5,728.7 L1400.4,727.5 M1394.5,728.7 L1388.1,731.1 M1392.0,724.9 L1398.0,723.6 M1392.0,724.9 L1388.8,721.9 M1392.0,724.9 L1384.9,726.3 M1402.8,731.5 L1400.4,727.5 M1402.8,731.5 L1408.7,730.2 M1402.8,731.5 L1406.7,736.4 M1400.4,727.5 L1398.0,723.6 M1400.4,727.5 L1406.5,726.4 M1398.0,723.6 L1404.1,722.3 M1398.0,723.6 L1393.8,719.6 M1408.7,730.2 L1406.5,726.4 M1408.7,730.2 L1412.1,733.4 M1408.7,730.2 L1414.5,729.5 M1406.5,726.4 L1404.1,722.3 M1406.5,726.4 L1413.5,725.4 M1404.1,722.3 L1411.1,720.2 M1404.1,722.3 L1401.0,717.3 M1413.5,725.4 L1411.1,720.2 M1413.5,725.4 L1414.5,729.5 M1413.5,725.4 L1422.2,726.2 M1411.1,720.2 L1420.2,719.0 M1411.1,720.2 L1409.3,714.0 M1401.0,717.3 L1393.8,719.6 M1401.0,717.3 L1409.3,714.0 M1401.0,717.3 L1396.0,711.6 M1393.8,719.6 L1388.8,721.9 M1393.8,719.6 L1386.8,716.0 M1388.8,721.9 L1381.1,722.0 M1384.9,726.3 L1388.1,731.1 M1384.9,726.3 L1381.1,722.0 M1384.9,726.3 L1378.6,727.9 M1388.1,731.1 L1390.4,734.8 M1388.1,731.1 L1382.2,734.9 M1390.4,734.8 L1382.2,734.9 M1390.4,734.8 L1394.0,740.9 M1398.8,736.5 L1406.7,736.4 M1398.8,736.5 L1394.0,740.9 M1406.7,736.4 L1412.1,733.4 M1406.7,736.4 L1405.9,741.2 M1406.7,736.4 L1414.3,738.9 M1412.1,733.4 L1419.9,733.1 M1414.5,729.5 L1419.9,733.1 M1420.2,719.0 L1422.2,726.2 M1420.2,719.0 L1429.6,718.5 M1420.2,719.0 L1419.3,712.3 M1409.3,714.0 L1419.3,712.3 M1409.3,714.0 L1407.2,706.9 M1396.0,711.6 L1386.8,716.0 M1396.0,711.6 L1407.2,706.9 M1396.0,711.6 L1388.5,705.5 M1386.8,716.0 L1381.1,722.0 M1386.8,716.0 L1377.7,711.3 M1381.1,722.0 L1378.6,727.9 M1381.1,722.0 L1370.2,718.7 M1378.6,727.9 L1382.2,734.9 M1378.6,727.9 L1368.1,727.3 M1382.2,734.9 L1372.0,736.2 M1382.2,734.9 L1382.3,742.4 M1394.0,740.9 L1405.9,741.2 M1394.0,740.9 L1382.3,742.4 M1394.0,740.9 L1394.9,748.8 M1405.9,741.2 L1414.3,738.9 M1405.9,741.2 L1410.8,747.5 M1414.3,738.9 L1419.9,733.1 M1414.3,738.9 L1423.2,743.5 M1419.9,733.1 L1422.2,726.2 M1419.9,733.1 L1431.4,736.4 M1422.2,726.2 L1433.6,727.5 M1429.6,718.5 L1419.3,712.3 M1429.6,718.5 L1433.6,727.5 M1429.6,718.5 L1444.4,715.7 M1419.3,712.3 L1407.2,706.9 M1419.3,712.3 L1429.6,705.9 M1407.2,706.9 L1413.6,699.9 M1407.2,706.9 L1397.4,699.4 M1388.5,705.5 L1377.7,711.3 M1388.5,705.5 L1397.4,699.4 M1388.5,705.5 L1381.4,700.1 M1377.7,711.3 L1370.2,718.7 M1377.7,711.3 L1366.5,705.6 M1370.2,718.7 L1368.1,727.3 M1370.2,718.7 L1357.4,715.1 M1368.1,727.3 L1372.0,736.2 M1368.1,727.3 L1354.1,726.2 M1372.0,736.2 L1382.3,742.4 M1372.0,736.2 L1356.6,739.4 M1382.3,742.4 L1394.9,748.8 M1382.3,742.4 L1371.3,749.1 M1394.9,748.8 L1410.8,747.5 M1394.9,748.8 L1387.2,755.3 M1394.9,748.8 L1402.0,757.1 M1410.8,747.5 L1423.2,743.5 M1410.8,747.5 L1419.6,755.4 M1423.2,743.5 L1431.4,736.4 M1423.2,743.5 L1434.8,749.7 M1431.4,736.4 L1433.6,727.5 M1431.4,736.4 L1444.7,740.3 M1433.6,727.5 L1447.6,728.9 M1444.4,715.7 L1429.6,705.9 M1444.4,715.7 L1447.6,728.9 M1444.4,715.7 L1461.9,717.5 M1444.4,715.7 L1452.5,707.0 M1429.6,705.9 L1413.6,699.9 M1429.6,705.9 L1437.4,696.8 M1413.6,699.9 L1397.4,699.4 M1413.6,699.9 L1417.3,689.9 M1397.4,699.4 L1381.4,700.1 M1397.4,699.4 L1395.8,688.0 M1381.4,700.1 L1366.5,705.6 M1381.4,700.1 L1374.5,690.2 M1366.5,705.6 L1357.4,715.1 M1366.5,705.6 L1351.8,696.0 M1357.4,715.1 L1354.1,726.2 M1357.4,715.1 L1340.6,710.1 M1354.1,726.2 L1356.6,739.4 M1354.1,726.2 L1335.9,723.7 M1356.6,739.4 L1371.3,749.1 M1356.6,739.4 L1338.6,737.9 M1356.6,739.4 L1347.5,748.6 M1371.3,749.1 L1387.2,755.3 M1371.3,749.1 L1363.0,758.8 M1387.2,755.3 L1402.0,757.1 M1387.2,755.3 L1382.9,765.3 M1402.0,757.1 L1419.6,755.4 M1402.0,757.1 L1404.6,767.8 M1419.6,755.4 L1434.8,749.7 M1419.6,755.4 L1427.2,766.1 M1434.8,749.7 L1444.7,740.3 M1434.8,749.7 L1449.1,759.6 M1444.7,740.3 L1447.6,728.9 M1444.7,740.3 L1460.9,745.4 M1447.6,728.9 L1464.9,731.7 M1461.9,717.5 L1452.5,707.0 M1461.9,717.5 L1464.9,731.7 M1461.9,717.5 L1489.4,714.1 M1452.5,707.0 L1437.4,696.8 M1452.5,707.0 L1469.5,698.5 M1437.4,696.8 L1417.3,689.9 M1437.4,696.8 L1453.4,685.8 M1417.3,689.9 L1395.8,688.0 M1417.3,689.9 L1423.4,676.7 M1395.8,688.0 L1374.5,690.2 M1395.8,688.0 L1396.4,674.4 M1374.5,690.2 L1351.8,696.0 M1374.5,690.2 L1369.9,675.6 M1351.8,696.0 L1340.6,710.1 M1351.8,696.0 L1347.7,678.2 M1351.8,696.0 L1326.5,694.1 M1340.6,710.1 L1335.9,723.7 M1340.6,710.1 L1315.6,706.8 M1335.9,723.7 L1338.6,737.9 M1335.9,723.7 L1310.5,723.5 M1338.6,737.9 L1347.5,748.6 M1338.6,737.9 L1309.7,743.2 M1347.5,748.6 L1363.0,758.8 M1347.5,748.6 L1329.9,758.2 M1363.0,758.8 L1382.9,765.3 M1363.0,758.8 L1349.9,769.6 M1382.9,765.3 L1404.6,767.8 M1382.9,765.3 L1373.1,777.7 M1404.6,767.8 L1427.2,766.1 M1404.6,767.8 L1401.1,781.3 M1427.2,766.1 L1449.1,759.6 M1427.2,766.1 L1433.7,782.1 M1449.1,759.6 L1460.9,745.4 M1449.1,759.6 L1448.9,775.0 M1449.1,759.6 L1475.0,766.1 M1460.9,745.4 L1464.9,731.7 M1460.9,745.4 L1483.5,749.5 M1464.9,731.7 L1489.2,733.3 M1489.4,714.1 L1469.5,698.5 M1489.4,714.1 L1489.2,733.3 M1489.4,714.1 L1519.2,721.2 M1489.4,714.1 L1516.9,702.2 M1469.5,698.5 L1453.4,685.8 M1469.5,698.5 L1490.9,686.3 M1453.4,685.8 L1423.4,676.7 M1453.4,685.8 L1490.9,686.3 M1453.4,685.8 L1454.1,668.3 M1423.4,676.7 L1396.4,674.4 M1423.4,676.7 L1425.8,656.8 M1396.4,674.4 L1369.9,675.6 M1396.4,674.4 L1394.8,657.4 M1369.9,675.6 L1347.7,678.2 M1369.9,675.6 L1355.7,658.1 M1347.7,678.2 L1355.7,658.1 M1347.7,678.2 L1308.0,679.4 M1326.5,694.1 L1315.6,706.8 M1326.5,694.1 L1308.0,679.4 M1315.6,706.8 L1310.5,723.5 M1315.6,706.8 L1281.0,699.2 M1310.5,723.5 L1309.7,743.2 M1310.5,723.5 L1276.5,721.8 M1309.7,743.2 L1329.9,758.2 M1309.7,743.2 L1271.7,740.5 M1309.7,743.2 L1283.7,758.7 M1329.9,758.2 L1349.9,769.6 M1329.9,758.2 L1304.9,774.1 M1349.9,769.6 L1373.1,777.7 M1349.9,769.6 L1330.5,784.4 M1373.1,777.7 L1401.1,781.3 M1373.1,777.7 L1353.0,795.8 M1401.1,781.3 L1433.7,782.1 M1401.1,781.3 L1392.4,799.4 M1433.7,782.1 L1448.9,775.0 M1433.7,782.1 L1466.6,785.4 M1433.7,782.1 L1428.9,804.8 M1448.9,775.0 L1466.6,785.4 M1475.0,766.1 L1483.5,749.5 M1475.0,766.1 L1504.3,772.0 M1475.0,766.1 L1466.6,785.4 M1483.5,749.5 L1489.2,733.3 M1483.5,749.5 L1511.2,756.1 M1489.2,733.3 L1523.2,739.3 M1518.1,536.3 L1517.5,533.2 M1518.1,536.3 L1523.2,536.9 M1518.1,536.3 L1513.3,539.4 M1517.5,533.2 L1516.6,528.7 M1517.5,533.2 L1523.4,533.0 M1517.5,533.2 L1510.9,535.3 M1516.6,528.7 L1522.7,529.0 M1516.6,528.7 L1519.7,525.5 M1516.6,528.7 L1511.3,526.2 M1516.6,528.7 L1510.0,530.3 M1523.2,536.9 L1523.4,533.0 M1523.2,536.9 L1529.1,537.5 M1523.2,536.9 L1522.1,541.1 M1523.4,533.0 L1522.7,529.0 M1523.4,533.0 L1529.8,533.5 M1522.7,529.0 L1529.9,528.8 M1522.7,529.0 L1519.7,525.5 M1529.1,537.5 L1529.8,533.5 M1529.1,537.5 L1529.6,541.0 M1529.1,537.5 L1534.4,538.8 M1529.8,533.5 L1529.9,528.8 M1529.8,533.5 L1536.8,534.6 M1529.9,528.8 L1536.8,530.4 M1529.9,528.8 L1533.7,525.4 M1529.9,528.8 L1526.6,524.6 M1536.8,530.4 L1536.8,534.6 M1536.8,530.4 L1543.4,527.5 M1533.7,525.4 L1526.6,524.6 M1533.7,525.4 L1543.4,527.5 M1533.7,525.4 L1534.7,519.5 M1526.6,524.6 L1519.7,525.5 M1526.6,524.6 L1523.3,519.3 M1519.7,525.5 L1512.7,521.5 M1511.3,526.2 L1510.0,530.3 M1511.3,526.2 L1512.7,521.5 M1511.3,526.2 L1504.9,524.8 M1510.0,530.3 L1510.9,535.3 M1510.0,530.3 L1501.5,531.0 M1510.9,535.3 L1513.3,539.4 M1510.9,535.3 L1503.2,538.4 M1513.3,539.4 L1522.1,541.1 M1513.3,539.4 L1503.2,538.4 M1513.3,539.4 L1512.4,546.5 M1522.1,541.1 L1529.6,541.0 M1522.1,541.1 L1524.2,546.7 M1529.6,541.0 L1534.4,538.8 M1529.6,541.0 L1534.6,545.3 M1534.4,538.8 L1536.8,534.6 M1534.4,538.8 L1542.2,541.1 M1536.8,534.6 L1545.3,534.7 M1543.4,527.5 L1545.3,534.7 M1543.4,527.5 L1553.9,527.6 M1543.4,527.5 L1545.8,520.5 M1534.7,519.5 L1523.3,519.3 M1534.7,519.5 L1545.8,520.5 M1534.7,519.5 L1535.3,512.4 M1523.3,519.3 L1512.7,521.5 M1523.3,519.3 L1518.7,512.5 M1512.7,521.5 L1504.9,524.8 M1512.7,521.5 L1505.3,515.3 M1504.9,524.8 L1501.5,531.0 M1504.9,524.8 L1495.5,521.2 M1501.5,531.0 L1503.2,538.4 M1501.5,531.0 L1490.8,529.4 M1503.2,538.4 L1492.5,538.5 M1503.2,538.4 L1498.5,546.6 M1512.4,546.5 L1524.2,546.7 M1512.4,546.5 L1498.5,546.6 M1512.4,546.5 L1514.5,555.2 M1524.2,546.7 L1534.6,545.3 M1524.2,546.7 L1529.0,553.8 M1534.6,545.3 L1542.2,541.1 M1534.6,545.3 L1542.5,551.0 M1542.2,541.1 L1545.3,534.7 M1542.2,541.1 L1552.3,545.0 M1545.3,534.7 L1556.1,536.5 M1553.9,527.6 L1545.8,520.5 M1553.9,527.6 L1556.1,536.5 M1553.9,527.6 L1567.6,527.3 M1545.8,520.5 L1535.3,512.4 M1545.8,520.5 L1560.1,516.8 M1535.3,512.4 L1518.7,512.5 M1535.3,512.4 L1549.8,507.0 M1535.3,512.4 L1528.2,501.4 M1518.7,512.5 L1505.3,515.3 M1518.7,512.5 L1510.3,503.9 M1505.3,515.3 L1495.5,521.2 M1505.3,515.3 L1494.4,509.0 M1495.5,521.2 L1490.8,529.4 M1495.5,521.2 L1482.7,516.9 M1490.8,529.4 L1492.5,538.5 M1490.8,529.4 L1476.9,527.3 M1492.5,538.5 L1498.5,546.6 M1492.5,538.5 L1478.3,538.8 M1498.5,546.6 L1483.1,550.1 M1498.5,546.6 L1500.3,558.1 M1514.5,555.2 L1529.0,553.8 M1514.5,555.2 L1500.3,558.1 M1514.5,555.2 L1519.5,564.8 M1529.0,553.8 L1542.5,551.0 M1529.0,553.8 L1537.3,562.4 M1542.5,551.0 L1552.3,545.0 M1542.5,551.0 L1553.5,557.5 M1552.3,545.0 L1556.1,536.5 M1552.3,545.0 L1564.9,549.3 M1556.1,536.5 L1569.5,538.6 M1567.6,527.3 L1560.1,516.8 M1567.6,527.3 L1569.5,538.6 M1567.6,527.3 L1585.4,526.5 M1560.1,516.8 L1549.8,507.0 M1560.1,516.8 L1576.6,513.3 M1549.8,507.0 L1562.5,502.4 M1549.8,507.0 L1543.4,496.8 M1528.2,501.4 L1510.3,503.9 M1528.2,501.4 L1543.4,496.8 M1528.2,501.4 L1524.0,492.1 M1510.3,503.9 L1494.4,509.0 M1510.3,503.9 L1498.5,491.6 M1494.4,509.0 L1482.7,516.9 M1494.4,509.0 L1478.0,501.1 M1482.7,516.9 L1476.9,527.3 M1482.7,516.9 L1464.8,512.0 M1476.9,527.3 L1478.3,538.8 M1476.9,527.3 L1458.2,525.3 M1478.3,538.8 L1483.1,550.1 M1478.3,538.8 L1461.2,539.6 M1483.1,550.1 L1469.7,552.7 M1483.1,550.1 L1484.5,561.2 M1500.3,558.1 L1484.5,561.2 M1500.3,558.1 L1504.0,568.7 M1519.5,564.8 L1537.3,562.4 M1519.5,564.8 L1504.0,568.7 M1519.5,564.8 L1523.2,573.9 M1537.3,562.4 L1553.5,557.5 M1537.3,562.4 L1548.4,573.2 M1553.5,557.5 L1564.9,549.3 M1553.5,557.5 L1568.5,564.7 M1564.9,549.3 L1569.5,538.6 M1564.9,549.3 L1581.7,553.5 M1569.5,538.6 L1587.4,540.4 M1585.4,526.5 L1576.6,513.3 M1585.4,526.5 L1587.4,540.4 M1585.4,526.5 L1609.5,524.7 M1576.6,513.3 L1562.5,502.4 M1576.6,513.3 L1597.5,507.3 M1562.5,502.4 L1543.4,496.8 M1562.5,502.4 L1581.8,492.3 M1543.4,496.8 L1524.0,492.1 M1543.4,496.8 L1555.2,482.8 M1524.0,492.1 L1498.5,491.6 M1524.0,492.1 L1528.6,477.3 M1498.5,491.6 L1478.0,501.1 M1498.5,491.6 L1501.6,475.9 M1498.5,491.6 L1479.7,480.7 M1478.0,501.1 L1464.8,512.0 M1478.0,501.1 L1452.6,491.1 M1464.8,512.0 L1458.2,525.3 M1464.8,512.0 L1441.8,505.8 M1458.2,525.3 L1461.2,539.6 M1458.2,525.3 L1431.1,524.3 M1461.2,539.6 L1469.7,552.7 M1461.2,539.6 L1439.0,543.8 M1469.7,552.7 L1484.5,561.2 M1469.7,552.7 L1449.7,560.9 M1484.5,561.2 L1504.0,568.7 M1484.5,561.2 L1461.8,575.2 M1504.0,568.7 L1523.2,573.9 M1504.0,568.7 L1490.4,584.4 M1523.2,573.9 L1548.4,573.2 M1523.2,573.9 L1517.1,588.8 M1548.4,573.2 L1568.5,564.7 M1548.4,573.2 L1544.5,585.5 M1548.4,573.2 L1566.5,580.7 M1568.5,564.7 L1581.7,553.5 M1568.5,564.7 L1589.9,574.4 M1581.7,553.5 L1587.4,540.4 M1581.7,553.5 L1604.7,558.0 M1587.4,540.4 L1612.2,542.2 M1609.5,524.7 L1597.5,507.3 M1609.5,524.7 L1612.2,542.2 M1609.5,524.7 L1645.9,524.8 M1597.5,507.3 L1581.8,492.3 M1597.5,507.3 L1627.9,499.2 M1581.8,492.3 L1555.2,482.8 M1581.8,492.3 L1616.1,474.9 M1555.2,482.8 L1528.6,477.3 M1555.2,482.8 L1570.9,463.0 M1528.6,477.3 L1501.6,475.9 M1528.6,477.3 L1536.2,455.1 M1501.6,475.9 L1479.7,480.7 M1501.6,475.9 L1500.5,448.7 M1479.7,480.7 L1452.6,491.1 M1479.7,480.7 L1467.5,458.0 M1452.6,491.1 L1441.8,505.8 M1452.6,491.1 L1441.1,468.0 M1452.6,491.1 L1418.6,493.8 M1441.8,505.8 L1431.1,524.3 M1441.8,505.8 L1418.6,493.8 M1431.1,524.3 L1439.0,543.8 M1431.1,524.3 L1406.4,514.7 M1431.1,524.3 L1407.0,531.9 M1439.0,543.8 L1449.7,560.9 M1439.0,543.8 L1411.2,552.5 M1449.7,560.9 L1461.8,575.2 M1449.7,560.9 L1425.0,574.6 M1461.8,575.2 L1490.4,584.4 M1461.8,575.2 L1452.3,598.6 M1461.8,575.2 L1425.0,574.6 M1490.4,584.4 L1517.1,588.8 M1490.4,584.4 L1476.1,604.6 M1517.1,588.8 L1544.5,585.5 M1517.1,588.8 L1508.0,613.2 M1544.5,585.5 L1566.5,580.7 M1544.5,585.5 L1546.5,603.9 M1566.5,580.7 L1589.9,574.4 M1566.5,580.7 L1583.6,594.2 M1589.9,574.4 L1604.7,558.0 M1589.9,574.4 L1626.3,580.1 M1589.9,574.4 L1583.6,594.2 M1604.7,558.0 L1612.2,542.2 M1604.7,558.0 L1634.1,564.4 M1612.2,542.2 L1646.2,546.8 M1463.5,982.0 L1462.1,978.9 M1463.5,982.0 L1468.5,981.9 M1463.5,982.0 L1455.8,981.5 M1463.5,982.0 L1466.7,986.5 M1462.1,978.9 L1461.0,974.7 M1462.1,978.9 L1468.1,977.9 M1462.1,978.9 L1455.8,981.5 M1461.0,974.7 L1467.7,974.0 M1461.0,974.7 L1460.3,969.4 M1461.0,974.7 L1453.9,976.9 M1468.5,981.9 L1468.1,977.9 M1468.5,981.9 L1474.8,981.9 M1468.5,981.9 L1466.7,986.5 M1468.1,977.9 L1467.7,974.0 M1468.1,977.9 L1474.3,977.7 M1467.7,974.0 L1474.0,973.8 M1467.7,974.0 L1469.4,969.3 M1474.8,981.9 L1474.3,977.7 M1474.8,981.9 L1474.7,985.6 M1474.8,981.9 L1481.5,983.1 M1474.3,977.7 L1474.0,973.8 M1474.3,977.7 L1481.4,978.0 M1474.0,973.8 L1480.4,973.9 M1474.0,973.8 L1475.8,969.4 M1480.4,973.9 L1481.4,978.0 M1480.4,973.9 L1486.1,969.9 M1475.8,969.4 L1469.4,969.3 M1475.8,969.4 L1486.1,969.9 M1475.8,969.4 L1474.3,964.3 M1469.4,969.3 L1460.3,969.4 M1469.4,969.3 L1474.3,964.3 M1460.3,969.4 L1454.0,972.6 M1460.3,969.4 L1462.5,964.2 M1460.3,969.4 L1453.5,966.2 M1454.0,972.6 L1453.9,976.9 M1454.0,972.6 L1446.8,971.6 M1453.9,976.9 L1455.8,981.5 M1453.9,976.9 L1445.4,978.9 M1455.8,981.5 L1458.8,986.2 M1455.8,981.5 L1445.4,978.9 M1455.8,981.5 L1450.9,986.6 M1458.8,986.2 L1466.7,986.5 M1458.8,986.2 L1450.9,986.6 M1458.8,986.2 L1459.9,990.7 M1466.7,986.5 L1474.7,985.6 M1466.7,986.5 L1459.9,990.7 M1466.7,986.5 L1472.5,993.1 M1474.7,985.6 L1481.8,988.2 M1481.5,983.1 L1481.4,978.0 M1481.5,983.1 L1481.8,988.2 M1481.5,983.1 L1488.2,983.8 M1481.4,978.0 L1489.5,977.1 M1486.1,969.9 L1489.5,977.1 M1486.1,969.9 L1496.6,968.7 M1486.1,969.9 L1486.7,962.5 M1474.3,964.3 L1462.5,964.2 M1474.3,964.3 L1486.7,962.5 M1474.3,964.3 L1475.3,957.8 M1462.5,964.2 L1453.5,966.2 M1462.5,964.2 L1460.7,957.3 M1453.5,966.2 L1446.8,971.6 M1453.5,966.2 L1445.0,960.0 M1446.8,971.6 L1445.4,978.9 M1446.8,971.6 L1436.4,968.7 M1445.4,978.9 L1434.4,977.9 M1445.4,978.9 L1440.0,985.8 M1450.9,986.6 L1440.0,985.8 M1450.9,986.6 L1450.2,992.5 M1459.9,990.7 L1450.2,992.5 M1459.9,990.7 L1463.2,996.7 M1472.5,993.1 L1481.8,988.2 M1472.5,993.1 L1463.2,996.7 M1472.5,993.1 L1478.2,999.8 M1481.8,988.2 L1488.2,983.8 M1481.8,988.2 L1490.7,993.7 M1488.2,983.8 L1489.5,977.1 M1488.2,983.8 L1498.6,986.4 M1489.5,977.1 L1500.5,977.6 M1496.6,968.7 L1486.7,962.5 M1496.6,968.7 L1500.5,977.6 M1496.6,968.7 L1509.8,966.4 M1486.7,962.5 L1475.3,957.8 M1486.7,962.5 L1498.8,954.9 M1475.3,957.8 L1460.7,957.3 M1475.3,957.8 L1479.4,949.5 M1460.7,957.3 L1445.0,960.0 M1460.7,957.3 L1461.1,948.6 M1445.0,960.0 L1436.4,968.7 M1445.0,960.0 L1444.1,951.3 M1445.0,960.0 L1432.6,956.7 M1436.4,968.7 L1434.4,977.9 M1436.4,968.7 L1423.5,966.1 M1434.4,977.9 L1440.0,985.8 M1434.4,977.9 L1420.7,977.5 M1440.0,985.8 L1450.2,992.5 M1440.0,985.8 L1424.1,990.9 M1450.2,992.5 L1463.2,996.7 M1450.2,992.5 L1440.9,1000.0 M1463.2,996.7 L1478.2,999.8 M1463.2,996.7 L1457.9,1005.1 M1478.2,999.8 L1490.7,993.7 M1478.2,999.8 L1475.4,1007.5 M1478.2,999.8 L1489.6,1005.7 M1490.7,993.7 L1498.6,986.4 M1490.7,993.7 L1503.0,998.9 M1498.6,986.4 L1500.5,977.6 M1498.6,986.4 L1511.8,989.4 M1500.5,977.6 L1514.3,978.2 M1509.8,966.4 L1498.8,954.9 M1509.8,966.4 L1514.3,978.2 M1509.8,966.4 L1527.1,963.9 M1498.8,954.9 L1479.4,949.5 M1498.8,954.9 L1514.5,952.0 M1498.8,954.9 L1500.1,944.1 M1479.4,949.5 L1461.1,948.6 M1479.4,949.5 L1479.8,938.4 M1461.1,948.6 L1444.1,951.3 M1461.1,948.6 L1458.0,938.1 M1444.1,951.3 L1432.6,956.7 M1444.1,951.3 L1437.0,941.6 M1432.6,956.7 L1423.5,966.1 M1432.6,956.7 L1419.5,948.7 M1423.5,966.1 L1420.7,977.5 M1423.5,966.1 L1408.8,960.3 M1420.7,977.5 L1424.1,990.9 M1420.7,977.5 L1403.8,974.0 M1424.1,990.9 L1440.9,1000.0 M1424.1,990.9 L1403.3,987.4 M1424.1,990.9 L1415.7,1003.7 M1440.9,1000.0 L1457.9,1005.1 M1440.9,1000.0 L1435.1,1011.4 M1457.9,1005.1 L1475.4,1007.5 M1457.9,1005.1 L1456.7,1015.8 M1475.4,1007.5 L1489.6,1005.7 M1475.4,1007.5 L1478.4,1017.8 M1489.6,1005.7 L1503.0,998.9 M1489.6,1005.7 L1499.5,1014.6 M1503.0,998.9 L1511.8,989.4 M1503.0,998.9 L1516.0,1006.5 M1511.8,989.4 L1514.3,978.2 M1511.8,989.4 L1527.5,995.1 M1514.3,978.2 L1534.8,980.2 M1527.1,963.9 L1514.5,952.0 M1527.1,963.9 L1534.8,980.2 M1527.1,963.9 L1548.0,953.5 M1514.5,952.0 L1500.1,944.1 M1514.5,952.0 L1529.5,942.4 M1500.1,944.1 L1479.8,938.4 M1500.1,944.1 L1506.7,931.6 M1479.8,938.4 L1458.0,938.1 M1479.8,938.4 L1481.9,924.2 M1458.0,938.1 L1437.0,941.6 M1458.0,938.1 L1455.4,924.9 M1437.0,941.6 L1419.5,948.7 M1437.0,941.6 L1427.9,928.6 M1419.5,948.7 L1408.8,960.3 M1419.5,948.7 L1399.3,933.8 M1408.8,960.3 L1403.8,974.0 M1408.8,960.3 L1388.4,950.7 M1403.8,974.0 L1403.3,987.4 M1403.8,974.0 L1378.8,969.4 M1403.3,987.4 L1384.8,985.0 M1403.3,987.4 L1396.0,999.5 M1415.7,1003.7 L1435.1,1011.4 M1415.7,1003.7 L1396.0,999.5 M1415.7,1003.7 L1405.6,1014.2 M1435.1,1011.4 L1456.7,1015.8 M1435.1,1011.4 L1426.5,1025.6 M1456.7,1015.8 L1478.4,1017.8 M1456.7,1015.8 L1454.5,1029.4 M1478.4,1017.8 L1499.5,1014.6 M1478.4,1017.8 L1479.6,1033.6 M1499.5,1014.6 L1516.0,1006.5 M1499.5,1014.6 L1510.3,1027.0 M1516.0,1006.5 L1527.5,995.1 M1516.0,1006.5 L1531.3,1017.4 M1527.5,995.1 L1534.8,980.2 M1527.5,995.1 L1546.6,1005.0 M1534.8,980.2 L1560.0,990.6 M1534.8,980.2 L1552.0,971.8 M1548.0,953.5 L1529.5,942.4 M1548.0,953.5 L1552.0,971.8 M1548.0,953.5 L1584.8,953.9 M1548.0,953.5 L1549.6,930.2 M1529.5,942.4 L1506.7,931.6 M1529.5,942.4 L1549.6,930.2 M1506.7,931.6 L1481.9,924.2 M1506.7,931.6 L1518.9,915.5 M1481.9,924.2 L1455.4,924.9 M1481.9,924.2 L1487.3,902.7 M1455.4,924.9 L1427.9,928.6 M1455.4,924.9 L1452.6,907.2 M1427.9,928.6 L1399.3,933.8 M1427.9,928.6 L1418.9,911.0 M1399.3,933.8 L1388.4,950.7 M1399.3,933.8 L1389.5,915.2 M1388.4,950.7 L1378.8,969.4 M1378.8,969.4 L1384.8,985.0 M1378.8,969.4 L1357.0,985.4 M1384.8,985.0 L1396.0,999.5 M1384.8,985.0 L1357.0,985.4 M1396.0,999.5 L1405.6,1014.2 M1396.0,999.5 L1368.4,1008.1 M1405.6,1014.2 L1426.5,1025.6 M1405.6,1014.2 L1383.5,1028.5 M1426.5,1025.6 L1454.5,1029.4 M1426.5,1025.6 L1383.5,1028.5 M1426.5,1025.6 L1450.6,1043.1 M1454.5,1029.4 L1479.6,1033.6 M1454.5,1029.4 L1450.6,1043.1 M1479.6,1033.6 L1510.3,1027.0 M1479.6,1033.6 L1450.6,1043.1 M1479.6,1033.6 L1499.5,1053.1 M1510.3,1027.0 L1531.3,1017.4 M1510.3,1027.0 L1529.9,1042.4 M1531.3,1017.4 L1546.6,1005.0 M1531.3,1017.4 L1555.2,1031.1 M1546.6,1005.0 L1560.0,990.6 M1546.6,1005.0 L1575.2,1017.5 M1560.0,990.6 L1591.4,998.4 M1560.0,990.6 L1578.6,978.4 M1552.0,971.8 L1578.6,978.4 M1594.8,788.6 L1588.9,786.8 M1594.8,788.6 L1597.2,785.0 M1594.8,788.6 L1593.6,792.0 M1594.8,788.6 L1599.5,790.9 M1588.9,786.8 L1583.0,785.0 M1588.9,786.8 L1591.2,783.2 M1588.9,786.8 L1586.2,790.7 M1583.0,785.0 L1585.4,781.5 M1583.0,785.0 L1577.5,783.9 M1583.0,785.0 L1579.8,787.7 M1597.2,785.0 L1591.2,783.2 M1597.2,785.0 L1599.4,781.2 M1597.2,785.0 L1603.6,787.2 M1591.2,783.2 L1585.4,781.5 M1591.2,783.2 L1593.6,779.6 M1585.4,781.5 L1587.7,777.9 M1585.4,781.5 L1579.1,779.4 M1599.4,781.2 L1593.6,779.6 M1599.4,781.2 L1605.0,782.4 M1599.4,781.2 L1602.6,777.4 M1593.6,779.6 L1587.7,777.9 M1593.6,779.6 L1596.4,775.5 M1587.7,777.9 L1589.0,774.5 M1587.7,777.9 L1583.2,775.6 M1596.4,775.5 L1589.0,774.5 M1596.4,775.5 L1602.6,777.4 M1596.4,775.5 L1600.8,770.9 M1589.0,774.5 L1583.2,775.6 M1589.0,774.5 L1589.1,769.4 M1583.2,775.6 L1579.1,779.4 M1583.2,775.6 L1578.6,771.0 M1579.1,779.4 L1577.5,783.9 M1579.1,779.4 L1571.8,776.1 M1577.5,783.9 L1579.8,787.7 M1577.5,783.9 L1569.1,782.7 M1579.8,787.7 L1586.2,790.7 M1579.8,787.7 L1571.8,790.5 M1586.2,790.7 L1593.6,792.0 M1586.2,790.7 L1582.6,795.3 M1593.6,792.0 L1599.5,790.9 M1593.6,792.0 L1593.5,796.9 M1599.5,790.9 L1603.6,787.2 M1599.5,790.9 L1603.8,795.4 M1603.6,787.2 L1605.0,782.4 M1603.6,787.2 L1610.7,790.3 M1605.0,782.4 L1602.6,777.4 M1605.0,782.4 L1613.5,783.8 M1602.6,777.4 L1612.5,776.7 M1602.6,777.4 L1600.8,770.9 M1589.1,769.4 L1578.6,771.0 M1589.1,769.4 L1600.8,770.9 M1589.1,769.4 L1587.9,762.6 M1578.6,771.0 L1571.8,776.1 M1578.6,771.0 L1571.7,764.2 M1571.8,776.1 L1569.1,782.7 M1571.8,776.1 L1562.2,772.3 M1569.1,782.7 L1571.8,790.5 M1569.1,782.7 L1558.1,781.0 M1571.8,790.5 L1582.6,795.3 M1571.8,790.5 L1560.4,790.2 M1571.8,790.5 L1568.0,796.7 M1582.6,795.3 L1593.5,796.9 M1582.6,795.3 L1580.2,801.9 M1593.5,796.9 L1603.8,795.4 M1593.5,796.9 L1594.5,803.7 M1603.8,795.4 L1610.7,790.3 M1603.8,795.4 L1610.5,802.1 M1610.7,790.3 L1613.5,783.8 M1610.7,790.3 L1619.9,794.0 M1613.5,783.8 L1612.5,776.7 M1613.5,783.8 L1623.9,785.3 M1612.5,776.7 L1621.7,776.4 M1612.5,776.7 L1612.4,769.9 M1600.8,770.9 L1602.8,764.1 M1600.8,770.9 L1612.4,769.9 M1602.8,764.1 L1587.9,762.6 M1602.8,764.1 L1612.4,769.9 M1602.8,764.1 L1610.6,755.2 M1587.9,762.6 L1571.7,764.2 M1587.9,762.6 L1589.2,754.1 M1571.7,764.2 L1562.2,772.3 M1571.7,764.2 L1571.4,755.7 M1571.7,764.2 L1559.5,760.5 M1562.2,772.3 L1558.1,781.0 M1562.2,772.3 L1549.3,769.2 M1558.1,781.0 L1560.4,790.2 M1558.1,781.0 L1544.6,780.0 M1560.4,790.2 L1568.0,796.7 M1560.4,790.2 L1545.8,793.1 M1568.0,796.7 L1580.2,801.9 M1568.0,796.7 L1559.9,803.3 M1580.2,801.9 L1594.5,803.7 M1580.2,801.9 L1575.8,810.3 M1594.5,803.7 L1610.5,802.1 M1594.5,803.7 L1593.7,812.5 M1610.5,802.1 L1619.9,794.0 M1610.5,802.1 L1610.9,810.6 M1610.5,802.1 L1623.1,806.0 M1619.9,794.0 L1623.9,785.3 M1619.9,794.0 L1632.9,797.2 M1623.9,785.3 L1621.7,776.4 M1623.9,785.3 L1637.2,786.3 M1621.7,776.4 L1612.4,769.9 M1621.7,776.4 L1636.2,773.2 M1612.4,769.9 L1622.7,762.8 M1610.6,755.2 L1589.2,754.1 M1610.6,755.2 L1622.7,762.8 M1610.6,755.2 L1606.2,742.2 M1610.6,755.2 L1630.8,752.9 M1589.2,754.1 L1571.4,755.7 M1589.2,754.1 L1584.1,742.9 M1571.4,755.7 L1559.5,760.5 M1571.4,755.7 L1563.0,745.1 M1559.5,760.5 L1549.3,769.2 M1559.5,760.5 L1545.5,752.3 M1549.3,769.2 L1544.6,780.0 M1549.3,769.2 L1533.3,763.4 M1544.6,780.0 L1545.8,793.1 M1544.6,780.0 L1527.3,776.4 M1545.8,793.1 L1559.9,803.3 M1545.8,793.1 L1528.3,790.3 M1545.8,793.1 L1535.5,801.5 M1559.9,803.3 L1575.8,810.3 M1559.9,803.3 L1551.5,812.7 M1575.8,810.3 L1593.7,812.5 M1575.8,810.3 L1572.7,822.7 M1593.7,812.5 L1610.9,810.6 M1593.7,812.5 L1597.4,823.6 M1610.9,810.6 L1623.1,806.0 M1610.9,810.6 L1619.0,821.0 M1623.1,806.0 L1632.9,797.2 M1623.1,806.0 L1636.1,813.9 M1632.9,797.2 L1637.2,786.3 M1632.9,797.2 L1648.0,803.1 M1637.2,786.3 L1636.2,773.2 M1637.2,786.3 L1653.5,790.0 M1636.2,773.2 L1622.7,762.8 M1636.2,773.2 L1652.5,775.8 M1636.2,773.2 L1645.8,765.0 M1622.7,762.8 L1630.8,752.9 M1606.2,742.2 L1584.1,742.9 M1606.2,742.2 L1600.4,730.2 M1606.2,742.2 L1625.5,737.8 M1584.1,742.9 L1563.0,745.1 M1584.1,742.9 L1572.3,729.0 M1563.0,745.1 L1545.5,752.3 M1563.0,745.1 L1547.0,729.8 M1545.5,752.3 L1533.3,763.4 M1545.5,752.3 L1523.2,739.3 M1533.3,763.4 L1527.3,776.4 M1533.3,763.4 L1511.2,756.1 M1527.3,776.4 L1528.3,790.3 M1527.3,776.4 L1504.3,772.0 M1528.3,790.3 L1535.5,801.5 M1528.3,790.3 L1503.5,789.5 M1535.5,801.5 L1551.5,812.7 M1535.5,801.5 L1511.8,809.0 M1551.5,812.7 L1572.7,822.7 M1551.5,812.7 L1537.5,821.8 M1572.7,822.7 L1597.4,823.6 M1572.7,822.7 L1560.5,831.8 M1572.7,822.7 L1581.2,835.6 M1597.4,823.6 L1619.0,821.0 M1597.4,823.6 L1607.5,837.5 M1619.0,821.0 L1636.1,813.9 M1619.0,821.0 L1633.3,835.7 M1636.1,813.9 L1648.0,803.1 M1636.1,813.9 L1652.2,825.1 M1648.0,803.1 L1653.5,790.0 M1648.0,803.1 L1668.6,812.1 M1653.5,790.0 L1652.5,775.8 M1653.5,790.0 L1677.9,795.4 M1652.5,775.8 L1645.8,765.0 M1652.5,775.8 L1677.1,774.7 M1645.8,765.0 L1630.8,752.9 M1645.8,765.0 L1665.3,760.3 M1630.8,752.9 L1649.4,745.7 M1630.8,752.9 L1625.5,737.8 M1600.4,730.2 L1572.3,729.0 M1600.4,730.2 L1625.5,737.8 M1600.4,730.2 L1594.8,710.5 M1572.3,729.0 L1547.0,729.8 M1572.3,729.0 L1553.4,711.0 M1547.0,729.8 L1523.2,739.3 M1547.0,729.8 L1553.4,711.0 M1547.0,729.8 L1519.2,721.2 M1523.2,739.3 L1511.2,756.1 M1523.2,739.3 L1519.2,721.2 M1511.2,756.1 L1504.3,772.0 M1504.3,772.0 L1503.5,789.5 M1503.5,789.5 L1511.8,809.0 M1503.5,789.5 L1466.6,785.4 M1511.8,809.0 L1537.5,821.8 M1511.8,809.0 L1473.3,811.2 M1511.8,809.0 L1500.7,824.4 M1537.5,821.8 L1560.5,831.8 M1537.5,821.8 L1525.5,838.2 M1560.5,831.8 L1581.2,835.6 M1560.5,831.8 L1554.6,851.2 M1581.2,835.6 L1607.5,837.5 M1581.2,835.6 L1582.6,852.0 M1607.5,837.5 L1633.3,835.7 M1607.5,837.5 L1615.2,854.0 M1633.3,835.7 L1652.2,825.1 M1633.3,835.7 L1666.9,842.3 M1633.3,835.7 L1615.2,854.0 M1652.2,825.1 L1668.6,812.1 M1652.2,825.1 L1666.9,842.3 M1668.6,812.1 L1677.9,795.4 M1668.6,812.1 L1698.3,830.0 M1677.9,795.4 L1677.1,774.7 M1677.9,795.4 L1718.4,806.8 M1677.1,774.7 L1665.3,760.3 M1677.1,774.7 L1704.3,784.9 M1677.1,774.7 L1692.7,756.9 M1665.3,760.3 L1649.4,745.7 M1665.3,760.3 L1692.7,756.9 M1649.4,745.7 L1625.5,737.8 M1649.4,745.7 L1675.7,731.0 M1625.5,737.8 L1639.4,716.5 M1712.8,594.0 L1709.1,590.6 M1712.8,594.0 L1718.0,592.1 M1712.8,594.0 L1709.1,596.5 M1712.8,594.0 L1715.3,597.4 M1709.1,590.6 L1705.3,586.9 M1709.1,590.6 L1714.4,588.6 M1709.1,590.6 L1703.3,593.1 M1705.3,586.9 L1710.8,585.1 M1705.3,586.9 L1701.1,582.3 M1705.3,586.9 L1698.2,588.5 M1718.0,592.1 L1714.4,588.6 M1718.0,592.1 L1723.5,590.2 M1718.0,592.1 L1722.2,596.0 M1714.4,588.6 L1710.8,585.1 M1714.4,588.6 L1719.7,586.6 M1710.8,585.1 L1716.0,583.2 M1710.8,585.1 L1706.5,581.1 M1723.5,590.2 L1719.7,586.6 M1723.5,590.2 L1727.2,593.7 M1723.5,590.2 L1730.8,588.8 M1719.7,586.6 L1716.0,583.2 M1719.7,586.6 L1725.5,584.2 M1716.0,583.2 L1719.6,580.8 M1716.0,583.2 L1713.4,579.8 M1719.6,580.8 L1713.4,579.8 M1719.6,580.8 L1725.5,584.2 M1719.6,580.8 L1721.4,575.7 M1713.4,579.8 L1706.5,581.1 M1713.4,579.8 L1710.7,574.6 M1706.5,581.1 L1701.1,582.3 M1706.5,581.1 L1699.8,576.9 M1701.1,582.3 L1699.8,576.9 M1701.1,582.3 L1691.7,583.2 M1698.2,588.5 L1703.3,593.1 M1698.2,588.5 L1691.7,583.2 M1698.2,588.5 L1689.9,591.7 M1703.3,593.1 L1709.1,596.5 M1703.3,593.1 L1697.8,597.4 M1709.1,596.5 L1715.3,597.4 M1709.1,596.5 L1707.3,601.3 M1715.3,597.4 L1722.2,596.0 M1715.3,597.4 L1718.0,602.5 M1722.2,596.0 L1727.2,593.7 M1722.2,596.0 L1728.2,600.3 M1727.2,593.7 L1736.3,595.1 M1730.8,588.8 L1725.5,584.2 M1730.8,588.8 L1736.3,595.1 M1730.8,588.8 L1739.1,585.6 M1725.5,584.2 L1730.8,579.9 M1730.8,579.9 L1721.4,575.7 M1730.8,579.9 L1739.1,585.6 M1730.8,579.9 L1736.1,573.9 M1721.4,575.7 L1710.7,574.6 M1721.4,575.7 L1723.3,569.0 M1710.7,574.6 L1699.8,576.9 M1710.7,574.6 L1709.1,567.8 M1699.8,576.9 L1695.8,570.5 M1699.8,576.9 L1686.6,575.9 M1691.7,583.2 L1686.6,575.9 M1691.7,583.2 L1680.7,585.9 M1689.9,591.7 L1697.8,597.4 M1689.9,591.7 L1680.7,585.9 M1689.9,591.7 L1681.2,596.4 M1697.8,597.4 L1707.3,601.3 M1697.8,597.4 L1691.9,603.4 M1707.3,601.3 L1718.0,602.5 M1707.3,601.3 L1705.5,608.0 M1718.0,602.5 L1728.2,600.3 M1718.0,602.5 L1719.9,609.4 M1728.2,600.3 L1736.3,595.1 M1728.2,600.3 L1733.6,606.9 M1736.3,595.1 L1745.4,601.9 M1736.3,595.1 L1748.4,591.4 M1739.1,585.6 L1748.4,591.4 M1739.1,585.6 L1747.6,580.6 M1736.1,573.9 L1723.3,569.0 M1736.1,573.9 L1747.6,580.6 M1736.1,573.9 L1740.5,565.9 M1723.3,569.0 L1709.1,567.8 M1723.3,569.0 L1723.8,560.7 M1709.1,567.8 L1695.8,570.5 M1709.1,567.8 L1705.9,559.4 M1695.8,570.5 L1686.6,575.9 M1695.8,570.5 L1689.3,562.6 M1686.6,575.9 L1676.8,569.4 M1686.6,575.9 L1672.5,579.1 M1680.7,585.9 L1672.5,579.1 M1680.7,585.9 L1670.7,590.1 M1681.2,596.4 L1691.9,603.4 M1681.2,596.4 L1670.7,590.1 M1681.2,596.4 L1672.2,600.7 M1691.9,603.4 L1705.5,608.0 M1691.9,603.4 L1684.7,612.0 M1705.5,608.0 L1719.9,609.4 M1705.5,608.0 L1704.5,616.8 M1719.9,609.4 L1733.6,606.9 M1719.9,609.4 L1722.7,617.7 M1733.6,606.9 L1745.4,601.9 M1733.6,606.9 L1739.5,614.5 M1745.4,601.9 L1752.7,607.8 M1745.4,601.9 L1757.5,598.1 M1748.4,591.4 L1757.5,598.1 M1748.4,591.4 L1758.2,586.6 M1747.6,580.6 L1758.2,586.6 M1747.6,580.6 L1756.3,574.2 M1740.5,565.9 L1723.8,560.7 M1740.5,565.9 L1756.3,574.2 M1740.5,565.9 L1743.3,555.1 M1723.8,560.7 L1705.9,559.4 M1723.8,560.7 L1722.6,549.6 M1705.9,559.4 L1689.3,562.6 M1705.9,559.4 L1700.7,549.3 M1689.3,562.6 L1676.8,569.4 M1689.3,562.6 L1680.6,553.3 M1676.8,569.4 L1672.5,579.1 M1676.8,569.4 L1664.1,561.0 M1672.5,579.1 L1670.7,590.1 M1672.5,579.1 L1654.7,573.1 M1670.7,590.1 L1672.2,600.7 M1670.7,590.1 L1650.5,586.7 M1672.2,600.7 L1684.7,612.0 M1672.2,600.7 L1650.6,602.9 M1684.7,612.0 L1704.5,616.8 M1684.7,612.0 L1669.3,615.9 M1684.7,612.0 L1685.3,623.0 M1704.5,616.8 L1722.7,617.7 M1704.5,616.8 L1705.9,628.1 M1722.7,617.7 L1739.5,614.5 M1722.7,617.7 L1727.4,628.3 M1739.5,614.5 L1752.7,607.8 M1739.5,614.5 L1748.2,624.1 M1752.7,607.8 L1757.5,598.1 M1752.7,607.8 L1765.2,615.7 M1757.5,598.1 L1758.2,586.6 M1757.5,598.1 L1779.1,603.1 M1758.2,586.6 L1756.3,574.2 M1758.2,586.6 L1778.2,587.2 M1756.3,574.2 L1761.3,563.5 M1756.3,574.2 L1772.8,572.9 M1761.3,563.5 L1743.3,555.1 M1761.3,563.5 L1772.8,572.9 M1761.3,563.5 L1774.2,550.2 M1743.3,555.1 L1722.6,549.6 M1743.3,555.1 L1750.1,540.8 M1722.6,549.6 L1700.7,549.3 M1722.6,549.6 L1721.8,531.9 M1700.7,549.3 L1680.6,553.3 M1700.7,549.3 L1692.9,534.9 M1680.6,553.3 L1664.1,561.0 M1680.6,553.3 L1668.1,540.2 M1664.1,561.0 L1654.7,573.1 M1664.1,561.0 L1646.2,546.8 M1654.7,573.1 L1650.5,586.7 M1654.7,573.1 L1634.1,564.4 M1650.5,586.7 L1650.6,602.9 M1650.5,586.7 L1626.3,580.1 M1650.6,602.9 L1669.3,615.9 M1650.6,602.9 L1624.8,597.4 M1650.6,602.9 L1629.6,615.1 M1669.3,615.9 L1685.3,623.0 M1669.3,615.9 L1656.1,628.0 M1685.3,623.0 L1705.9,628.1 M1685.3,623.0 L1680.3,636.7 M1705.9,628.1 L1727.4,628.3 M1705.9,628.1 L1704.6,642.8 M1727.4,628.3 L1748.2,624.1 M1727.4,628.3 L1731.6,643.1 M1748.2,624.1 L1765.2,615.7 M1748.2,624.1 L1759.7,637.8 M1765.2,615.7 L1779.1,603.1 M1765.2,615.7 L1780.3,627.3 M1779.1,603.1 L1778.2,587.2 M1779.1,603.1 L1794.7,613.4 M1779.1,603.1 L1802.6,600.8 M1778.2,587.2 L1772.8,572.9 M1778.2,587.2 L1805.7,584.7 M1772.8,572.9 L1797.8,564.0 M1774.2,550.2 L1750.1,540.8 M1774.2,550.2 L1797.8,564.0 M1774.2,550.2 L1792.9,529.6 M1750.1,540.8 L1721.8,531.9 M1750.1,540.8 L1763.6,520.4 M1721.8,531.9 L1692.9,534.9 M1721.8,531.9 L1730.6,511.2 M1721.8,531.9 L1708.4,515.6 M1692.9,534.9 L1668.1,540.2 M1692.9,534.9 L1676.5,516.3 M1668.1,540.2 L1646.2,546.8 M1668.1,540.2 L1645.9,524.8 M1646.2,546.8 L1634.1,564.4 M1646.2,546.8 L1645.9,524.8 M1634.1,564.4 L1626.3,580.1 M1626.3,580.1 L1624.8,597.4 M1624.8,597.4 L1629.6,615.1 M1624.8,597.4 L1583.6,594.2 M1629.6,615.1 L1656.1,628.0 M1629.6,615.1 L1591.3,619.3 M1629.6,615.1 L1613.6,632.6 M1656.1,628.0 L1680.3,636.7 M1656.1,628.0 L1640.8,646.7 M1680.3,636.7 L1704.6,642.8 M1680.3,636.7 L1671.5,654.5 M1704.6,642.8 L1731.6,643.1 M1704.6,642.8 L1697.3,662.8 M1731.6,643.1 L1759.7,637.8 M1731.6,643.1 L1735.0,665.5 M1759.7,637.8 L1780.3,627.3 M1759.7,637.8 L1781.2,656.5 M1780.3,627.3 L1794.7,613.4 M1780.3,627.3 L1806.4,642.9 M1794.7,613.4 L1802.6,600.8 M1794.7,613.4 L1821.1,622.9 M1802.6,600.8 L1805.7,584.7 M1802.6,600.8 L1835.9,604.8 M1805.7,584.7 L1797.8,564.0 M1805.7,584.7 L1835.9,604.8 M1805.7,584.7 L1825.5,571.2 M1797.8,564.0 L1821.2,541.2 M1797.8,564.0 L1825.5,571.2 M1010.8,152.6 L998.5,172.1 M1042.6,161.9 L1074.4,171.2 M1042.6,161.9 L1030.3,181.4 M1074.4,171.2 L1106.2,180.5 M1074.4,171.2 L1062.1,190.7 M1106.2,180.5 L1138.0,189.8 M1106.2,180.5 L1093.9,199.9 M1138.0,189.8 L1169.8,199.1 M1138.0,189.8 L1125.7,209.2 M1169.8,199.1 L1201.6,208.3 M1169.8,199.1 L1157.5,218.5 M1201.6,208.3 L1233.4,217.6 M1201.6,208.3 L1189.3,227.8 M1233.4,217.6 L1265.2,226.9 M1233.4,217.6 L1221.1,237.1 M1265.2,226.9 L1297.0,236.2 M1265.2,226.9 L1252.9,246.4 M1297.0,236.2 L1328.8,245.5 M1297.0,236.2 L1284.7,255.6 M1328.8,245.5 L1360.6,254.8 M1328.8,245.5 L1316.5,264.9 M1360.6,254.8 L1392.4,264.0 M1360.6,254.8 L1348.3,274.2 M1392.4,264.0 L1424.2,273.3 M1392.4,264.0 L1380.1,283.5 M1424.2,273.3 L1456.0,282.6 M1424.2,273.3 L1411.9,292.8 M1456.0,282.6 L1487.8,291.9 M1456.0,282.6 L1443.7,302.1 M1487.8,291.9 L1519.6,301.2 M1487.8,291.9 L1475.5,311.3 M1519.6,301.2 L1551.4,310.4 M1519.6,301.2 L1507.3,320.6 M1551.4,310.4 L1583.2,319.7 M1551.4,310.4 L1539.1,329.9 M1583.2,319.7 L1615.0,329.0 M1583.2,319.7 L1570.9,339.2 M1615.0,329.0 L1646.8,338.3 M1615.0,329.0 L1602.7,348.5 M1646.8,338.3 L1678.6,347.6 M1646.8,338.3 L1634.5,357.8 M1678.6,347.6 L1710.4,356.9 M1678.6,347.6 L1666.3,367.0 M1710.4,356.9 L1742.2,366.1 M1710.4,356.9 L1698.1,376.3 M1742.2,366.1 L1774.0,375.4 M1742.2,366.1 L1729.9,385.6 M1774.0,375.4 L1805.8,384.7 M1774.0,375.4 L1761.7,394.9 M1805.8,384.7 L1837.6,394.0 M1805.8,384.7 L1794.5,404.0 M1837.6,394.0 L1855.5,406.7 M1837.6,394.0 L1833.1,411.7 M1855.5,406.7 L1873.4,419.3 M1855.5,406.7 L1833.1,411.7 M1873.4,419.3 L1888.0,433.9 M1873.4,419.3 L1833.1,411.7 M1873.4,419.3 L1848.5,441.8 M1888.0,433.9 L1902.5,448.4 M1888.0,433.9 L1878.1,453.9 M1902.5,448.4 L1917.5,470.8 M1902.5,448.4 L1878.1,453.9 M1917.5,470.8 L1931.0,497.0 M1917.5,470.8 L1888.1,475.1 M1931.0,497.0 L1888.5,502.2 M1935.5,513.5 L1904.4,525.7 M1940.0,530.0 L1904.4,525.7 M1940.0,550.0 L1896.6,555.6 M1940.0,570.0 L1901.1,582.4 M1932.7,591.3 L1901.1,582.4 M1925.3,612.6 L1915.2,628.5 M1925.3,612.6 L1886.4,608.0 M1915.2,628.5 L1905.2,644.3 M1915.2,628.5 L1884.9,631.4 M1905.2,644.3 L1892.9,663.8 M1905.2,644.3 L1884.9,631.4 M1892.9,663.8 L1880.6,683.2 M1892.9,663.8 L1872.5,648.7 M1892.9,663.8 L1856.9,672.3 M1880.6,683.2 L1868.2,702.7 M1880.6,683.2 L1856.9,672.3 M1868.2,702.7 L1855.9,722.1 M1868.2,702.7 L1838.5,692.0 M1855.9,722.1 L1843.6,741.6 M1855.9,722.1 L1834.1,712.7 M1843.6,741.6 L1831.3,761.1 M1843.6,741.6 L1810.7,726.0 M1831.3,761.1 L1819.0,780.5 M1831.3,761.1 L1792.3,747.3 M1819.0,780.5 L1806.6,800.0 M1819.0,780.5 L1781.7,770.5 M1806.6,800.0 L1794.3,819.4 M1806.6,800.0 L1766.0,786.5 M1794.3,819.4 L1782.0,838.9 M1794.3,819.4 L1758.9,808.3 M1782.0,838.9 L1769.7,858.4 M1782.0,838.9 L1758.7,825.2 M1782.0,838.9 L1738.2,831.8 M1769.7,858.4 L1757.4,877.8 M1769.7,858.4 L1739.4,857.0 M1757.4,877.8 L1745.0,897.3 M1757.4,877.8 L1721.7,884.2 M1757.4,877.8 L1739.4,857.0 M1745.0,897.3 L1732.7,916.7 M1745.0,897.3 L1721.7,884.2 M1732.7,916.7 L1720.4,936.2 M1732.7,916.7 L1692.1,903.2 M1720.4,936.2 L1708.1,955.7 M1720.4,936.2 L1686.1,928.8 M1708.1,955.7 L1695.8,975.1 M1708.1,955.7 L1678.3,961.0 M1708.1,955.7 L1686.1,928.8 M1695.8,975.1 L1683.4,994.6 M1695.8,975.1 L1678.3,961.0 M1683.4,994.6 L1671.1,1014.0 M1683.4,994.6 L1654.1,974.9 M1671.1,1014.0 L1658.8,1033.5 M1671.1,1014.0 L1629.5,994.3 M1671.1,1014.0 L1639.7,1022.6 M1658.8,1033.5 L1649.4,1049.6 M1658.8,1033.5 L1639.7,1022.6 M1649.4,1049.6 L1640.0,1065.7 M1649.4,1049.6 L1610.7,1035.0 M1640.0,1065.7 L1625.9,1080.3 M1640.0,1065.7 L1606.8,1060.6 M1625.9,1080.3 L1611.7,1095.0 M1625.9,1080.3 L1606.8,1060.6 M1611.7,1095.0 L1594.2,1107.1 M1611.7,1095.0 L1579.7,1076.2 M1594.2,1107.1 L1576.7,1119.3 M1594.2,1107.1 L1555.1,1090.5 M1576.7,1119.3 L1546.7,1135.0 M1576.7,1119.3 L1540.3,1116.2 M1546.7,1135.0 L1525.8,1143.5 M1546.7,1135.0 L1540.3,1116.2 M1525.8,1143.5 L1490.6,1124.6 M1525.8,1143.5 L1540.3,1116.2 M1294.9,1157.8 L1297.2,1135.5 M1262.9,1148.5 L1265.3,1126.1 M1230.8,1139.1 L1198.7,1129.7 M1230.8,1139.1 L1233.5,1116.8 M1198.7,1129.7 L1166.6,1120.4 M1198.7,1129.7 L1201.6,1107.5 M1166.6,1120.4 L1134.5,1111.0 M1166.6,1120.4 L1169.7,1098.2 M1134.5,1111.0 L1102.5,1101.7 M1134.5,1111.0 L1137.8,1088.9 M1102.5,1101.7 L1070.4,1092.3 M1102.5,1101.7 L1106.0,1079.6 M1070.4,1092.3 L1038.3,1082.9 M1070.4,1092.3 L1074.1,1070.3 M1038.3,1082.9 L1006.2,1073.6 M1038.3,1082.9 L1042.2,1061.0 M1006.2,1073.6 L974.1,1064.2 M1006.2,1073.6 L1010.2,1051.7 M974.1,1064.2 L938.5,1053.8 M974.1,1064.2 L977.4,1042.1 M938.5,1053.8 L901.1,1042.9 M938.5,1053.8 L942.1,1031.8 M901.1,1042.9 L863.7,1031.9 M901.1,1042.9 L905.6,1021.1 M863.7,1031.9 L826.2,1021.0 M863.7,1031.9 L869.0,1010.4 M826.2,1021.0 L788.8,1010.1 M826.2,1021.0 L832.3,999.7 M788.8,1010.1 L751.4,999.2 M788.8,1010.1 L795.7,989.0 M751.4,999.2 L714.0,988.2 M751.4,999.2 L759.0,978.3 M714.0,988.2 L676.5,977.3 M714.0,988.2 L722.3,967.6 M676.5,977.3 L639.1,966.4 M676.5,977.3 L685.7,956.9 M639.1,966.4 L601.7,955.5 M639.1,966.4 L649.0,946.2 M601.7,955.5 L564.3,944.5 M601.7,955.5 L612.4,935.5 M564.3,944.5 L526.8,933.6 M564.3,944.5 L575.8,924.9 M526.8,933.6 L493.5,923.9 M526.8,933.6 L540.2,914.4 M493.5,923.9 L461.4,914.5 M493.5,923.9 L507.0,904.8 M461.4,914.5 L429.3,905.1 M461.4,914.5 L475.0,895.4 M429.3,905.1 L397.2,895.8 M429.3,905.1 L443.1,886.1 M397.2,895.8 L365.2,886.4 M397.2,895.8 L411.2,876.8 M365.2,886.4 L333.1,877.1 M365.2,886.4 L379.3,867.5 M333.1,877.1 L301.0,867.7 M333.1,877.1 L347.5,858.2 M301.0,867.7 L268.9,858.3 M301.0,867.7 L315.6,848.9 M268.9,858.3 L236.8,849.0 M268.9,858.3 L283.7,839.6 M236.8,849.0 L204.8,839.6 M236.8,849.0 L251.8,830.3 M204.8,839.6 L172.7,830.2 M204.8,839.6 L220.0,821.0 M172.7,830.2 L140.6,820.9 M172.7,830.2 L188.1,811.7 M140.6,820.9 L108.5,811.5 M140.6,820.9 L156.2,802.4 M108.5,811.5 L76.4,802.1 M108.5,811.5 L124.3,793.1 M76.4,802.1 L44.4,792.8 M76.4,802.1 L92.5,783.7 M44.4,792.8 L12.3,783.4 M44.4,792.8 L60.6,774.4 M12.3,783.4 L-19.8,774.0 M12.3,783.4 L28.7,765.1 M-26.6,541.5 L5.2,550.8 M5.2,550.8 L37.0,560.0 M5.2,550.8 L-13.6,568.4 M37.0,560.0 L68.8,569.3 M37.0,560.0 L17.7,577.7 M68.8,569.3 L100.6,578.6 M68.8,569.3 L48.2,587.3 M100.6,578.6 L132.4,587.9 M100.6,578.6 L82.5,598.0 M132.4,587.9 L144.7,568.4 M132.4,587.9 L82.5,598.0 M132.4,587.9 L147.7,622.0 M132.4,587.9 L174.7,603.3 M144.7,568.4 L157.0,549.0 M144.7,568.4 L193.3,580.1 M157.0,549.0 L169.4,529.5 M157.0,549.0 L203.6,551.4 M169.4,529.5 L181.7,510.1 M169.4,529.5 L203.6,551.4 M181.7,510.1 L194.0,490.6 M181.7,510.1 L224.5,526.4 M194.0,490.6 L206.3,471.1 M194.0,490.6 L235.7,502.2 M206.3,471.1 L218.6,451.7 M206.3,471.1 L245.6,479.1 M218.6,451.7 L231.0,432.2 M218.6,451.7 L258.9,455.9 M231.0,432.2 L243.3,412.8 M231.0,432.2 L258.9,455.9 M231.0,432.2 L277.7,412.5 M243.3,412.8 L255.6,393.3 M243.3,412.8 L277.7,412.5 M255.6,393.3 L267.9,373.8 M255.6,393.3 L277.7,412.5 M267.9,373.8 L280.2,354.4 M267.9,373.8 L277.7,412.5 M267.9,373.8 L324.3,372.6 M280.2,354.4 L292.6,334.9 M280.2,354.4 L324.3,372.6 M292.6,334.9 L304.9,315.5 M292.6,334.9 L339.8,340.4 M304.9,315.5 L317.2,296.0 M304.9,315.5 L339.8,340.4 M317.2,296.0 L329.5,276.5 M317.2,296.0 L364.3,315.1 M329.5,276.5 L341.8,257.1 M329.5,276.5 L378.2,289.9 M341.8,257.1 L354.2,237.6 M341.8,257.1 L388.8,265.3 M354.2,237.6 L366.5,218.2 M354.2,237.6 L395.9,239.0 M366.5,218.2 L378.8,198.7 M366.5,218.2 L395.9,239.0 M378.8,198.7 L347.0,189.4 M378.8,198.7 L395.0,182.5 M378.8,198.7 L416.1,218.8 M347.0,189.4 L315.2,180.1 M347.0,189.4 L360.0,169.7 M315.2,180.1 L283.4,170.9 M315.2,180.1 L327.6,160.1 M283.4,170.9 L251.6,161.6 M283.4,170.9 L295.7,151.2 M-13.6,568.4 L17.7,577.7 M-19.1,612.9 L12.3,622.1 M-0.7,595.3 L17.7,577.7 M-0.7,595.3 L29.7,604.6 M17.7,577.7 L48.2,587.3 M-24.6,657.4 L7.2,666.6 M-6.0,639.7 L12.3,622.1 M-6.0,639.7 L25.4,648.9 M12.3,622.1 L29.7,604.6 M12.3,622.1 L42.4,631.1 M29.7,604.6 L48.2,587.3 M29.7,604.6 L59.2,614.0 M48.2,587.3 L82.5,598.0 M327.6,160.1 L360.0,169.7 M-30.2,701.8 L1.6,711.1 M-11.5,684.2 L7.2,666.6 M-11.5,684.2 L20.3,693.5 M7.2,666.6 L25.4,648.9 M7.2,666.6 L38.7,675.8 M25.4,648.9 L42.4,631.1 M25.4,648.9 L55.9,657.7 M42.4,631.1 L59.2,614.0 M42.4,631.1 L70.9,639.5 M59.2,614.0 L82.5,598.0 M59.2,614.0 L89.3,623.7 M82.5,598.0 L89.3,623.7 M360.0,169.7 L372.9,150.4 M360.0,169.7 L395.0,182.5 M-17.0,728.8 L1.6,711.1 M-17.0,728.8 L14.9,738.0 M1.6,711.1 L20.3,693.5 M1.6,711.1 L33.4,720.4 M20.3,693.5 L38.7,675.8 M20.3,693.5 L52.0,702.8 M38.7,675.8 L55.9,657.7 M38.7,675.8 L70.0,684.8 M55.9,657.7 L70.9,639.5 M55.9,657.7 L85.5,665.7 M70.9,639.5 L89.3,623.7 M70.9,639.5 L95.4,644.9 M89.3,623.7 L95.4,644.9 M89.3,623.7 L147.7,622.0 M-3.2,755.8 L14.9,738.0 M-3.2,755.8 L28.7,765.1 M14.9,738.0 L33.4,720.4 M14.9,738.0 L46.7,747.3 M33.4,720.4 L52.0,702.8 M33.4,720.4 L65.2,729.7 M52.0,702.8 L70.0,684.8 M52.0,702.8 L83.8,712.0 M70.0,684.8 L85.5,665.7 M70.0,684.8 L101.8,693.7 M85.5,665.7 L95.4,644.9 M85.5,665.7 L118.7,673.5 M95.4,644.9 L135.9,650.9 M28.7,765.1 L46.7,747.3 M28.7,765.1 L60.6,774.4 M46.7,747.3 L65.2,729.7 M46.7,747.3 L78.5,756.6 M65.2,729.7 L83.8,712.0 M65.2,729.7 L97.0,739.0 M83.8,712.0 L101.8,693.7 M83.8,712.0 L115.7,721.3 M101.8,693.7 L118.7,673.5 M101.8,693.7 L134.2,703.1 M118.7,673.5 L153.7,683.6 M118.7,673.5 L135.9,650.9 M60.6,774.4 L78.5,756.6 M60.6,774.4 L92.5,783.7 M78.5,756.6 L97.0,739.0 M78.5,756.6 L110.3,765.9 M97.0,739.0 L115.7,721.3 M97.0,739.0 L128.8,748.3 M115.7,721.3 L134.2,703.1 M115.7,721.3 L147.5,730.6 M134.2,703.1 L153.7,683.6 M134.2,703.1 L165.7,712.4 M153.7,683.6 L180.8,691.4 M153.7,683.6 L182.2,666.5 M92.5,783.7 L110.3,765.9 M92.5,783.7 L124.3,793.1 M110.3,765.9 L128.8,748.3 M110.3,765.9 L142.1,775.2 M128.8,748.3 L147.5,730.6 M128.8,748.3 L160.6,757.5 M147.5,730.6 L165.7,712.4 M147.5,730.6 L179.4,739.9 M165.7,712.4 L180.8,691.4 M165.7,712.4 L198.4,721.9 M180.8,691.4 L217.6,701.2 M180.8,691.4 L182.2,666.5 M570.3,145.9 L562.5,177.6 M124.3,793.1 L142.1,775.2 M124.3,793.1 L156.2,802.4 M142.1,775.2 L160.6,757.5 M142.1,775.2 L173.9,784.5 M160.6,757.5 L179.4,739.9 M160.6,757.5 L192.5,766.8 M179.4,739.9 L198.4,721.9 M179.4,739.9 L211.3,749.2 M198.4,721.9 L217.6,701.2 M198.4,721.9 L231.1,731.4 M217.6,701.2 L254.0,711.2 M217.6,701.2 L235.2,675.5 M595.1,153.5 L562.5,177.6 M156.2,802.4 L173.9,784.5 M156.2,802.4 L188.1,811.7 M173.9,784.5 L192.5,766.8 M173.9,784.5 L205.7,793.8 M192.5,766.8 L211.3,749.2 M192.5,766.8 L224.3,776.1 M211.3,749.2 L231.1,731.4 M211.3,749.2 L243.1,758.5 M231.1,731.4 L254.0,711.2 M231.1,731.4 L263.2,740.8 M254.0,711.2 L287.1,722.0 M254.0,711.2 L280.1,683.6 M626.0,163.9 L656.9,173.1 M626.0,163.9 L597.0,195.0 M188.1,811.7 L205.7,793.8 M188.1,811.7 L220.0,821.0 M205.7,793.8 L224.3,776.1 M205.7,793.8 L237.5,803.0 M224.3,776.1 L243.1,758.5 M224.3,776.1 L256.1,785.4 M243.1,758.5 L263.2,740.8 M243.1,758.5 L274.9,767.8 M263.2,740.8 L287.1,722.0 M263.2,740.8 L294.2,749.8 M287.1,722.0 L312.4,729.3 M287.1,722.0 L315.7,703.1 M656.9,173.1 L674.5,148.0 M656.9,173.1 L687.8,181.9 M656.9,173.1 L629.6,205.0 M220.0,821.0 L237.5,803.0 M220.0,821.0 L251.8,830.3 M237.5,803.0 L256.1,785.4 M237.5,803.0 L269.3,812.3 M256.1,785.4 L274.9,767.8 M256.1,785.4 L287.9,794.7 M274.9,767.8 L294.2,749.8 M274.9,767.8 L306.6,777.0 M294.2,749.8 L312.4,729.3 M294.2,749.8 L325.8,758.9 M312.4,729.3 L343.9,737.5 M312.4,729.3 L315.7,703.1 M687.8,181.9 L706.0,157.2 M687.8,181.9 L719.6,190.3 M687.8,181.9 L661.7,213.2 M251.8,830.3 L269.3,812.3 M251.8,830.3 L283.7,839.6 M269.3,812.3 L287.9,794.7 M269.3,812.3 L301.1,821.6 M287.9,794.7 L306.6,777.0 M287.9,794.7 L319.7,804.0 M306.6,777.0 L325.8,758.9 M306.6,777.0 L338.4,786.3 M325.8,758.9 L343.9,737.5 M325.8,758.9 L357.2,767.9 M343.9,737.5 L374.8,745.8 M343.9,737.5 L354.8,709.8 M719.6,190.3 L737.7,166.3 M719.6,190.3 L752.6,199.1 M719.6,190.3 L695.1,220.4 M737.7,166.3 L769.6,175.5 M283.7,839.6 L301.1,821.6 M283.7,839.6 L315.6,848.9 M301.1,821.6 L319.7,804.0 M301.1,821.6 L332.9,830.9 M319.7,804.0 L338.4,786.3 M319.7,804.0 L351.4,813.2 M338.4,786.3 L357.2,767.9 M338.4,786.3 L370.1,795.5 M357.2,767.9 L374.8,745.8 M357.2,767.9 L388.7,776.9 M374.8,745.8 L406.3,754.2 M374.8,745.8 L387.0,718.0 M752.6,199.1 L769.6,175.5 M752.6,199.1 L786.4,208.6 M752.6,199.1 L730.7,228.5 M769.6,175.5 L782.9,155.4 M769.6,175.5 L801.8,184.8 M315.6,848.9 L332.9,830.9 M315.6,848.9 L347.5,858.2 M332.9,830.9 L351.4,813.2 M332.9,830.9 L364.7,840.2 M351.4,813.2 L370.1,795.5 M351.4,813.2 L383.2,822.5 M370.1,795.5 L388.7,776.9 M370.1,795.5 L401.9,804.8 M388.7,776.9 L406.3,754.2 M388.7,776.9 L420.4,785.5 M406.3,754.2 L439.3,758.9 M406.3,754.2 L423.0,728.5 M786.4,208.6 L801.8,184.8 M786.4,208.6 L820.7,219.0 M786.4,208.6 L768.2,239.0 M801.8,184.8 L814.8,164.6 M801.8,184.8 L834.1,194.2 M814.8,164.6 L846.6,173.9 M347.5,858.2 L364.7,840.2 M347.5,858.2 L379.3,867.5 M364.7,840.2 L383.2,822.5 M364.7,840.2 L396.6,849.5 M383.2,822.5 L401.9,804.8 M383.2,822.5 L415.0,831.8 M401.9,804.8 L420.4,785.5 M401.9,804.8 L433.6,814.1 M420.4,785.5 L439.3,758.9 M420.4,785.5 L451.8,795.3 M439.3,758.9 L468.6,772.2 M439.3,758.9 L423.0,728.5 M439.3,758.9 L480.4,744.8 M820.7,219.0 L834.1,194.2 M820.7,219.0 L857.5,227.2 M820.7,219.0 L805.1,253.5 M834.1,194.2 L846.6,173.9 M834.1,194.2 L866.6,203.5 M846.6,173.9 L859.0,154.4 M846.6,173.9 L878.5,183.2 M379.3,867.5 L396.6,849.5 M379.3,867.5 L411.2,876.8 M396.6,849.5 L415.0,831.8 M396.6,849.5 L428.4,858.8 M415.0,831.8 L433.6,814.1 M415.0,831.8 L446.8,841.1 M433.6,814.1 L451.8,795.3 M433.6,814.1 L465.4,823.4 M451.8,795.3 L468.6,772.2 M451.8,795.3 L483.7,804.8 M468.6,772.2 L502.5,783.0 M468.6,772.2 L480.4,744.8 M857.5,227.2 L866.6,203.5 M857.5,227.2 L883.3,235.1 M857.5,227.2 L864.5,254.2 M866.6,203.5 L878.5,183.2 M866.6,203.5 L897.7,212.6 M878.5,183.2 L890.8,163.7 M878.5,183.2 L910.3,192.5 M890.8,163.7 L922.6,173.0 M411.2,876.8 L428.4,858.8 M411.2,876.8 L443.1,886.1 M428.4,858.8 L446.8,841.1 M428.4,858.8 L460.2,868.0 M446.8,841.1 L465.4,823.4 M446.8,841.1 L478.6,850.4 M465.4,823.4 L483.7,804.8 M465.4,823.4 L497.2,832.7 M483.7,804.8 L502.5,783.0 M483.7,804.8 L515.8,814.4 M502.5,783.0 L537.0,793.7 M502.5,783.0 L524.8,757.5 M883.3,235.1 L897.7,212.6 M883.3,235.1 L913.1,249.3 M883.3,235.1 L864.5,254.2 M897.7,212.6 L910.3,192.5 M897.7,212.6 L929.4,222.5 M910.3,192.5 L922.6,173.0 M910.3,192.5 L942.1,201.8 M922.6,173.0 L934.9,153.5 M922.6,173.0 L954.4,182.3 M443.1,886.1 L460.2,868.0 M443.1,886.1 L475.0,895.4 M460.2,868.0 L478.6,850.4 M460.2,868.0 L492.0,877.3 M478.6,850.4 L497.2,832.7 M478.6,850.4 L510.5,859.7 M497.2,832.7 L515.8,814.4 M497.2,832.7 L529.1,842.0 M515.8,814.4 L537.0,793.7 M515.8,814.4 L547.9,823.6 M537.0,793.7 L570.5,801.5 M537.0,793.7 L568.3,772.9 M913.1,249.3 L929.4,222.5 M913.1,249.3 L949.4,255.3 M913.1,249.3 L864.5,254.2 M913.1,249.3 L933.2,286.0 M929.4,222.5 L942.1,201.8 M929.4,222.5 L961.8,231.2 M942.1,201.8 L954.4,182.3 M942.1,201.8 L973.9,211.1 M954.4,182.3 L966.7,162.8 M954.4,182.3 L986.2,191.6 M966.7,162.8 L998.5,172.1 M475.0,895.4 L492.0,877.3 M475.0,895.4 L507.0,904.8 M492.0,877.3 L510.5,859.7 M492.0,877.3 L523.9,886.7 M510.5,859.7 L529.1,842.0 M510.5,859.7 L542.4,869.0 M529.1,842.0 L547.9,823.6 M529.1,842.0 L561.0,851.4 M547.9,823.6 L570.5,801.5 M547.9,823.6 L579.3,833.7 M570.5,801.5 L597.3,815.1 M570.5,801.5 L568.3,772.9 M570.5,801.5 L610.3,796.9 M949.4,255.3 L961.8,231.2 M949.4,255.3 L986.4,262.8 M949.4,255.3 L933.2,286.0 M961.8,231.2 L973.9,211.1 M961.8,231.2 L994.2,240.2 M973.9,211.1 L986.2,191.6 M973.9,211.1 L1005.7,220.3 M986.2,191.6 L998.5,172.1 M986.2,191.6 L1018.0,200.8 M998.5,172.1 L1030.3,181.4 M507.0,904.8 L523.9,886.7 M507.0,904.8 L540.2,914.4 M523.9,886.7 L542.4,869.0 M523.9,886.7 L556.8,896.2 M542.4,869.0 L561.0,851.4 M542.4,869.0 L575.1,878.5 M561.0,851.4 L579.3,833.7 M561.0,851.4 L593.5,860.9 M579.3,833.7 L597.3,815.1 M579.3,833.7 L612.1,843.1 M597.3,815.1 L632.0,823.4 M597.3,815.1 L610.3,796.9 M986.4,262.8 L994.2,240.2 M986.4,262.8 L1011.7,270.3 M986.4,262.8 L992.1,290.1 M994.2,240.2 L1005.7,220.3 M994.2,240.2 L1025.1,249.3 M1005.7,220.3 L1018.0,200.8 M1005.7,220.3 L1037.5,229.6 M1018.0,200.8 L1030.3,181.4 M1018.0,200.8 L1049.8,210.1 M1030.3,181.4 L1062.1,190.7 M540.2,914.4 L556.8,896.2 M540.2,914.4 L575.8,924.9 M556.8,896.2 L575.1,878.5 M556.8,896.2 L591.8,906.5 M575.1,878.5 L593.5,860.9 M575.1,878.5 L609.7,888.6 M593.5,860.9 L612.1,843.1 M593.5,860.9 L627.8,870.9 M612.1,843.1 L632.0,823.4 M612.1,843.1 L646.2,853.2 M632.0,823.4 L666.9,835.1 M632.0,823.4 L656.7,797.6 M1011.7,270.3 L1025.1,249.3 M1011.7,270.3 L1040.6,282.5 M1011.7,270.3 L992.1,290.1 M1025.1,249.3 L1037.5,229.6 M1025.1,249.3 L1056.5,258.9 M1037.5,229.6 L1049.8,210.1 M1037.5,229.6 L1069.2,238.9 M1049.8,210.1 L1062.1,190.7 M1049.8,210.1 L1081.6,219.4 M1062.1,190.7 L1093.9,199.9 M575.8,924.9 L591.8,906.5 M575.8,924.9 L612.4,935.5 M591.8,906.5 L609.7,888.6 M591.8,906.5 L627.8,917.0 M609.7,888.6 L627.8,870.9 M609.7,888.6 L645.1,899.0 M627.8,870.9 L646.2,853.2 M627.8,870.9 L662.7,881.0 M646.2,853.2 L666.9,835.1 M646.2,853.2 L680.0,862.9 M666.9,835.1 L694.9,843.2 M666.9,835.1 L697.1,819.0 M1040.6,282.5 L1056.5,258.9 M1040.6,282.5 L1075.0,289.1 M1040.6,282.5 L992.1,290.1 M1040.6,282.5 L1061.2,308.2 M1056.5,258.9 L1069.2,238.9 M1056.5,258.9 L1088.6,267.9 M1069.2,238.9 L1081.6,219.4 M1069.2,238.9 L1101.0,248.1 M1081.6,219.4 L1093.9,199.9 M1081.6,219.4 L1113.4,228.7 M1093.9,199.9 L1125.7,209.2 M612.4,935.5 L627.8,917.0 M612.4,935.5 L649.0,946.2 M627.8,917.0 L645.1,899.0 M627.8,917.0 L663.8,927.5 M645.1,899.0 L662.7,881.0 M645.1,899.0 L680.6,909.3 M662.7,881.0 L680.0,862.9 M662.7,881.0 L697.7,891.2 M680.0,862.9 L694.9,843.2 M680.0,862.9 L715.1,873.0 M694.9,843.2 L732.8,853.0 M694.9,843.2 L697.1,819.0 M1075.0,289.1 L1088.6,267.9 M1075.0,289.1 L1104.7,302.1 M1075.0,289.1 L1061.2,308.2 M1088.6,267.9 L1101.0,248.1 M1088.6,267.9 L1120.2,277.7 M1101.0,248.1 L1113.4,228.7 M1101.0,248.1 L1132.8,257.5 M1113.4,228.7 L1125.7,209.2 M1113.4,228.7 L1145.2,238.0 M1125.7,209.2 L1157.5,218.5 M649.0,946.2 L663.8,927.5 M649.0,946.2 L685.7,956.9 M663.8,927.5 L680.6,909.3 M663.8,927.5 L699.8,938.0 M680.6,909.3 L697.7,891.2 M680.6,909.3 L716.1,919.7 M697.7,891.2 L715.1,873.0 M697.7,891.2 L732.7,901.4 M715.1,873.0 L732.8,853.0 M715.1,873.0 L750.0,883.0 M732.8,853.0 L769.2,863.2 M732.8,853.0 L749.7,826.9 M1104.7,302.1 L1120.2,277.7 M1104.7,302.1 L1138.9,309.0 M1104.7,302.1 L1120.6,331.2 M1104.7,302.1 L1061.2,308.2 M1120.2,277.7 L1132.8,257.5 M1120.2,277.7 L1152.4,286.8 M1132.8,257.5 L1145.2,238.0 M1132.8,257.5 L1164.7,266.8 M1145.2,238.0 L1157.5,218.5 M1145.2,238.0 L1177.0,247.3 M1157.5,218.5 L1189.3,227.8 M685.7,956.9 L699.8,938.0 M685.7,956.9 L722.3,967.6 M699.8,938.0 L716.1,919.7 M699.8,938.0 L735.9,948.5 M716.1,919.7 L732.7,901.4 M716.1,919.7 L751.6,930.1 M732.7,901.4 L750.0,883.0 M732.7,901.4 L767.7,911.6 M750.0,883.0 L769.2,863.2 M750.0,883.0 L784.7,892.4 M769.2,863.2 L804.0,868.6 M769.2,863.2 L791.4,842.6 M1138.9,309.0 L1152.4,286.8 M1138.9,309.0 L1172.6,319.3 M1138.9,309.0 L1120.6,331.2 M1152.4,286.8 L1164.7,266.8 M1152.4,286.8 L1184.4,296.4 M1164.7,266.8 L1177.0,247.3 M1164.7,266.8 L1196.5,276.1 M1177.0,247.3 L1189.3,227.8 M1177.0,247.3 L1208.8,256.5 M1189.3,227.8 L1221.1,237.1 M722.3,967.6 L735.9,948.5 M722.3,967.6 L759.0,978.3 M735.9,948.5 L751.6,930.1 M735.9,948.5 L771.9,959.1 M751.6,930.1 L767.7,911.6 M751.6,930.1 L787.1,940.4 M767.7,911.6 L784.7,892.4 M767.7,911.6 L802.7,921.9 M784.7,892.4 L804.0,868.6 M784.7,892.4 L818.8,902.8 M804.0,868.6 L834.4,881.2 M804.0,868.6 L842.1,855.7 M804.0,868.6 L791.4,842.6 M1172.6,319.3 L1184.4,296.4 M1172.6,319.3 L1203.0,332.2 M1172.6,319.3 L1162.1,343.5 M1184.4,296.4 L1196.5,276.1 M1184.4,296.4 L1216.1,306.3 M1196.5,276.1 L1208.8,256.5 M1196.5,276.1 L1228.3,285.4 M1208.8,256.5 L1221.1,237.1 M1208.8,256.5 L1240.6,265.8 M1221.1,237.1 L1252.9,246.4 M759.0,978.3 L771.9,959.1 M759.0,978.3 L795.7,989.0 M771.9,959.1 L787.1,940.4 M771.9,959.1 L808.0,969.6 M787.1,940.4 L802.7,921.9 M787.1,940.4 L822.6,950.8 M802.7,921.9 L818.8,902.8 M802.7,921.9 L837.7,932.1 M818.8,902.8 L834.4,881.2 M818.8,902.8 L853.7,913.4 M834.4,881.2 L870.6,893.1 M834.4,881.2 L842.1,855.7 M1203.0,332.2 L1216.1,306.3 M1203.0,332.2 L1236.5,338.1 M1203.0,332.2 L1222.3,357.1 M1203.0,332.2 L1162.1,343.5 M1216.1,306.3 L1228.3,285.4 M1216.1,306.3 L1248.2,315.2 M1228.3,285.4 L1240.6,265.8 M1228.3,285.4 L1260.1,294.7 M1240.6,265.8 L1252.9,246.4 M1240.6,265.8 L1272.4,275.1 M1252.9,246.4 L1284.7,255.6 M795.7,989.0 L808.0,969.6 M795.7,989.0 L832.3,999.7 M808.0,969.6 L822.6,950.8 M808.0,969.6 L844.0,980.1 M822.6,950.8 L837.7,932.1 M822.6,950.8 L858.1,961.2 M837.7,932.1 L853.7,913.4 M837.7,932.1 L872.8,942.4 M853.7,913.4 L870.6,893.1 M853.7,913.4 L888.5,923.9 M870.6,893.1 L906.5,905.2 M870.6,893.1 L887.8,866.6 M1236.5,338.1 L1248.2,315.2 M1236.5,338.1 L1268.7,348.5 M1236.5,338.1 L1222.3,357.1 M1248.2,315.2 L1260.1,294.7 M1248.2,315.2 L1279.9,324.5 M1260.1,294.7 L1272.4,275.1 M1260.1,294.7 L1291.9,304.0 M1272.4,275.1 L1284.7,255.6 M1272.4,275.1 L1304.2,284.4 M1284.7,255.6 L1316.5,264.9 M832.3,999.7 L844.0,980.1 M832.3,999.7 L869.0,1010.4 M844.0,980.1 L858.1,961.2 M844.0,980.1 L880.1,990.6 M858.1,961.2 L872.8,942.4 M858.1,961.2 L893.7,971.5 M872.8,942.4 L888.5,923.9 M872.8,942.4 L907.7,952.6 M888.5,923.9 L906.5,905.2 M888.5,923.9 L923.0,934.1 M906.5,905.2 L940.8,915.1 M906.5,905.2 L925.0,882.9 M1268.7,348.5 L1279.9,324.5 M1268.7,348.5 L1301.0,356.2 M1268.7,348.5 L1256.8,377.5 M1279.9,324.5 L1291.9,304.0 M1279.9,324.5 L1311.6,333.5 M1291.9,304.0 L1304.2,284.4 M1291.9,304.0 L1323.7,313.2 M1304.2,284.4 L1316.5,264.9 M1304.2,284.4 L1336.0,293.7 M1316.5,264.9 L1348.3,274.2 M869.0,1010.4 L880.1,990.6 M869.0,1010.4 L905.6,1021.1 M880.1,990.6 L893.7,971.5 M880.1,990.6 L916.1,1001.2 M893.7,971.5 L907.7,952.6 M893.7,971.5 L929.2,981.9 M907.7,952.6 L923.0,934.1 M907.7,952.6 L942.7,962.9 M923.0,934.1 L940.8,915.1 M923.0,934.1 L957.2,944.5 M940.8,915.1 L973.7,925.5 M940.8,915.1 L958.8,892.2 M1301.0,356.2 L1311.6,333.5 M1301.0,356.2 L1325.9,362.9 M1301.0,356.2 L1297.8,380.4 M1311.6,333.5 L1323.7,313.2 M1311.6,333.5 L1342.4,342.3 M1323.7,313.2 L1336.0,293.7 M1323.7,313.2 L1355.4,322.5 M1336.0,293.7 L1348.3,274.2 M1336.0,293.7 L1367.8,303.0 M1348.3,274.2 L1380.1,283.5 M905.6,1021.1 L916.1,1001.2 M905.6,1021.1 L942.1,1031.8 M916.1,1001.2 L929.2,981.9 M916.1,1001.2 L952.1,1011.6 M929.2,981.9 L942.7,962.9 M929.2,981.9 L964.6,992.2 M942.7,962.9 L957.2,944.5 M942.7,962.9 L977.6,973.1 M957.2,944.5 L973.7,925.5 M957.2,944.5 L991.4,954.5 M973.7,925.5 L1007.2,935.1 M973.7,925.5 L990.5,901.9 M1325.9,362.9 L1342.4,342.3 M1325.9,362.9 L1357.7,372.7 M1325.9,362.9 L1297.8,380.4 M1342.4,342.3 L1355.4,322.5 M1342.4,342.3 L1374.1,351.4 M1355.4,322.5 L1367.8,303.0 M1355.4,322.5 L1387.2,331.7 M1367.8,303.0 L1380.1,283.5 M1367.8,303.0 L1399.6,312.2 M1380.1,283.5 L1411.9,292.8 M942.1,1031.8 L952.1,1011.6 M942.1,1031.8 L977.4,1042.1 M952.1,1011.6 L964.6,992.2 M952.1,1011.6 L987.1,1021.9 M964.6,992.2 L977.6,973.1 M964.6,992.2 L999.2,1002.3 M977.6,973.1 L991.4,954.5 M977.6,973.1 L1011.7,983.1 M991.4,954.5 L1007.2,935.1 M991.4,954.5 L1025.1,964.2 M1007.2,935.1 L1041.6,944.6 M1007.2,935.1 L1024.0,911.7 M1357.7,372.7 L1374.1,351.4 M1357.7,372.7 L1390.5,383.1 M1357.7,372.7 L1335.1,396.3 M1374.1,351.4 L1387.2,331.7 M1374.1,351.4 L1405.8,360.7 M1387.2,331.7 L1399.6,312.2 M1387.2,331.7 L1418.9,341.0 M1399.6,312.2 L1411.9,292.8 M1399.6,312.2 L1431.4,321.5 M1411.9,292.8 L1443.7,302.1 M977.4,1042.1 L987.1,1021.9 M977.4,1042.1 L1010.2,1051.7 M987.1,1021.9 L999.2,1002.3 M987.1,1021.9 L1019.9,1031.4 M999.2,1002.3 L1011.7,983.1 M999.2,1002.3 L1031.9,1011.9 M1011.7,983.1 L1025.1,964.2 M1011.7,983.1 L1044.2,992.5 M1025.1,964.2 L1041.6,944.6 M1025.1,964.2 L1057.3,973.0 M1041.6,944.6 L1074.4,952.3 M1041.6,944.6 L1060.4,921.1 M1390.5,383.1 L1405.8,360.7 M1390.5,383.1 L1423.8,391.5 M1390.5,383.1 L1372.8,413.2 M1405.8,360.7 L1418.9,341.0 M1405.8,360.7 L1437.8,369.8 M1418.9,341.0 L1431.4,321.5 M1418.9,341.0 L1450.7,350.2 M1431.4,321.5 L1443.7,302.1 M1431.4,321.5 L1463.2,330.8 M1443.7,302.1 L1475.5,311.3 M1010.2,1051.7 L1019.9,1031.4 M1010.2,1051.7 L1042.2,1061.0 M1019.9,1031.4 L1031.9,1011.9 M1019.9,1031.4 L1051.8,1040.8 M1031.9,1011.9 L1044.2,992.5 M1031.9,1011.9 L1063.8,1021.2 M1044.2,992.5 L1057.3,973.0 M1044.2,992.5 L1076.1,1001.7 M1057.3,973.0 L1074.4,952.3 M1057.3,973.0 L1088.7,982.0 M1074.4,952.3 L1103.9,961.6 M1074.4,952.3 L1100.2,927.1 M1423.8,391.5 L1437.8,369.8 M1423.8,391.5 L1456.8,401.1 M1423.8,391.5 L1409.0,418.6 M1437.8,369.8 L1450.7,350.2 M1437.8,369.8 L1469.7,379.1 M1450.7,350.2 L1463.2,330.8 M1450.7,350.2 L1482.5,359.5 M1463.2,330.8 L1475.5,311.3 M1463.2,330.8 L1495.0,340.1 M1475.5,311.3 L1507.3,320.6 M1042.2,1061.0 L1051.8,1040.8 M1042.2,1061.0 L1074.1,1070.3 M1051.8,1040.8 L1063.8,1021.2 M1051.8,1040.8 L1083.6,1050.0 M1063.8,1021.2 L1076.1,1001.7 M1063.8,1021.2 L1095.6,1030.5 M1076.1,1001.7 L1088.7,982.0 M1076.1,1001.7 L1107.8,1010.9 M1088.7,982.0 L1103.9,961.6 M1088.7,982.0 L1120.3,991.0 M1103.9,961.6 L1134.8,970.7 M1103.9,961.6 L1123.1,940.7 M1456.8,401.1 L1469.7,379.1 M1456.8,401.1 L1488.4,408.9 M1456.8,401.1 L1447.5,431.6 M1469.7,379.1 L1482.5,359.5 M1469.7,379.1 L1501.5,388.2 M1482.5,359.5 L1495.0,340.1 M1482.5,359.5 L1514.3,368.8 M1495.0,340.1 L1507.3,320.6 M1495.0,340.1 L1526.8,349.4 M1507.3,320.6 L1539.1,329.9 M1074.1,1070.3 L1083.6,1050.0 M1074.1,1070.3 L1106.0,1079.6 M1083.6,1050.0 L1095.6,1030.5 M1083.6,1050.0 L1115.4,1059.3 M1095.6,1030.5 L1107.8,1010.9 M1095.6,1030.5 L1127.4,1039.7 M1107.8,1010.9 L1120.3,991.0 M1107.8,1010.9 L1139.6,1020.2 M1120.3,991.0 L1134.8,970.7 M1120.3,991.0 L1152.0,1000.4 M1134.8,970.7 L1166.7,981.2 M1134.8,970.7 L1154.1,950.9 M1488.4,408.9 L1501.5,388.2 M1488.4,408.9 L1518.2,419.8 M1488.4,408.9 L1479.0,430.6 M1501.5,388.2 L1514.3,368.8 M1501.5,388.2 L1533.1,397.8 M1514.3,368.8 L1526.8,349.4 M1514.3,368.8 L1546.1,378.1 M1526.8,349.4 L1539.1,329.9 M1526.8,349.4 L1558.6,358.7 M1539.1,329.9 L1570.9,339.2 M1106.0,1079.6 L1115.4,1059.3 M1106.0,1079.6 L1137.8,1088.9 M1115.4,1059.3 L1127.4,1039.7 M1115.4,1059.3 L1147.2,1068.6 M1127.4,1039.7 L1139.6,1020.2 M1127.4,1039.7 L1159.2,1049.0 M1139.6,1020.2 L1152.0,1000.4 M1139.6,1020.2 L1171.3,1029.5 M1152.0,1000.4 L1166.7,981.2 M1152.0,1000.4 L1182.8,1009.7 M1166.7,981.2 L1192.2,988.5 M1166.7,981.2 L1191.5,964.8 M1518.2,419.8 L1533.1,397.8 M1518.2,419.8 L1550.4,429.0 M1518.2,419.8 L1500.5,448.7 M1533.1,397.8 L1546.1,378.1 M1533.1,397.8 L1565.0,407.2 M1546.1,378.1 L1558.6,358.7 M1546.1,378.1 L1578.0,387.4 M1558.6,358.7 L1570.9,339.2 M1558.6,358.7 L1590.4,367.9 M1570.9,339.2 L1602.7,348.5 M1137.8,1088.9 L1147.2,1068.6 M1137.8,1088.9 L1169.7,1098.2 M1147.2,1068.6 L1159.2,1049.0 M1147.2,1068.6 L1179.0,1077.9 M1159.2,1049.0 L1171.3,1029.5 M1159.2,1049.0 L1191.0,1058.3 M1171.3,1029.5 L1182.8,1009.7 M1171.3,1029.5 L1203.1,1038.8 M1182.8,1009.7 L1192.2,988.5 M1182.8,1009.7 L1215.0,1018.8 M1192.2,988.5 L1228.5,994.2 M1192.2,988.5 L1191.5,964.8 M1550.4,429.0 L1565.0,407.2 M1550.4,429.0 L1583.5,438.0 M1550.4,429.0 L1536.2,455.1 M1565.0,407.2 L1578.0,387.4 M1565.0,407.2 L1597.0,416.5 M1578.0,387.4 L1590.4,367.9 M1578.0,387.4 L1609.8,396.7 M1590.4,367.9 L1602.7,348.5 M1590.4,367.9 L1622.2,377.2 M1602.7,348.5 L1634.5,357.8 M1169.7,1098.2 L1179.0,1077.9 M1169.7,1098.2 L1201.6,1107.5 M1179.0,1077.9 L1191.0,1058.3 M1179.0,1077.9 L1210.9,1087.2 M1191.0,1058.3 L1203.1,1038.8 M1191.0,1058.3 L1222.7,1067.6 M1203.1,1038.8 L1215.0,1018.8 M1203.1,1038.8 L1234.8,1048.3 M1215.0,1018.8 L1228.5,994.2 M1215.0,1018.8 L1246.2,1029.5 M1228.5,994.2 L1258.6,1010.7 M1583.5,438.0 L1597.0,416.5 M1583.5,438.0 L1618.1,447.7 M1583.5,438.0 L1570.9,463.0 M1597.0,416.5 L1609.8,396.7 M1597.0,416.5 L1629.4,425.9 M1609.8,396.7 L1622.2,377.2 M1609.8,396.7 L1641.6,406.0 M1622.2,377.2 L1634.5,357.8 M1622.2,377.2 L1654.0,386.5 M1634.5,357.8 L1666.3,367.0 M1201.6,1107.5 L1210.9,1087.2 M1201.6,1107.5 L1233.5,1116.8 M1210.9,1087.2 L1222.7,1067.6 M1210.9,1087.2 L1242.7,1096.5 M1222.7,1067.6 L1234.8,1048.3 M1222.7,1067.6 L1254.5,1076.9 M1234.8,1048.3 L1246.2,1029.5 M1234.8,1048.3 L1266.5,1057.8 M1246.2,1029.5 L1258.6,1010.7 M1246.2,1029.5 L1277.8,1039.8 M1258.6,1010.7 L1290.0,1023.4 M1258.6,1010.7 L1275.3,992.8 M1618.1,447.7 L1629.4,425.9 M1618.1,447.7 L1644.3,455.2 M1618.1,447.7 L1616.1,474.9 M1629.4,425.9 L1641.6,406.0 M1629.4,425.9 L1660.6,434.9 M1641.6,406.0 L1654.0,386.5 M1641.6,406.0 L1673.4,415.3 M1654.0,386.5 L1666.3,367.0 M1654.0,386.5 L1685.8,395.8 M1666.3,367.0 L1698.1,376.3 M1233.5,1116.8 L1242.7,1096.5 M1233.5,1116.8 L1265.3,1126.1 M1242.7,1096.5 L1254.5,1076.9 M1242.7,1096.5 L1274.5,1105.8 M1254.5,1076.9 L1266.5,1057.8 M1254.5,1076.9 L1286.3,1086.2 M1266.5,1057.8 L1277.8,1039.8 M1266.5,1057.8 L1298.3,1067.2 M1277.8,1039.8 L1290.0,1023.4 M1277.8,1039.8 L1309.6,1049.4 M1290.0,1023.4 L1322.1,1033.5 M1290.0,1023.4 L1306.0,1007.1 M1644.3,455.2 L1660.6,434.9 M1644.3,455.2 L1678.5,465.4 M1644.3,455.2 L1616.1,474.9 M1660.6,434.9 L1673.4,415.3 M1660.6,434.9 L1692.8,444.2 M1673.4,415.3 L1685.8,395.8 M1673.4,415.3 L1705.3,424.5 M1685.8,395.8 L1698.1,376.3 M1685.8,395.8 L1717.6,405.1 M1698.1,376.3 L1729.9,385.6 M1265.3,1126.1 L1274.5,1105.8 M1265.3,1126.1 L1297.2,1135.5 M1274.5,1105.8 L1286.3,1086.2 M1274.5,1105.8 L1306.3,1115.0 M1286.3,1086.2 L1298.3,1067.2 M1286.3,1086.2 L1318.1,1095.5 M1298.3,1067.2 L1309.6,1049.4 M1298.3,1067.2 L1330.2,1076.5 M1309.6,1049.4 L1322.1,1033.5 M1309.6,1049.4 L1341.8,1058.9 M1322.1,1033.5 L1354.2,1046.2 M1322.1,1033.5 L1339.5,1014.9 M1678.5,465.4 L1692.8,444.2 M1678.5,465.4 L1713.3,474.4 M1678.5,465.4 L1659.6,491.0 M1692.8,444.2 L1705.3,424.5 M1692.8,444.2 L1725.0,453.3 M1705.3,424.5 L1717.6,405.1 M1705.3,424.5 L1737.1,433.8 M1717.6,405.1 L1729.9,385.6 M1717.6,405.1 L1749.4,414.4 M1729.9,385.6 L1761.7,394.9 M1297.2,1135.5 L1306.3,1115.0 M1297.2,1135.5 L1329.1,1144.8 M1306.3,1115.0 L1318.1,1095.5 M1306.3,1115.0 L1338.1,1124.3 M1318.1,1095.5 L1330.2,1076.5 M1318.1,1095.5 L1350.0,1104.8 M1330.2,1076.5 L1341.8,1058.9 M1330.2,1076.5 L1362.3,1085.3 M1341.8,1058.9 L1354.2,1046.2 M1341.8,1058.9 L1375.3,1065.2 M1354.2,1046.2 L1375.3,1065.2 M1354.2,1046.2 L1383.5,1028.5 M1713.3,474.4 L1725.0,453.3 M1713.3,474.4 L1745.6,484.3 M1713.3,474.4 L1702.9,498.6 M1725.0,453.3 L1737.1,433.8 M1725.0,453.3 L1757.0,462.7 M1737.1,433.8 L1749.4,414.4 M1737.1,433.8 L1768.9,443.1 M1749.4,414.4 L1761.7,394.9 M1749.4,414.4 L1781.3,423.6 M1761.7,394.9 L1794.5,404.0 M1329.1,1144.8 L1338.1,1124.3 M1338.1,1124.3 L1350.0,1104.8 M1338.1,1124.3 L1369.9,1133.6 M1350.0,1104.8 L1362.3,1085.3 M1350.0,1104.8 L1381.8,1114.1 M1362.3,1085.3 L1375.3,1065.2 M1362.3,1085.3 L1394.1,1094.7 M1375.3,1065.2 L1405.8,1075.4 M1375.3,1065.2 L1412.2,1059.0 M1745.6,484.3 L1757.0,462.7 M1745.6,484.3 L1777.1,493.8 M1745.6,484.3 L1730.6,511.2 M1757.0,462.7 L1768.9,443.1 M1757.0,462.7 L1788.7,472.0 M1768.9,443.1 L1781.3,423.6 M1768.9,443.1 L1800.8,452.3 M1781.3,423.6 L1794.5,404.0 M1781.3,423.6 L1814.4,432.6 M1794.5,404.0 L1833.1,411.7 M1361.1,1154.1 L1369.9,1133.6 M1369.9,1133.6 L1381.8,1114.1 M1369.9,1133.6 L1401.8,1143.1 M1381.8,1114.1 L1394.1,1094.7 M1381.8,1114.1 L1413.6,1123.3 M1394.1,1094.7 L1405.8,1075.4 M1394.1,1094.7 L1426.0,1103.3 M1405.8,1075.4 L1438.1,1080.2 M1405.8,1075.4 L1412.2,1059.0 M1777.1,493.8 L1788.7,472.0 M1777.1,493.8 L1808.2,503.1 M1777.1,493.8 L1763.6,520.4 M1788.7,472.0 L1800.8,452.3 M1788.7,472.0 L1820.5,481.3 M1800.8,452.3 L1814.4,432.6 M1800.8,452.3 L1832.9,461.6 M1814.4,432.6 L1833.1,411.7 M1814.4,432.6 L1848.5,441.8 M1401.8,1143.1 L1413.6,1123.3 M1413.6,1123.3 L1426.0,1103.3 M1413.6,1123.3 L1445.2,1132.9 M1426.0,1103.3 L1438.1,1080.2 M1426.0,1103.3 L1457.8,1113.1 M1438.1,1080.2 L1468.6,1091.1 M1438.1,1080.2 L1412.2,1059.0 M1438.1,1080.2 L1473.6,1067.5 M1808.2,503.1 L1820.5,481.3 M1808.2,503.1 L1838.9,513.2 M1808.2,503.1 L1792.9,529.6 M1820.5,481.3 L1832.9,461.6 M1820.5,481.3 L1852.6,491.1 M1832.9,461.6 L1848.5,441.8 M1832.9,461.6 L1863.5,470.6 M1848.5,441.8 L1878.1,453.9 M1433.1,1153.4 L1445.2,1132.9 M1445.2,1132.9 L1457.8,1113.1 M1445.2,1132.9 L1475.5,1142.9 M1457.8,1113.1 L1468.6,1091.1 M1457.8,1113.1 L1490.6,1124.6 M1468.6,1091.1 L1503.0,1100.8 M1468.6,1091.1 L1473.6,1067.5 M1838.9,513.2 L1852.6,491.1 M1838.9,513.2 L1870.3,523.5 M1838.9,513.2 L1821.2,541.2 M1852.6,491.1 L1863.5,470.6 M1852.6,491.1 L1888.5,502.2 M1863.5,470.6 L1878.1,453.9 M1863.5,470.6 L1888.1,475.1 M1878.1,453.9 L1888.1,475.1 M1475.5,1142.9 L1490.6,1124.6 M1490.6,1124.6 L1503.0,1100.8 M1503.0,1100.8 L1540.3,1116.2 M1503.0,1100.8 L1514.3,1072.9 M1870.3,523.5 L1888.5,502.2 M1870.3,523.5 L1904.4,525.7 M1870.3,523.5 L1852.4,555.7 M1888.5,502.2 L1888.1,475.1 M1888.5,502.2 L1904.4,525.7 M1540.3,1116.2 L1555.1,1090.5 M1904.4,525.7 L1896.6,555.6 M395.0,182.5 L410.0,163.1 M395.0,182.5 L434.1,199.7 M410.0,163.1 L452.6,178.2 M135.9,650.9 L147.7,622.0 M135.9,650.9 L182.2,666.5 M147.7,622.0 L174.7,603.3 M147.7,622.0 L204.1,639.6 M174.7,603.3 L193.3,580.1 M174.7,603.3 L224.3,617.4 M193.3,580.1 L203.6,551.4 M193.3,580.1 L242.9,593.4 M203.6,551.4 L224.5,526.4 M203.6,551.4 L257.6,567.4 M224.5,526.4 L235.7,502.2 M224.5,526.4 L270.2,541.4 M235.7,502.2 L245.6,479.1 M235.7,502.2 L278.9,516.2 M245.6,479.1 L258.9,455.9 M245.6,479.1 L287.1,492.7 M258.9,455.9 L297.9,470.7 M258.9,455.9 L311.2,450.1 M277.7,412.5 L311.2,450.1 M277.7,412.5 L349.4,408.2 M324.3,372.6 L339.8,340.4 M324.3,372.6 L349.4,408.2 M324.3,372.6 L372.1,385.4 M339.8,340.4 L364.3,315.1 M339.8,340.4 L391.4,358.8 M364.3,315.1 L378.2,289.9 M364.3,315.1 L407.8,331.6 M378.2,289.9 L388.8,265.3 M378.2,289.9 L419.1,304.9 M388.8,265.3 L395.9,239.0 M388.8,265.3 L429.8,279.7 M395.9,239.0 L416.1,218.8 M395.9,239.0 L445.3,259.7 M416.1,218.8 L434.1,199.7 M416.1,218.8 L453.8,237.5 M434.1,199.7 L452.6,178.2 M434.1,199.7 L472.1,217.2 M452.6,178.2 L468.0,149.1 M452.6,178.2 L493.8,195.3 M182.2,666.5 L204.1,639.6 M182.2,666.5 L235.2,675.5 M204.1,639.6 L224.3,617.4 M204.1,639.6 L259.8,653.9 M224.3,617.4 L242.9,593.4 M224.3,617.4 L271.3,630.5 M242.9,593.4 L257.6,567.4 M242.9,593.4 L287.9,606.7 M257.6,567.4 L270.2,541.4 M257.6,567.4 L301.4,581.9 M270.2,541.4 L278.9,516.2 M270.2,541.4 L311.7,556.8 M278.9,516.2 L287.1,492.7 M278.9,516.2 L320.0,531.9 M287.1,492.7 L297.9,470.7 M287.1,492.7 L328.9,508.5 M297.9,470.7 L311.2,450.1 M297.9,470.7 L340.3,486.4 M311.2,450.1 L354.7,465.6 M311.2,450.1 L367.0,442.1 M349.4,408.2 L372.1,385.4 M349.4,408.2 L367.0,442.1 M349.4,408.2 L393.7,422.5 M372.1,385.4 L391.4,358.8 M372.1,385.4 L414.2,399.4 M391.4,358.8 L407.8,331.6 M391.4,358.8 L431.1,373.9 M407.8,331.6 L419.1,304.9 M407.8,331.6 L444.5,346.9 M419.1,304.9 L429.8,279.7 M419.1,304.9 L454.9,320.0 M429.8,279.7 L445.3,259.7 M429.8,279.7 L465.9,292.0 M445.3,259.7 L453.8,237.5 M445.3,259.7 L465.9,292.0 M445.3,259.7 L487.2,256.8 M453.8,237.5 L472.1,217.2 M453.8,237.5 L487.2,256.8 M472.1,217.2 L493.8,195.3 M472.1,217.2 L509.9,233.7 M493.8,195.3 L516.7,167.6 M493.8,195.3 L533.6,210.1 M516.7,167.6 L562.5,177.6 M235.2,675.5 L259.8,653.9 M235.2,675.5 L280.1,683.6 M259.8,653.9 L271.3,630.5 M259.8,653.9 L280.1,683.6 M259.8,653.9 L309.1,645.6 M271.3,630.5 L287.9,606.7 M271.3,630.5 L309.1,645.6 M287.9,606.7 L301.4,581.9 M287.9,606.7 L327.1,620.4 M301.4,581.9 L311.7,556.8 M301.4,581.9 L339.7,596.6 M311.7,556.8 L320.0,531.9 M311.7,556.8 L350.7,572.4 M320.0,531.9 L328.9,508.5 M320.0,531.9 L361.0,547.8 M328.9,508.5 L340.3,486.4 M328.9,508.5 L371.9,523.6 M340.3,486.4 L354.7,465.6 M340.3,486.4 L384.4,500.2 M354.7,465.6 L367.0,442.1 M354.7,465.6 L399.3,478.4 M367.0,442.1 L393.7,422.5 M367.0,442.1 L415.7,456.1 M393.7,422.5 L414.2,399.4 M393.7,422.5 L436.3,435.0 M414.2,399.4 L431.1,373.9 M414.2,399.4 L454.2,411.3 M431.1,373.9 L444.5,346.9 M431.1,373.9 L466.6,386.9 M444.5,346.9 L454.9,320.0 M444.5,346.9 L477.7,361.0 M454.9,320.0 L465.9,292.0 M454.9,320.0 L487.6,334.9 M465.9,292.0 L497.6,310.1 M465.9,292.0 L505.5,286.8 M487.2,256.8 L509.9,233.7 M487.2,256.8 L505.5,286.8 M487.2,256.8 L526.2,268.0 M509.9,233.7 L533.6,210.1 M509.9,233.7 L548.1,246.6 M533.6,210.1 L562.5,177.6 M533.6,210.1 L570.9,223.2 M562.5,177.6 L597.0,195.0 M280.1,683.6 L315.7,703.1 M280.1,683.6 L327.9,673.8 M309.1,645.6 L327.1,620.4 M309.1,645.6 L327.9,673.8 M309.1,645.6 L348.0,653.8 M327.1,620.4 L339.7,596.6 M327.1,620.4 L363.2,632.7 M339.7,596.6 L350.7,572.4 M339.7,596.6 L375.0,610.2 M350.7,572.4 L361.0,547.8 M350.7,572.4 L388.0,586.0 M361.0,547.8 L371.9,523.6 M361.0,547.8 L400.8,560.8 M371.9,523.6 L384.4,500.2 M371.9,523.6 L413.6,536.2 M384.4,500.2 L399.3,478.4 M384.4,500.2 L427.7,511.1 M399.3,478.4 L415.7,456.1 M399.3,478.4 L442.2,488.1 M415.7,456.1 L436.3,435.0 M415.7,456.1 L457.3,466.5 M436.3,435.0 L454.2,411.3 M436.3,435.0 L482.4,449.5 M454.2,411.3 L466.6,386.9 M454.2,411.3 L501.2,420.4 M466.6,386.9 L477.7,361.0 M466.6,386.9 L501.3,397.4 M477.7,361.0 L487.6,334.9 M477.7,361.0 L510.9,373.0 M487.6,334.9 L497.6,310.1 M487.6,334.9 L522.0,347.5 M497.6,310.1 L505.5,286.8 M497.6,310.1 L535.4,322.7 M505.5,286.8 L526.2,268.0 M505.5,286.8 L555.4,301.6 M526.2,268.0 L548.1,246.6 M526.2,268.0 L566.7,278.7 M548.1,246.6 L570.9,223.2 M548.1,246.6 L585.6,256.0 M570.9,223.2 L597.0,195.0 M570.9,223.2 L606.2,232.3 M597.0,195.0 L629.6,205.0 M315.7,703.1 L327.9,673.8 M315.7,703.1 L354.8,709.8 M327.9,673.8 L348.0,653.8 M327.9,673.8 L366.7,684.8 M348.0,653.8 L363.2,632.7 M348.0,653.8 L381.8,663.8 M363.2,632.7 L375.0,610.2 M363.2,632.7 L400.5,645.0 M375.0,610.2 L388.0,586.0 M375.0,610.2 L409.6,622.2 M388.0,586.0 L400.8,560.8 M388.0,586.0 L424.9,596.9 M400.8,560.8 L413.6,536.2 M400.8,560.8 L440.0,570.0 M413.6,536.2 L427.7,511.1 M413.6,536.2 L452.2,549.0 M427.7,511.1 L442.2,488.1 M427.7,511.1 L469.2,520.1 M442.2,488.1 L457.3,466.5 M442.2,488.1 L482.0,494.9 M457.3,466.5 L482.4,449.5 M457.3,466.5 L488.9,472.1 M482.4,449.5 L501.2,420.4 M482.4,449.5 L488.9,472.1 M482.4,449.5 L537.8,457.2 M501.2,420.4 L501.3,397.4 M501.2,420.4 L528.9,404.8 M501.2,420.4 L550.6,435.3 M501.3,397.4 L510.9,373.0 M501.3,397.4 L528.9,404.8 M510.9,373.0 L522.0,347.5 M510.9,373.0 L545.4,382.4 M522.0,347.5 L535.4,322.7 M522.0,347.5 L559.6,356.8 M535.4,322.7 L555.4,301.6 M535.4,322.7 L576.1,328.5 M555.4,301.6 L566.7,278.7 M555.4,301.6 L576.1,328.5 M555.4,301.6 L604.6,288.5 M566.7,278.7 L585.6,256.0 M566.7,278.7 L604.6,288.5 M585.6,256.0 L606.2,232.3 M585.6,256.0 L623.5,262.7 M606.2,232.3 L629.6,205.0 M606.2,232.3 L641.4,239.2 M629.6,205.0 L661.7,213.2 M354.8,709.8 L366.7,684.8 M354.8,709.8 L387.0,718.0 M366.7,684.8 L381.8,663.8 M366.7,684.8 L398.3,693.6 M381.8,663.8 L400.5,645.0 M381.8,663.8 L414.7,669.9 M400.5,645.0 L409.6,622.2 M400.5,645.0 L414.7,669.9 M400.5,645.0 L443.1,634.5 M409.6,622.2 L424.9,596.9 M409.6,622.2 L443.1,634.5 M424.9,596.9 L440.0,570.0 M424.9,596.9 L463.8,605.0 M440.0,570.0 L452.2,549.0 M440.0,570.0 L480.2,568.9 M452.2,549.0 L469.2,520.1 M452.2,549.0 L480.2,568.9 M469.2,520.1 L482.0,494.9 M469.2,520.1 L507.0,529.7 M482.0,494.9 L488.9,472.1 M482.0,494.9 L521.1,500.9 M488.9,472.1 L530.6,478.3 M528.9,404.8 L545.4,382.4 M528.9,404.8 L569.2,414.4 M545.4,382.4 L559.6,356.8 M545.4,382.4 L586.0,390.5 M559.6,356.8 L576.1,328.5 M559.6,356.8 L601.9,365.2 M576.1,328.5 L616.3,339.4 M576.1,328.5 L620.6,317.6 M604.6,288.5 L623.5,262.7 M604.6,288.5 L620.6,317.6 M604.6,288.5 L658.3,286.4 M623.5,262.7 L641.4,239.2 M623.5,262.7 L663.0,267.0 M641.4,239.2 L661.7,213.2 M641.4,239.2 L677.1,245.0 M661.7,213.2 L695.1,220.4 M387.0,718.0 L398.3,693.6 M387.0,718.0 L423.0,728.5 M398.3,693.6 L414.7,669.9 M398.3,693.6 L430.4,703.2 M414.7,669.9 L445.0,681.4 M414.7,669.9 L458.0,659.7 M443.1,634.5 L463.8,605.0 M443.1,634.5 L458.0,659.7 M443.1,634.5 L484.1,638.5 M463.8,605.0 L480.2,568.9 M463.8,605.0 L507.2,611.7 M480.2,568.9 L507.0,529.7 M480.2,568.9 L533.2,581.2 M507.0,529.7 L521.1,500.9 M507.0,529.7 L548.5,535.9 M521.1,500.9 L530.6,478.3 M521.1,500.9 L559.7,506.1 M530.6,478.3 L537.8,457.2 M530.6,478.3 L570.5,484.0 M537.8,457.2 L550.6,435.3 M537.8,457.2 L587.7,465.8 M550.6,435.3 L569.2,414.4 M550.6,435.3 L595.5,445.1 M569.2,414.4 L586.0,390.5 M569.2,414.4 L612.4,422.9 M586.0,390.5 L601.9,365.2 M586.0,390.5 L630.7,398.3 M601.9,365.2 L616.3,339.4 M601.9,365.2 L648.2,372.4 M616.3,339.4 L620.6,317.6 M616.3,339.4 L663.7,345.2 M620.6,317.6 L677.4,315.5 M658.3,286.4 L663.0,267.0 M658.3,286.4 L677.4,315.5 M658.3,286.4 L698.8,276.5 M663.0,267.0 L677.1,245.0 M663.0,267.0 L698.8,276.5 M677.1,245.0 L695.1,220.4 M677.1,245.0 L714.4,253.0 M695.1,220.4 L730.7,228.5 M423.0,728.5 L430.4,703.2 M423.0,728.5 L462.9,715.5 M430.4,703.2 L445.0,681.4 M430.4,703.2 L462.9,715.5 M445.0,681.4 L458.0,659.7 M445.0,681.4 L482.8,690.8 M458.0,659.7 L484.1,638.5 M458.0,659.7 L503.6,669.1 M484.1,638.5 L507.2,611.7 M484.1,638.5 L527.1,645.2 M507.2,611.7 L533.2,581.2 M507.2,611.7 L551.4,614.8 M533.2,581.2 L548.5,535.9 M533.2,581.2 L551.4,614.8 M533.2,581.2 L584.7,571.5 M548.5,535.9 L559.7,506.1 M548.5,535.9 L590.0,539.0 M559.7,506.1 L570.5,484.0 M559.7,506.1 L597.9,513.1 M570.5,484.0 L587.7,465.8 M570.5,484.0 L610.2,489.4 M587.7,465.8 L595.5,445.1 M587.7,465.8 L610.2,489.4 M587.7,465.8 L636.5,456.9 M595.5,445.1 L612.4,422.9 M595.5,445.1 L636.5,456.9 M612.4,422.9 L630.7,398.3 M612.4,422.9 L658.3,431.7 M630.7,398.3 L648.2,372.4 M630.7,398.3 L678.2,406.8 M648.2,372.4 L663.7,345.2 M648.2,372.4 L695.7,380.1 M663.7,345.2 L677.4,315.5 M663.7,345.2 L709.6,352.5 M677.4,315.5 L719.4,325.6 M677.4,315.5 L722.5,301.6 M698.8,276.5 L714.4,253.0 M698.8,276.5 L722.5,301.6 M698.8,276.5 L739.5,282.0 M714.4,253.0 L730.7,228.5 M714.4,253.0 L758.6,263.5 M730.7,228.5 L768.2,239.0 M462.9,715.5 L482.8,690.8 M462.9,715.5 L480.4,744.8 M462.9,715.5 L503.1,722.0 M482.8,690.8 L503.6,669.1 M482.8,690.8 L523.7,699.9 M503.6,669.1 L527.1,645.2 M503.6,669.1 L547.3,678.9 M527.1,645.2 L551.4,614.8 M527.1,645.2 L568.9,655.3 M551.4,614.8 L589.0,628.3 M551.4,614.8 L599.2,600.5 M584.7,571.5 L590.0,539.0 M584.7,571.5 L599.2,600.5 M584.7,571.5 L617.1,575.4 M590.0,539.0 L597.9,513.1 M590.0,539.0 L627.8,548.5 M597.9,513.1 L610.2,489.4 M597.9,513.1 L634.1,524.7 M610.2,489.4 L646.3,503.8 M610.2,489.4 L657.4,482.6 M636.5,456.9 L658.3,431.7 M636.5,456.9 L657.4,482.6 M636.5,456.9 L683.3,464.1 M658.3,431.7 L678.2,406.8 M658.3,431.7 L705.5,441.5 M678.2,406.8 L695.7,380.1 M678.2,406.8 L726.1,416.3 M695.7,380.1 L709.6,352.5 M695.7,380.1 L741.9,388.4 M709.6,352.5 L719.4,325.6 M709.6,352.5 L753.8,360.8 M719.4,325.6 L722.5,301.6 M719.4,325.6 L762.5,335.0 M722.5,301.6 L739.5,282.0 M722.5,301.6 L769.0,312.1 M739.5,282.0 L758.6,263.5 M739.5,282.0 L779.9,290.1 M758.6,263.5 L768.2,239.0 M758.6,263.5 L779.9,290.1 M758.6,263.5 L805.1,253.5 M768.2,239.0 L805.1,253.5 M480.4,744.8 L503.1,722.0 M480.4,744.8 L524.8,757.5 M503.1,722.0 L523.7,699.9 M503.1,722.0 L547.5,732.7 M523.7,699.9 L547.3,678.9 M523.7,699.9 L565.1,709.4 M547.3,678.9 L568.9,655.3 M547.3,678.9 L593.3,691.5 M568.9,655.3 L589.0,628.3 M568.9,655.3 L609.5,668.9 M589.0,628.3 L599.2,600.5 M589.0,628.3 L627.6,642.4 M599.2,600.5 L617.1,575.4 M599.2,600.5 L642.2,615.7 M617.1,575.4 L627.8,548.5 M617.1,575.4 L653.9,588.7 M627.8,548.5 L634.1,524.7 M627.8,548.5 L670.4,559.6 M634.1,524.7 L646.3,503.8 M634.1,524.7 L663.6,535.3 M646.3,503.8 L657.4,482.6 M646.3,503.8 L682.2,519.6 M657.4,482.6 L683.3,464.1 M657.4,482.6 L704.8,499.9 M683.3,464.1 L705.5,441.5 M683.3,464.1 L727.6,477.7 M705.5,441.5 L726.1,416.3 M705.5,441.5 L750.0,454.6 M726.1,416.3 L741.9,388.4 M726.1,416.3 L774.3,428.3 M741.9,388.4 L753.8,360.8 M741.9,388.4 L785.6,397.5 M753.8,360.8 L762.5,335.0 M753.8,360.8 L796.2,370.0 M762.5,335.0 L769.0,312.1 M762.5,335.0 L805.1,344.6 M769.0,312.1 L779.9,290.1 M769.0,312.1 L808.3,322.1 M779.9,290.1 L814.1,305.9 M779.9,290.1 L819.7,287.2 M805.1,253.5 L819.7,287.2 M805.1,253.5 L864.5,254.2 M524.8,757.5 L547.5,732.7 M524.8,757.5 L568.3,772.9 M547.5,732.7 L565.1,709.4 M547.5,732.7 L598.2,745.4 M565.1,709.4 L593.3,691.5 M565.1,709.4 L600.0,715.0 M593.3,691.5 L609.5,668.9 M593.3,691.5 L647.0,688.8 M593.3,691.5 L600.0,715.0 M609.5,668.9 L627.6,642.4 M609.5,668.9 L647.0,688.8 M627.6,642.4 L642.2,615.7 M627.6,642.4 L665.4,658.5 M642.2,615.7 L653.9,588.7 M642.2,615.7 L686.1,632.9 M653.9,588.7 L670.4,559.6 M653.9,588.7 L692.0,605.5 M670.4,559.6 L663.6,535.3 M670.4,559.6 L707.5,582.4 M670.4,559.6 L708.2,540.6 M663.6,535.3 L682.2,519.6 M682.2,519.6 L704.8,499.9 M682.2,519.6 L708.2,540.6 M704.8,499.9 L727.6,477.7 M704.8,499.9 L746.4,522.3 M727.6,477.7 L750.0,454.6 M727.6,477.7 L766.0,494.8 M750.0,454.6 L774.3,428.3 M750.0,454.6 L791.3,472.2 M774.3,428.3 L785.6,397.5 M774.3,428.3 L801.9,446.2 M774.3,428.3 L811.7,428.0 M785.6,397.5 L796.2,370.0 M785.6,397.5 L831.2,403.6 M796.2,370.0 L805.1,344.6 M796.2,370.0 L840.4,376.3 M805.1,344.6 L808.3,322.1 M805.1,344.6 L854.5,349.1 M808.3,322.1 L814.1,305.9 M808.3,322.1 L846.8,322.0 M814.1,305.9 L819.7,287.2 M814.1,305.9 L846.8,322.0 M819.7,287.2 L874.0,295.0 M864.5,254.2 L874.0,295.0 M568.3,772.9 L598.2,745.4 M568.3,772.9 L611.4,770.6 M874.0,295.0 L933.2,286.0 M874.0,295.0 L846.8,322.0 M874.0,295.0 L906.3,312.6 M933.2,286.0 L958.6,311.3 M933.2,286.0 L992.1,290.1 M933.2,286.0 L906.3,312.6 M1412.2,1059.0 L1383.5,1028.5 M1412.2,1059.0 L1450.6,1043.1 M1473.6,1067.5 L1514.3,1072.9 M1473.6,1067.5 L1450.6,1043.1 M1473.6,1067.5 L1499.5,1053.1 M1514.3,1072.9 L1555.1,1090.5 M1514.3,1072.9 L1550.0,1059.6 M1514.3,1072.9 L1499.5,1053.1 M1555.1,1090.5 L1579.7,1076.2 M1525.5,838.2 L1503.0,858.7 M1525.5,838.2 L1554.6,851.2 M1525.5,838.2 L1500.7,824.4 M1698.1,858.4 L1721.7,884.2 M1698.1,858.4 L1739.4,857.0 M1698.1,858.4 L1698.3,830.0 M1698.1,858.4 L1668.1,878.4 M1698.1,858.4 L1666.9,842.3 M1758.9,808.3 L1766.0,786.5 M1758.9,808.3 L1758.7,825.2 M1758.9,808.3 L1718.4,806.8 M598.2,745.4 L611.4,770.6 M598.2,745.4 L600.0,715.0 M1483.3,661.8 L1490.9,686.3 M1483.3,661.8 L1451.8,643.0 M1483.3,661.8 L1500.7,647.9 M1483.3,661.8 L1454.1,668.3 M1483.3,661.8 L1515.5,661.4 M1626.8,953.3 L1654.1,974.9 M1626.8,953.3 L1626.8,926.6 M1626.8,953.3 L1584.8,953.9 M1626.8,953.3 L1611.5,974.8 M1626.8,953.3 L1655.4,941.4 M958.8,892.2 L925.0,882.9 M958.8,892.2 L990.5,901.9 M1266.8,822.5 L1243.9,806.5 M1266.8,822.5 L1262.6,848.9 M1266.8,822.5 L1240.1,835.9 M1266.8,822.5 L1275.3,795.8 M1266.8,822.5 L1313.8,827.1 M1716.4,726.4 L1697.3,705.7 M1716.4,726.4 L1675.7,731.0 M1716.4,726.4 L1729.1,749.1 M1716.4,726.4 L1752.4,721.3 M1721.7,884.2 L1692.1,903.2 M1639.4,716.5 L1627.9,690.7 M1639.4,716.5 L1675.7,731.0 M1639.4,716.5 L1594.8,710.5 M1639.4,716.5 L1671.0,710.9 M1243.9,806.5 L1213.0,818.0 M1243.9,806.5 L1275.3,795.8 M1243.9,806.5 L1219.2,792.1 M1447.5,431.6 L1467.5,458.0 M1447.5,431.6 L1423.2,450.4 M1447.5,431.6 L1409.0,418.6 M1447.5,431.6 L1479.0,430.6 M1414.6,599.1 L1452.3,598.6 M1414.6,599.1 L1385.5,612.9 M1414.6,599.1 L1425.0,574.6 M1414.6,599.1 L1421.7,623.5 M1414.6,599.1 L1392.6,581.5 M642.1,716.9 L647.0,688.8 M642.1,716.9 L600.0,715.0 M1781.2,656.5 L1794.7,678.3 M1781.2,656.5 L1735.0,665.5 M1781.2,656.5 L1813.7,656.6 M1781.2,656.5 L1806.4,642.9 M1154.1,950.9 L1191.5,964.8 M1154.1,950.9 L1169.0,928.3 M1154.1,950.9 L1123.1,940.7 M1586.9,683.6 L1536.5,684.0 M1586.9,683.6 L1627.9,690.7 M1586.9,683.6 L1621.0,669.0 M1586.9,683.6 L1594.8,710.5 M1586.9,683.6 L1565.5,660.4 M1245.7,774.9 L1275.3,795.8 M1245.7,774.9 L1283.7,758.7 M1245.7,774.9 L1240.1,752.6 M1245.7,774.9 L1219.2,792.1 M1647.1,865.3 L1634.9,887.0 M1647.1,865.3 L1668.1,878.4 M1647.1,865.3 L1666.9,842.3 M1647.1,865.3 L1615.2,854.0 M1475.8,884.3 L1487.3,902.7 M1475.8,884.3 L1444.1,889.1 M1475.8,884.3 L1465.8,861.9 M1475.8,884.3 L1506.5,883.0 M1654.1,974.9 L1629.5,994.3 M1654.1,974.9 L1678.3,961.0 M740.7,563.2 L707.5,582.4 M740.7,563.2 L708.2,540.6 M1566.2,908.1 L1605.9,899.7 M1566.2,908.1 L1559.0,883.4 M1566.2,908.1 L1583.6,929.7 M1566.2,908.1 L1549.6,930.2 M1566.2,908.1 L1536.1,897.6 M846.8,322.0 L854.5,349.1 M846.8,322.0 L880.5,333.2 M1794.7,678.3 L1759.1,686.1 M1794.7,678.3 L1804.6,700.8 M1794.7,678.3 L1827.7,674.2 M1404.5,864.6 L1433.4,848.8 M1404.5,864.6 L1410.6,890.5 M1404.5,864.6 L1362.3,870.3 M1404.5,864.6 L1387.4,838.7 M1404.5,864.6 L1436.6,872.5 M1487.3,902.7 L1452.6,907.2 M1487.3,902.7 L1518.9,915.5 M1487.3,902.7 L1506.5,883.0 M1433.4,848.8 L1465.8,861.9 M1433.4,848.8 L1452.0,833.4 M1433.4,848.8 L1416.7,829.4 M1455.8,615.9 L1452.3,598.6 M1455.8,615.9 L1476.1,604.6 M1455.8,615.9 L1478.1,630.9 M1455.8,615.9 L1421.7,623.5 M1063.4,341.7 L1018.5,324.5 M1063.4,341.7 L1120.6,331.2 M1063.4,341.7 L1061.2,308.2 M1133.4,923.5 L1100.2,927.1 M1133.4,923.5 L1169.0,928.3 M1133.4,923.5 L1123.1,940.7 M1133.4,923.5 L1136.0,901.3 M1774.6,708.5 L1782.3,726.8 M1774.6,708.5 L1759.1,686.1 M1774.6,708.5 L1804.6,700.8 M1774.6,708.5 L1752.4,721.3 M656.7,797.6 L697.1,819.0 M656.7,797.6 L610.3,796.9 M1508.0,613.2 L1476.1,604.6 M1508.0,613.2 L1546.5,603.9 M1508.0,613.2 L1478.1,630.9 M1508.0,613.2 L1524.9,634.2 M1553.4,711.0 L1536.5,684.0 M1553.4,711.0 L1594.8,710.5 M1553.4,711.0 L1516.9,702.2 M1782.3,726.8 L1792.3,747.3 M1782.3,726.8 L1810.7,726.0 M1782.3,726.8 L1752.4,721.3 M697.1,819.0 L749.7,826.9 M746.4,522.3 L766.0,494.8 M746.4,522.3 L708.2,540.6 M925.0,882.9 L887.8,866.6 M1735.0,665.5 L1708.3,679.6 M1735.0,665.5 L1759.1,686.1 M1735.0,665.5 L1697.3,662.8 M1316.2,800.1 L1353.0,795.8 M1316.2,800.1 L1330.5,784.4 M1316.2,800.1 L1275.3,795.8 M1316.2,800.1 L1313.8,827.1 M1386.5,820.6 L1350.6,820.7 M1386.5,820.6 L1387.4,838.7 M1386.5,820.6 L1416.7,829.4 M1386.5,820.6 L1392.4,799.4 M1555.2,1031.1 L1575.2,1017.5 M1555.2,1031.1 L1580.3,1046.8 M1555.2,1031.1 L1529.9,1042.4 M1627.9,499.2 L1645.9,524.8 M1627.9,499.2 L1659.6,491.0 M1627.9,499.2 L1616.1,474.9 M1372.7,635.7 L1355.7,658.1 M1372.7,635.7 L1385.5,612.9 M1372.7,635.7 L1403.7,642.8 M1372.7,635.7 L1338.3,626.8 M1838.5,692.0 L1834.1,712.7 M1838.5,692.0 L1804.6,700.8 M1838.5,692.0 L1827.7,674.2 M1838.5,692.0 L1856.9,672.3 M801.9,446.2 L811.7,428.0 M801.9,446.2 L791.3,472.2 M1629.5,994.3 L1617.7,1011.8 M1629.5,994.3 L1591.4,998.4 M1629.5,994.3 L1611.5,974.8 M1852.4,555.7 L1853.6,580.3 M1852.4,555.7 L1821.2,541.2 M1852.4,555.7 L1896.6,555.6 M1852.4,555.7 L1825.5,571.2 M1626.8,926.6 L1605.9,899.7 M1626.8,926.6 L1583.6,929.7 M1626.8,926.6 L1658.6,911.1 M1626.8,926.6 L1655.4,941.4 M1536.5,684.0 L1490.9,686.3 M1536.5,684.0 L1565.5,660.4 M1536.5,684.0 L1515.5,661.4 M1536.5,684.0 L1516.9,702.2 M1582.6,852.0 L1554.6,851.2 M1582.6,852.0 L1615.2,854.0 M1582.6,852.0 L1573.6,866.2 M1018.5,324.5 L992.1,290.1 M1018.5,324.5 L1061.2,308.2 M1766.0,786.5 L1734.2,788.9 M1766.0,786.5 L1781.7,770.5 M1766.0,786.5 L1750.0,765.6 M1678.3,961.0 L1655.4,941.4 M1627.9,690.7 L1621.0,669.0 M1627.9,690.7 L1672.1,691.2 M1605.9,899.7 L1634.9,887.0 M1605.9,899.7 L1597.7,877.9 M1884.9,631.4 L1886.4,608.0 M1884.9,631.4 L1872.5,648.7 M1884.9,631.4 L1846.5,628.4 M842.1,855.7 L887.8,866.6 M1221.4,393.6 L1185.9,375.3 M1221.4,393.6 L1256.8,377.5 M1792.3,747.3 L1755.7,746.3 M1792.3,747.3 L1810.7,726.0 M1792.3,747.3 L1781.7,770.5 M840.4,376.3 L854.5,349.1 M840.4,376.3 L831.2,403.6 M1739.4,857.0 L1738.2,831.8 M1697.3,705.7 L1729.5,697.8 M1697.3,705.7 L1672.1,691.2 M1697.3,705.7 L1671.0,710.9 M1357.0,985.4 L1319.3,993.0 M1357.0,985.4 L1368.4,1008.1 M1539.7,646.9 L1565.5,660.4 M1539.7,646.9 L1554.1,626.7 M1539.7,646.9 L1515.5,661.4 M1539.7,646.9 L1524.9,634.2 M1185.9,375.3 L1222.3,357.1 M1185.9,375.3 L1162.1,343.5 M1213.0,818.0 L1240.1,835.9 M1213.0,818.0 L1188.4,843.2 M1213.0,818.0 L1219.2,792.1 M1719.5,773.3 L1704.3,784.9 M1719.5,773.3 L1734.2,788.9 M1719.5,773.3 L1750.0,765.6 M1719.5,773.3 L1692.7,756.9 M1444.1,889.1 L1410.6,890.5 M1444.1,889.1 L1452.6,907.2 M1444.1,889.1 L1436.6,872.5 M1490.9,686.3 L1516.9,702.2 M1583.6,594.2 L1591.3,619.3 M1583.6,594.2 L1546.5,603.9 M1316.7,629.7 L1331.8,643.5 M1316.7,629.7 L1338.3,626.8 M1465.8,861.9 L1503.0,858.7 M1465.8,861.9 L1482.1,843.4 M1465.8,861.9 L1436.6,872.5 M1634.9,887.0 L1597.7,877.9 M1634.9,887.0 L1668.1,878.4 M1634.9,887.0 L1658.6,911.1 M1223.4,855.4 L1240.1,835.9 M1223.4,855.4 L1188.4,843.2 M1183.5,871.4 L1167.3,890.2 M1183.5,871.4 L1188.4,843.2 M1617.7,1011.8 L1610.7,1035.0 M1617.7,1011.8 L1639.7,1022.6 M1617.7,1011.8 L1591.4,998.4 M1500.5,448.7 L1467.5,458.0 M1500.5,448.7 L1536.2,455.1 M1500.5,448.7 L1479.0,430.6 M1584.8,953.9 L1583.6,929.7 M1584.8,953.9 L1578.6,978.4 M1350.6,820.7 L1353.0,795.8 M1350.6,820.7 L1348.2,843.0 M1350.6,820.7 L1313.8,827.1 M1839.7,650.6 L1813.7,656.6 M1839.7,650.6 L1872.5,648.7 M1839.7,650.6 L1846.5,628.4 M1839.7,650.6 L1806.4,642.9 M1839.7,650.6 L1856.9,672.3 M1467.5,458.0 L1441.1,468.0 M1671.5,654.5 L1664.3,670.0 M1671.5,654.5 L1640.8,646.7 M1671.5,654.5 L1697.3,662.8 M1675.7,731.0 L1692.7,756.9 M1675.7,731.0 L1671.0,710.9 M1758.7,825.2 L1738.2,831.8 M1415.5,469.3 L1423.2,450.4 M1415.5,469.3 L1441.1,468.0 M1415.5,469.3 L1418.6,493.8 M647.0,688.8 L665.4,658.5 M1452.3,598.6 L1476.1,604.6 M1297.8,380.4 L1335.1,396.3 M1297.8,380.4 L1270.7,403.3 M1297.8,380.4 L1256.8,377.5 M1686.1,928.8 L1692.1,903.2 M1686.1,928.8 L1658.6,911.1 M1686.1,928.8 L1655.4,941.4 M1355.7,658.1 L1311.9,654.5 M1355.7,658.1 L1331.8,643.5 M1355.7,658.1 L1394.8,657.4 M1621.0,669.0 L1593.1,649.8 M1621.0,669.0 L1664.3,670.0 M1621.0,669.0 L1640.8,646.7 M1451.8,643.0 L1478.1,630.9 M1451.8,643.0 L1425.8,656.8 M1451.8,643.0 L1421.7,623.5 M1423.2,450.4 L1387.3,438.1 M1423.2,450.4 L1441.1,468.0 M1729.1,749.1 L1755.7,746.3 M1729.1,749.1 L1750.0,765.6 M1729.1,749.1 L1692.7,756.9 M1353.0,795.8 L1330.5,784.4 M1353.0,795.8 L1392.4,799.4 M766.0,494.8 L791.3,472.2 M1473.3,811.2 L1452.0,833.4 M1473.3,811.2 L1466.6,785.4 M1473.3,811.2 L1428.9,804.8 M1473.3,811.2 L1500.7,824.4 M1698.3,830.0 L1738.2,831.8 M1698.3,830.0 L1718.4,806.8 M1698.3,830.0 L1666.9,842.3 M1167.3,890.2 L1166.4,905.8 M1530.2,869.1 L1503.0,858.7 M1530.2,869.1 L1559.0,883.4 M1530.2,869.1 L1554.6,851.2 M1530.2,869.1 L1506.5,883.0 M1387.3,438.1 L1409.0,418.6 M1387.3,438.1 L1372.8,413.2 M1503.0,858.7 L1482.1,843.4 M1503.0,858.7 L1506.5,883.0 M1120.6,331.2 L1162.1,343.5 M1120.6,331.2 L1129.1,357.5 M1597.7,877.9 L1559.0,883.4 M1597.7,877.9 L1615.2,854.0 M1597.7,877.9 L1573.6,866.2 M1359.5,590.6 L1352.5,608.0 M1359.5,590.6 L1385.5,612.9 M1359.5,590.6 L1392.6,581.5 M1692.1,903.2 L1668.1,878.4 M1692.1,903.2 L1658.6,911.1 M1500.7,647.9 L1515.5,661.4 M1500.7,647.9 L1478.1,630.9 M1500.7,647.9 L1524.9,634.2 M1100.2,927.1 L1060.4,921.1 M1100.2,927.1 L1123.1,940.7 M1060.4,921.1 L1024.0,911.7 M1309.4,416.3 L1340.5,429.5 M1309.4,416.3 L1335.1,396.3 M1309.4,416.3 L1270.7,403.3 M1330.5,784.4 L1304.9,774.1 M1606.8,1060.6 L1610.7,1035.0 M1606.8,1060.6 L1579.7,1076.2 M1606.8,1060.6 L1580.3,1046.8 M1222.3,357.1 L1256.8,377.5 M1377.6,532.7 L1374.2,556.5 M1377.6,532.7 L1407.0,531.9 M1730.6,511.2 L1702.9,498.6 M1730.6,511.2 L1763.6,520.4 M1730.6,511.2 L1708.4,515.6 M1676.5,516.3 L1645.9,524.8 M1676.5,516.3 L1659.6,491.0 M1676.5,516.3 L1708.4,515.6 M1352.5,608.0 L1385.5,612.9 M1352.5,608.0 L1338.3,626.8 M1262.6,848.9 L1240.1,835.9 M1262.6,848.9 L1297.7,851.8 M1452.0,833.4 L1482.1,843.4 M1452.0,833.4 L1416.7,829.4 M1853.6,580.3 L1835.9,604.8 M1853.6,580.3 L1901.1,582.4 M1853.6,580.3 L1825.5,571.2 M1755.7,746.3 L1750.0,765.6 M1755.7,746.3 L1752.4,721.3 M1565.5,660.4 L1593.1,649.8 M1565.5,660.4 L1575.3,637.0 M1411.2,552.5 L1425.0,574.6 M1411.2,552.5 L1374.2,556.5 M1411.2,552.5 L1407.0,531.9 M1409.0,418.6 L1372.8,413.2 M1348.2,843.0 L1362.3,870.3 M1348.2,843.0 L1313.8,827.1 M1348.2,843.0 L1387.4,838.7 M1348.2,843.0 L1330.8,861.0 M1319.3,993.0 L1339.5,1014.9 M1319.3,993.0 L1306.0,1007.1 M1340.5,429.5 L1372.8,413.2 M1304.9,774.1 L1275.3,795.8 M1304.9,774.1 L1283.7,758.7 M1281.0,699.2 L1276.5,721.8 M1281.0,699.2 L1308.0,679.4 M1886.4,608.0 L1835.9,604.8 M1886.4,608.0 L1901.1,582.4 M1410.6,890.5 L1418.9,911.0 M1410.6,890.5 L1379.2,894.4 M749.7,826.9 L791.4,842.6 M1738.2,831.8 L1718.4,806.8 M1593.1,649.8 L1575.3,637.0 M1593.1,649.8 L1613.6,632.6 M1835.9,604.8 L1821.1,622.9 M1835.9,604.8 L1846.5,628.4 M1559.0,883.4 L1536.1,897.6 M1559.0,883.4 L1573.6,866.2 M1311.9,654.5 L1308.0,679.4 M1311.9,654.5 L1331.8,643.5 M1583.6,929.7 L1549.6,930.2 M1702.9,498.6 L1659.6,491.0 M1702.9,498.6 L1708.4,515.6 M1901.1,582.4 L1896.6,555.6 M1821.1,622.9 L1846.5,628.4 M1821.1,622.9 L1806.4,642.9 M1554.6,851.2 L1573.6,866.2 M854.5,349.1 L880.5,333.2 M692.0,605.5 L686.1,632.9 M692.0,605.5 L707.5,582.4 M1550.0,1059.6 L1579.7,1076.2 M1550.0,1059.6 L1580.3,1046.8 M1550.0,1059.6 L1529.9,1042.4 M1718.4,806.8 L1704.3,784.9 M1718.4,806.8 L1734.2,788.9 M1610.7,1035.0 L1639.7,1022.6 M1610.7,1035.0 L1575.2,1017.5 M1610.7,1035.0 L1580.3,1046.8 M1834.1,712.7 L1810.7,726.0 M1385.5,612.9 L1421.7,623.5 M1276.5,721.8 L1271.7,740.5 M1406.4,514.7 L1418.6,493.8 M1406.4,514.7 L1407.0,531.9 M1162.1,343.5 L1129.1,357.5 M1554.1,626.7 L1591.3,619.3 M1554.1,626.7 L1575.3,637.0 M1554.1,626.7 L1546.5,603.9 M1554.1,626.7 L1524.9,634.2 M1372.8,413.2 L1335.1,396.3 M1708.3,679.6 L1729.5,697.8 M1708.3,679.6 L1672.1,691.2 M1708.3,679.6 L1697.3,662.8 M1454.1,668.3 L1425.8,656.8 M1810.7,726.0 L1804.6,700.8 M1549.6,930.2 L1518.9,915.5 M1821.2,541.2 L1792.9,529.6 M1591.3,619.3 L1575.3,637.0 M1591.3,619.3 L1613.6,632.6 M1482.1,843.4 L1500.7,824.4 M1024.0,911.7 L990.5,901.9 M958.6,311.3 L992.1,290.1 M1362.3,870.3 L1330.8,861.0 M1362.3,870.3 L1379.2,894.4 M1664.3,670.0 L1672.1,691.2 M1664.3,670.0 L1697.3,662.8 M1383.5,1028.5 L1339.5,1014.9 M1383.5,1028.5 L1368.4,1008.1 M1452.6,907.2 L1418.9,911.0 M1591.4,998.4 L1575.2,1017.5 M1591.4,998.4 L1578.6,978.4 M1729.5,697.8 L1759.1,686.1 M1729.5,697.8 L1752.4,721.3 M1339.5,1014.9 L1368.4,1008.1 M1339.5,1014.9 L1306.0,1007.1 M1813.7,656.6 L1827.7,674.2 M1813.7,656.6 L1806.4,642.9 M1659.6,491.0 L1616.1,474.9 M1536.2,455.1 L1570.9,463.0 M1271.7,740.5 L1283.7,758.7 M1271.7,740.5 L1240.1,752.6 M1297.7,851.8 L1313.8,827.1 M1297.7,851.8 L1330.8,861.0 M831.2,403.6 L811.7,428.0 M1518.9,915.5 L1536.1,897.6 M1613.6,632.6 L1640.8,646.7 M1331.8,643.5 L1338.3,626.8 M611.4,770.6 L610.3,796.9 M1169.0,928.3 L1166.4,905.8 M1425.0,574.6 L1392.6,581.5 M906.3,312.6 L880.5,333.2 M1387.4,838.7 L1416.7,829.4 M686.1,632.9 L665.4,658.5 M1374.2,556.5 L1392.6,581.5 M1418.9,911.0 L1389.5,915.2 M1616.1,474.9 L1570.9,463.0 M1781.7,770.5 L1750.0,765.6 M1519.2,721.2 L1516.9,702.2 M1763.6,520.4 L1792.9,529.6 M1611.5,974.8 L1578.6,978.4 M1428.9,804.8 L1416.7,829.4 M1428.9,804.8 L1392.4,799.4 M1270.7,403.3 L1256.8,377.5 M1403.7,642.8 L1425.8,656.8 M1403.7,642.8 L1421.7,623.5 M1403.7,642.8 L1394.8,657.4 M1275.3,992.8 L1306.0,1007.1 M1166.4,905.8 L1136.0,901.3 M1536.1,897.6 L1506.5,883.0 M1379.2,894.4 L1389.5,915.2 M1499.5,1053.1 L1529.9,1042.4 M1425.8,656.8 L1394.8,657.4 M1827.7,674.2 L1856.9,672.3 M1672.1,691.2 L1671.0,710.9" stroke="#7e7e7e" stroke-width="0.7" fill="none"/>
<path d="M215.8,-79.4 L1837.6,394.0 L1873.4,419.3 L1902.5,448.4 L1917.5,470.8 L1931.0,497.0 L1940.0,530.0 L1940.0,570.0 L1925.3,612.6 L1905.2,644.3" stroke="#00bfff" stroke-width="1.5" fill="none" stroke-linejoin="round" stroke-linecap="round"/>
<path d="M1905.2,644.3 L1658.8,1033.5 L1640.0,1065.7 L1611.7,1095.0 L1576.7,1119.3 L1546.7,1135.0 L1505.0,1152.0 L1460.0,1164.0 L1400.0,1172.0 L1249.4,1144.5 L-277.0,699.0" stroke="#00bfff" stroke-width="2.9" fill="none" stroke-linejoin="round" stroke-linecap="round"/>
<path d="M-153.8,504.4 L132.4,587.9 L378.8,198.7" stroke="#00bfff" stroke-width="1.7" fill="none" stroke-linejoin="round" stroke-linecap="round"/>
<path d="M378.8,198.7 L92.6,115.2" stroke="#00bfff" stroke-width="2.7" fill="none" stroke-linejoin="round" stroke-linecap="round"/>
<path d="M704.8,755.0 L951.2,365.8 L1332.8,477.2" stroke="#00bfff" stroke-width="2.9" fill="none" stroke-linejoin="round" stroke-linecap="round"/>
<path d="M1332.8,477.2 L1086.4,866.4 L704.8,755.0" stroke="#00bfff" stroke-width="1.6" fill="none" stroke-linejoin="round" stroke-linecap="round"/>
<path d="M3.2,186.5L15.8,172L28.2,186.5H25V196.8H17.8V190.5H15.2V196.8H7.2V186.5Z" fill="#808080"/>
<path d="M62.0,197.1 L117.6,213.0 L94.0,249.5 L38.4,234.3 Z" fill="#ababab" stroke="#8c8c8c" stroke-width="0.8"/>
<path d="M38.4,234.3 L94.0,249.5 L94.0,294.7 L38.4,278.3 Z" fill="#ababab" stroke="#8c8c8c" stroke-width="0.8"/>
<path d="M94.0,249.5 L117.6,213.0 L117.6,257.0 L94.0,294.7 Z" fill="#a6a6a6" stroke="#8c8c8c" stroke-width="0.8"/>
<text transform="matrix(1.2681,0.3467,-0.5632,0.8877,77.20,227.60)" font-size="12" fill="#000" stroke="#000" stroke-width="0.25" text-anchor="middle">Top</text>
<text transform="matrix(1.2876,0.3520,0.0000,1.0500,65.30,269.80)" font-size="12" fill="#000" stroke="#000" stroke-width="0.25" text-anchor="middle">Front</text>
<text transform="matrix(0.5095,-0.7881,0.0000,1.0500,106.20,263.50)" font-size="12" fill="#000" stroke="#000" stroke-width="0.2" text-anchor="middle" font-style="italic">Right</text>
<path d="M1847.2,1065.3 L1847.2,1030" stroke="#6db56d" stroke-width="1.6"/><path d="M1847.2,1027.5L1849.2,1034.5H1845.2Z" fill="#1d6b1d"/>
<path d="M1847.2,1065.3 L1866,1035.2" stroke="#1a1aff" stroke-width="1.3"/><path d="M1867,1033.4L1865.6,1040L1862.3,1037.8Z" fill="#0c0cc0"/>
<path d="M1847.2,1065.3 L1891,1077.8" stroke="#ff1a1a" stroke-width="1.3"/><path d="M1893,1078.4L1886,1078.6L1887,1074.9Z" fill="#c00c0c"/>
<text x="1850.7" y="1040.3" font-size="12" fill="#111">Y</text><text x="1870.7" y="1046" font-size="12" fill="#111">Z</text><text x="1896.8" y="1089.8" font-size="12" fill="#111">X</text></svg></div>
<svg class="abs" style="left:0;top:0;font-family:'Liberation Sans', sans-serif" width="1920" height="170" viewBox="0 0 1920 170"><path d="M2,3h16v8h-11v8h-5z" fill="#c8002d"/><rect x="9" y="13.2" width="3" height="5.8" fill="#c8002d"/><rect x="13.4" y="13.2" width="2.9" height="5.8" fill="#c8002d"/>
<path d="M7,19v-6.5q0,-1.6 1.6,-1.6h9.4" fill="none" stroke="#c8002d" stroke-width="0"/>
<path d="M1799,10.5h10 M1844.5,7.5h8v8h-8z M1846.5,7.5v-2h8v8h-2 M1890,5l10,10 M1900,5l-10,10" stroke="#000" stroke-width="1" fill="none"/>
<path d="M20,66h29v29h-7v-12.2h-15v12.2h-7z M25,68.1h19v5.7h-19z" fill="#404040" fill-rule="evenodd"/><rect x="30" y="89" width="6" height="6" fill="#404040"/>
<path d="M83,68.9v13.1h13.1z" fill="#404040"/><path d="M91.8,74.5A8.7,8.7 0 1 1 106.15,83.65L96.2,93.6" stroke="#404040" stroke-width="4" fill="none"/>
<circle cx="165.9" cy="75.8" r="10.5" stroke="#404040" stroke-width="2.8" fill="none"/><path d="M159.5,84.5L154.3,94.8" stroke="#404040" stroke-width="5.6" stroke-linecap="round"/><rect x="163" y="73.1" width="6" height="5.8" fill="#a0151d"/>
<path d="M229.8,92H215V74H222L223.5,70H234.7L236.25,74H243V86.5" stroke="#404040" stroke-width="2" fill="none"/><circle cx="229" cy="82" r="5" stroke="#a0151d" stroke-width="2" fill="none"/><rect x="232.2" y="89.25" width="11.55" height="3.55" fill="#404040"/><rect x="236.1" y="85.3" width="3.8" height="11.45" fill="#404040"/>
<path d="M267.4,78.3L274,62.4L279.6,71.6L283.2,68.4L288.7,78.3Z" fill="#404040"/><circle cx="285" cy="62" r="3.2" fill="#404040"/>
<path d="M267.4,88.7H288.7L280.8,99.3V104.9L276.4,108.7V99.3Z" fill="#404040" stroke="#404040" stroke-width="0.8" stroke-linejoin="round"/>
<path d="M267.6,124.4L278,131.3L288.5,124.4V126.8L278,133.7L267.6,126.8Z" fill="#404040"/><path d="M278,118.6L287.6,124.5L278,130.6L268.5,124.5Z" fill="#404040" stroke="#a0151d" stroke-width="1.6"/>
<rect x="268" y="127" width="1.8" height="6.8" fill="#a0151d"/><rect x="277" y="133.5" width="2" height="6.3" fill="#a0151d"/><rect x="286.3" y="127" width="1.8" height="7.5" fill="#a0151d"/>
<text x="419.2" y="87.7" font-size="20" fill="#2d3a52" stroke="#2d3a52" stroke-width="0.35">M</text><path d="M434.9,84.9L432.1,94.9 M439.7,84.9L436.9,94.9 M431.8,89.3H442 M430.2,92.5H440.4" stroke="#a0151d" stroke-width="1.9" fill="none"/>
<text x="599.3" y="87.7" font-size="20" fill="#2d3a52" stroke="#2d3a52" stroke-width="0.35" textLength="13.2" lengthAdjust="spacingAndGlyphs">N</text><path d="M434.9,84.9L432.1,94.9 M439.7,84.9L436.9,94.9 M431.8,89.3H442 M430.2,92.5H440.4" stroke="#a0151d" stroke-width="1.9" fill="none" transform="translate(178,0)"/>
<path d="M465.6,58.6h17v3h-6.9v11.4h6.9v3h-17v-3h6.9v-11.4h-6.9z" fill="#404040"/>
<path d="M485.2,60V73.6 M483.4,61.8L487,58.4 M483.4,75.2L487,71.8 M465.6,77.9H482.6 M465.4,76L468,79.8 M480.4,76L483,79.8" stroke="#cf858a" stroke-width="1.5" fill="none"/>
<path d="M465.6,88.5h17v3.2h-6.9v10.8h6.9v3.1h-17v-3.1h6.9v-10.8h-6.9z" fill="#404040"/><path d="M476.2,105.6H483.8L482.6,100.9Z" fill="#404040"/>
<path d="M472.6,106.9H487" stroke="#cf858a" stroke-width="1.6"/><path d="M473.4,108.5L485.8,96.1" stroke="#a0151d" stroke-width="1.2"/>
<path d="M465.4,121H487 M465.6,119L468.2,123 M484.2,119L486.8,123" stroke="#cf858a" stroke-width="1.5" fill="none"/><rect x="465.1" y="124.2" width="21.9" height="1.6" fill="#404040"/><rect x="465.1" y="127.8" width="21.9" height="6.4" fill="#404040"/><rect x="465.1" y="136.2" width="21.9" height="1.6" fill="#404040"/>
<path d="M646,58.25V71.1L657.8,62.8M646,71.1L655,78.9" stroke="#404040" stroke-width="2" fill="none"/><text x="656.4" y="75.9" font-size="12" fill="#2d3a52" stroke="#2d3a52" stroke-width="0.3">X</text>
<path d="M646,88.25V101.1L657.8,92.8M646,101.1L655,108.9" stroke="#404040" stroke-width="2" fill="none"/><text x="656.4" y="105.9" font-size="12" fill="#2d3a52" stroke="#2d3a52" stroke-width="0.3">Y</text>
<path d="M646,118.25V131.1L657.8,122.8M646,131.1L655,138.9" stroke="#404040" stroke-width="2" fill="none"/><text x="656.4" y="135.9" font-size="12" fill="#2d3a52" stroke="#2d3a52" stroke-width="0.3">Z</text>
<path d="M757.9,68.7L745.1,84.9H771.1Z" fill="#a0151d"/><rect x="741.9" y="86.9" width="32.2" height="2.1" fill="#404040"/>
<path d="M743,94.2 L748.1,89.3 L753.2,94.2 L758.3,89.3 L763.4,94.2 L768.5,89.3 L773.6,94.2 M743,89.3 L748.1,94.2 L753.2,89.3 L758.3,94.2 L763.4,89.3 L768.5,94.2 L773.6,89.3" stroke="#404040" stroke-width="0.9" fill="none"/>
<rect x="800.1" y="62.1" width="11.8" height="16.7" stroke="#404040" stroke-width="2.2" fill="none"/><path d="M808.2,58.8L816.2,64L807.8,78L800.2,73.2Z" stroke="#a0151d" stroke-width="1.9" stroke-dasharray="4.2,1.8" fill="none"/>
<rect x="795" y="94.1" width="14.4" height="1.9" fill="#404040"/><rect x="795" y="97.3" width="14.4" height="5.2" fill="#404040"/><rect x="795" y="104.1" width="14.4" height="1.8" fill="#404040"/><circle cx="810.2" cy="100" r="5.9" stroke="#a0151d" stroke-width="1.8" fill="none"/><circle cx="810.2" cy="100" r="3" stroke="#a0151d" stroke-width="1.6" fill="none"/>
<path d="M919.9,64.4L932,72V87.3L920,94.5L907.8,87.3V71.6Z M907.8,71.6L920,79.3L932,72 M920,79.3V94.5" stroke="#404040" stroke-width="2" fill="none" stroke-linejoin="round"/><path d="M920,95L932,87.8" stroke="#404040" stroke-width="3.4"/>
<path d="M901.1,92L908.5,96.1L915.9,92V93.8L908.5,98L901.1,93.8Z" fill="#404040"/><path d="M908.5,79.1L915.9,83.4V92L908.5,96.1L901.1,92V83.4Z" fill="#a0151d"/>
<rect x="961.2" y="59" width="7.7" height="12.2" fill="#404040"/><rect x="956" y="71.1" width="18" height="7.8" fill="#a0151d"/>
<rect x="953.9" y="92.1" width="6.1" height="13.8" fill="#404040"/><rect x="970" y="92.1" width="6" height="13.8" fill="#404040"/><path d="M960.9,98.9L964,95.9V102.1Z M969.2,98.9L966.2,95.9V102.1Z" fill="#a0151d"/>
<rect x="953.9" y="123" width="6.2" height="11.8" fill="#404040"/><rect x="970" y="123" width="6" height="11.8" fill="#404040"/><rect x="960.1" y="119.2" width="3.7" height="19.8" fill="#cf858a"/><rect x="966.2" y="119.2" width="3.8" height="19.8" fill="#cf858a"/>
<rect x="1086" y="66.2" width="2.1" height="29.5" fill="#404040"/><rect x="1106" y="66.2" width="2.1" height="29.5" fill="#404040"/>
<rect x="1086" y="66.2" width="22.1" height="4" fill="#a0151d"/><rect x="1086" y="70.2" width="22.1" height="1.8" fill="#404040"/>
<rect x="1088.1" y="72" width="17.9" height="4.2" fill="#fafafa"/>
<rect x="1088.3" y="68" width="1.8" height="1.9" fill="#fff"/>
<rect x="1092.2" y="68" width="1.8" height="1.9" fill="#fff"/>
<rect x="1096.2" y="68" width="1.8" height="1.9" fill="#fff"/>
<rect x="1100.1" y="68" width="1.8" height="1.9" fill="#fff"/>
<rect x="1104" y="68" width="1.8" height="1.9" fill="#fff"/>
<rect x="1086" y="76.2" width="22.1" height="4" fill="#a0151d"/><rect x="1086" y="80.2" width="22.1" height="1.8" fill="#404040"/>
<rect x="1088.1" y="82" width="17.9" height="4.2" fill="#fafafa"/>
<rect x="1088.3" y="78" width="1.8" height="1.9" fill="#fff"/>
<rect x="1092.2" y="78" width="1.8" height="1.9" fill="#fff"/>
<rect x="1096.2" y="78" width="1.8" height="1.9" fill="#fff"/>
<rect x="1100.1" y="78" width="1.8" height="1.9" fill="#fff"/>
<rect x="1104" y="78" width="1.8" height="1.9" fill="#fff"/>
<rect x="1086" y="86.2" width="22.1" height="4" fill="#a0151d"/><rect x="1086" y="90.2" width="22.1" height="1.8" fill="#404040"/>
<rect x="1088.3" y="88" width="1.8" height="1.9" fill="#fff"/>
<rect x="1092.2" y="88" width="1.8" height="1.9" fill="#fff"/>
<rect x="1096.2" y="88" width="1.8" height="1.9" fill="#fff"/>
<rect x="1100.1" y="88" width="1.8" height="1.9" fill="#fff"/>
<rect x="1104" y="88" width="1.8" height="1.9" fill="#fff"/>
<path d="M1165,74.6L1180.4,84.8L1165,95L1149.6,84.8Z" fill="#404040"/><path d="M1165,62.8L1180.4,73L1165,83.2L1149.6,73Z" fill="#a0151d"/>
<rect x="1202" y="57.2" width="22" height="21.6" fill="#404040"/><rect x="1205" y="59.9" width="10" height="10" fill="#a0151d"/><circle cx="1210" cy="64.9" r="2.2" stroke="#404040" stroke-width="0.7" fill="none" opacity="0.8"/><path d="M1208.5,63.4l3,3m0,-3l-3,3" stroke="#404040" stroke-width="0.6" opacity="0.8"/>
<rect x="1202" y="88" width="22" height="21.7" fill="#404040"/><rect x="1202" y="90.2" width="22" height="9.7" fill="#a0151d"/>
<path d="M1204.5,92L1210.0,98" stroke="#404040" stroke-width="2.4"/>
<path d="M1211.0,92L1216.5,98" stroke="#404040" stroke-width="2.4"/>
<path d="M1217.5,92L1223.0,98" stroke="#404040" stroke-width="2.4"/>
<circle cx="1217.5" cy="125.3" r="3.8" stroke="#404040" stroke-width="1.8" fill="none"/><path d="M1214.7,128.2L1205.3,137.6 M1208.3,135.2L1210.5,137.4 M1205.8,137.6L1208,139.6" stroke="#404040" stroke-width="2.3" fill="none"/>
<path d="M1350.8,79.1L1361,70.5L1371.25,79.1V91H1350.8Z" fill="#404040" stroke="#404040" stroke-width="0.8" stroke-linejoin="round"/>
<path d="M1340,71.8H1353 M1340,79.9H1347 M1340,88H1347" stroke="#a0151d" stroke-width="1.9"/><path d="M1351,68.3L1356.6,71.8L1351,75.3Z M1345,76.4L1350.6,79.9L1345,83.4Z M1345,84.5L1350.6,88L1345,91.5Z" fill="#a0151d"/>
<circle cx="1419" cy="69.1" r="3.2" fill="#404040"/><path d="M1419,69V82 M1419,80.75L1408,73 M1419,80.75L1430.3,73 M1419,80.75L1408,88.5 M1419,90.3V95.7" stroke="#404040" stroke-width="2.5" fill="none"/>
<path d="M1405.2,71.2L1411.8,72L1408.3,77Z M1433,71.2L1426.4,72L1429.9,77Z M1405.2,89.9L1411.8,89.1L1408.3,84.2Z M1433,89.9L1426.6,89.1L1429.9,84.2Z" fill="#404040"/>
<path d="M1410.8,92.0C1415.6,81.4 1427.6,87.4 1432.8,74.8" stroke="#a0151d" stroke-width="0.8" fill="none"/>
<path d="M1412.0,94.0C1416.8,83.4 1428.8,89.4 1434.0,76.8" stroke="#a0151d" stroke-width="0.8" fill="none"/>
<path d="M1413.2,96.0C1418.0,85.4 1430.0,91.4 1435.2,78.8" stroke="#a0151d" stroke-width="0.8" fill="none"/>
<rect x="1460.7" y="61.4" width="14.4" height="14.5" stroke="#404040" stroke-width="2.2" fill="none"/>
<rect x="1460.7" y="91.4" width="14.4" height="14.5" stroke="#404040" stroke-width="2.2" fill="none"/>
<rect x="1460.7" y="121.4" width="14.4" height="14.5" stroke="#404040" stroke-width="2.2" fill="none"/>
<path d="M1462,68L1468,62 M1462,73L1473,62 M1465,75L1474,66" stroke="#404040" stroke-width="0.9"/>
<rect x="1463" y="69.6" width="16" height="10.4" fill="#f0f0f0"/><text x="1463.6" y="78.8" font-size="11" fill="#2d3a52" stroke="#2d3a52" stroke-width="0.3" textLength="14.8" lengthAdjust="spacingAndGlyphs">CP</text>
<circle cx="1460" cy="60.75" r="3" fill="#a0151d"/>
<circle cx="1476" cy="60.75" r="3" fill="#a0151d"/>
<circle cx="1460" cy="76.8" r="3" fill="#a0151d"/>
<rect x="1468.5" y="99.5" width="11" height="11" fill="#f0f0f0"/>
<path d="M1463.5,104.5L1473,95 M1462.5,98.5L1467.5,93.5" stroke="#a0151d" stroke-width="1.5"/><path d="M1475,93L1469.6,94.2L1473.8,98.4Z M1469.5,91.5L1464.3,92.8L1468.2,96.7Z" fill="#a0151d"/>
<text x="1469.4" y="108" font-size="11.5" fill="#2d3a52" stroke="#2d3a52" stroke-width="0.3">Q</text>
<circle cx="1460" cy="90.75" r="3" fill="#a0151d"/>
<circle cx="1476" cy="90.75" r="3" fill="#a0151d"/>
<circle cx="1460" cy="106.8" r="3" fill="#a0151d"/>
<path d="M1462,128L1467,123 M1462,133L1467,128 M1462.5,136.5L1467,132" stroke="#404040" stroke-width="0.9"/><path d="M1468,121V129.5H1475" stroke="#404040" stroke-width="1.6" fill="none"/><path d="M1469.5,123L1474.5,128 M1471.5,122.5L1475,126" stroke="#a0151d" stroke-width="0.9"/>
<rect x="1465.5" y="129.8" width="13.5" height="10" fill="#f0f0f0"/><text x="1466.5" y="138.8" font-size="11.5" fill="#2d3a52" stroke="#2d3a52" stroke-width="0.3" textLength="10.8" lengthAdjust="spacingAndGlyphs">W</text>
<circle cx="1460" cy="121" r="3" fill="#a0151d"/>
<circle cx="1467.9" cy="121" r="3" fill="#a0151d"/>
<circle cx="1476" cy="121" r="3" fill="#a0151d"/>
<circle cx="1460" cy="137" r="3" fill="#a0151d"/>
<path d="M1600.8,64.7V70.7 M1600.8,72V74.2 M1600.8,76.4V83.4 M1600.8,84.6V90.4 M1600.8,92.3V96.8 M1617,64.7V70.7 M1617,72V74.2 M1617,76.4V83.4 M1617,84.6V90.4 M1617,92.3V96.8" stroke="#a0151d" stroke-width="2" fill="none"/>
<path d="M1593,72.8H1605.8 M1608,72.8H1613.8 M1616,72.8H1625 M1593,88.75H1605.8 M1608,88.75H1613.8 M1616,88.75H1625" stroke="#a0151d" stroke-width="2" fill="none"/>
<circle cx="1600.8" cy="64.7" r="3.1" fill="#a0151d"/>
<circle cx="1617" cy="64.7" r="3.1" fill="#a0151d"/>
<circle cx="1593.1" cy="72.8" r="3.1" fill="#a0151d"/>
<circle cx="1593.1" cy="88.75" r="3.1" fill="#a0151d"/>
<circle cx="1625" cy="72.8" r="3.1" fill="#a0151d"/>
<circle cx="1625" cy="88.75" r="3.1" fill="#a0151d"/>
<circle cx="1600.8" cy="96.8" r="3.1" fill="#a0151d"/>
<circle cx="1617" cy="96.8" r="3.1" fill="#a0151d"/>
<rect x="1655" y="67.0" width="31" height="2" fill="#cf858a"/><rect x="1667" y="69.0" width="19" height="2.2" fill="#404040"/><path d="M1655,67.6H1664.4L1659.7,72.2Z" fill="#a0151d"/>
<rect x="1655" y="77.1" width="31" height="2" fill="#cf858a"/><rect x="1667" y="79.1" width="19" height="2.2" fill="#404040"/><path d="M1655,77.7H1664.4L1659.7,82.3Z" fill="#a0151d"/>
<rect x="1655" y="87.2" width="31" height="2" fill="#cf858a"/><rect x="1667" y="89.2" width="19" height="2.2" fill="#404040"/><path d="M1655,87.8H1664.4L1659.7,92.4Z" fill="#a0151d"/>
<rect x="1667" y="68.9" width="1.9" height="27" fill="#404040"/><rect x="1684" y="68.9" width="2" height="27" fill="#404040"/>
<path d="M1716,59V89.7H1747" stroke="#404040" stroke-width="1.9" fill="none"/>
<rect x="1719" y="69" width="5.9" height="17.9" fill="#a0151d"/>
<rect x="1726" y="61.1" width="5.9" height="25.8" fill="#a0151d"/>
<rect x="1733" y="76.1" width="5.9" height="10.8" fill="#a0151d"/>
<rect x="1740" y="65.1" width="5.9" height="21.8" fill="#a0151d"/>
<rect x="1715" y="112" width="21.8" height="1.9" fill="#404040"/><rect x="1715" y="115.75" width="18.75" height="9.35" fill="#404040"/><rect x="1715" y="127" width="17.4" height="1.9" fill="#404040"/><circle cx="1738" cy="123" r="7.4" fill="#f0f0f0" stroke="#a0151d" stroke-width="1.3"/><text x="1736.6" y="127.3" font-size="12" fill="#2d3a52">i</text>
<path d="M1785.8,63.9 L1786.1,60.2 L1791.9,60.2 L1792.2,63.9 L1792.1,63.8 L1793.4,64.3 L1794.7,64.9 L1794.6,64.9 L1797.4,62.5 L1801.5,66.6 L1799.1,69.4 L1799.1,69.3 L1799.7,70.6 L1800.2,71.9 L1800.1,71.8 L1803.8,72.1 L1803.8,77.9 L1800.1,78.2 L1800.2,78.1 L1799.7,79.4 L1799.1,80.7 L1799.1,80.6 L1801.5,83.4 L1797.4,87.5 L1794.6,85.1 L1794.7,85.1 L1793.4,85.7 L1792.1,86.2 L1792.2,86.1 L1791.9,89.8 L1786.1,89.8 L1785.8,86.1 L1785.9,86.2 L1784.6,85.7 L1783.3,85.1 L1783.4,85.1 L1780.6,87.5 L1776.5,83.4 L1778.9,80.6 L1778.9,80.7 L1778.3,79.4 L1777.8,78.1 L1777.9,78.2 L1774.2,77.9 L1774.2,72.1 L1777.9,71.8 L1777.8,71.9 L1778.3,70.6 L1778.9,69.3 L1778.9,69.4 L1776.5,66.6 L1780.6,62.5 L1783.4,64.9 L1783.3,64.9 L1784.6,64.3 L1785.9,63.8Z M1783.0,75 a6.0,6.0 0 1 0 12.0,0 a6.0,6.0 0 1 0 -12.0,0Z" fill="#404040" fill-rule="evenodd"/>
<rect x="1837" y="66" width="20" height="6.85" rx="1" fill="#a0151d"/>
<path d="M1847,89.5C1850,95.5 1853.2,99 1853.2,102.7A6.2,6.2 0 0 1 1840.8,102.7C1840.8,99 1844,95.5 1847,89.5Z" fill="#a0151d"/>
<path d="M1783,105V137 M1767,121H1799" stroke="#111" stroke-width="1.6" stroke-dasharray="1.6,2.3" fill="none"/><rect x="1776" y="114.1" width="14" height="13.7" fill="#a0151d"/>
<text x="1835.4" y="139" font-size="27.5" font-weight="bold" fill="#999" textLength="20" lengthAdjust="spacingAndGlyphs">A</text><text x="1836.6" y="139" font-size="27.5" font-weight="bold" fill="#404040" textLength="20" lengthAdjust="spacingAndGlyphs">A</text>
<path d="M91.2,127.0h8.6l-4.3,7.6z" fill="#000"/>
<path d="M159.3,127.0h8.6l-4.3,7.6z" fill="#000"/>
<path d="M223.2,127.0h8.6l-4.3,7.6z" fill="#000"/>
<path d="M422.3,127.0h8.6l-4.3,7.6z" fill="#000"/>
<path d="M752.3,127.0h8.6l-4.3,7.6z" fill="#000"/>
<path d="M911.1,127.0h8.6l-4.3,7.6z" fill="#000"/>
<path d="M1159.0,127.0h8.6l-4.3,7.6z" fill="#000"/>
<path d="M1603.2,127.0h8.6l-4.3,7.6z" fill="#000"/>
<path d="M1413.0,123.3h8.6l-4.3,7.6z" fill="#000"/>
<path d="M370.7,64.1h9.4l-4.7,7.6z" fill="#000"/>
<path d="M369.6,93.9h9.4l-4.7,7.6z" fill="#000"/>
<path d="M1304.2,62.0h8.6l-4.3,7.6z" fill="#000"/>
<path d="M1304.2,93.0h8.6l-4.3,7.6z" fill="#000"/>
<path d="M1304.2,124.0h8.6l-4.3,7.6z" fill="#000"/>
<path d="M1810.7,70.0h9.4l-4.7,7.7z" fill="#000"/>
<path d="M1812.1,116.0h8.6l-4.3,7.7z" fill="#000"/>
<path d="M1870.5,64.0h9.4l-4.7,7.7z" fill="#000"/>
<path d="M1870.5,93.9h9.4l-4.7,7.7z" fill="#000"/>
<path d="M1870.5,124.0h9.4l-4.7,7.7z" fill="#000"/></svg>
<div class="t" style="left:23.1px;top:6.0px;font-size:12px;color:#000;transform:scaleX(0.9397);">© MasterFrame [Main Menu] : Version 2019.07 x64 : W:\MANUALS\2018 USER MANUALS\FINITE ELEMENT\FINITE ELEMENT_FILES\FE MANUAL FRAME</div>
<div class="t" style="left:14.4px;top:29.5px;font-size:12px;color:#000;transform:scaleX(0.9771);">File</div>
<div class="t" style="left:52.0px;top:29.5px;font-size:12px;color:#000;transform:scaleX(0.9575);">Create</div>
<div class="t" style="left:104.9px;top:29.5px;font-size:12px;color:#000;transform:scaleX(1.0245);">Modify Geometry</div>
<div class="t" style="left:216.7px;top:29.5px;font-size:12px;color:#000;transform:scaleX(1.0141);">Viewing</div>
<div class="t" style="left:277.8px;top:29.5px;font-size:12px;color:#000;transform:scaleX(0.9780);">Properties</div>
<div class="t" style="left:350.0px;top:29.5px;font-size:12px;color:#000;transform:scaleX(0.9632);">Loads</div>
<div class="t" style="left:399.8px;top:29.5px;font-size:12px;color:#000;transform:scaleX(0.9513);">Restraints</div>
<div class="t" style="left:469.7px;top:29.5px;font-size:12px;color:#000;transform:scaleX(0.9801);">Analysis</div>
<div class="t" style="left:532.0px;top:29.5px;font-size:12px;color:#000;transform:scaleX(0.9321);">Results</div>
<div class="t" style="left:587.7px;top:29.5px;font-size:12px;color:#000;transform:scaleX(0.9770);">Design</div>
<div class="t" style="left:642.7px;top:29.5px;font-size:12px;color:#000;transform:scaleX(0.9584);">BIM Exchange</div>
<div class="t" style="left:736.0px;top:29.5px;font-size:12px;color:#000;transform:scaleX(0.9825);">Report</div>
<div class="t" style="left:790.1px;top:29.5px;font-size:12px;color:#000;transform:scaleX(1.0127);">Help</div>
<div class="t" style="left:20.7px;top:106.0px;font-size:12px;color:#000;transform:scaleX(0.9065);">Save</div>
<div class="t" style="left:81.0px;top:106.0px;font-size:12px;color:#000;transform:scaleX(1.0144);">Undo</div>
<div class="t" style="left:149.9px;top:106.0px;font-size:12px;color:#000;transform:scaleX(1.0011);">Filter</div>
<div class="t" style="left:202.5px;top:106.0px;font-size:12px;color:#000;transform:scaleX(0.9858);">Snapshot</div>
<div class="t" style="left:404.0px;top:106.0px;font-size:12px;color:#000;transform:scaleX(1.0425);">Number</div>
<div class="t" style="left:581.9px;top:106.0px;font-size:12px;color:#000;transform:scaleX(1.0448);">Number</div>
<div class="t" style="left:734.7px;top:106.0px;font-size:12px;color:#000;transform:scaleX(1.0183);">Support</div>
<div class="t" style="left:907.5px;top:106.0px;font-size:12px;color:#000;transform:scaleX(0.9776);">3D</div>
<div class="t" style="left:1078.9px;top:106.0px;font-size:12px;color:#000;transform:scaleX(0.9691);">Frame</div>
<div class="t" style="left:1079.9px;top:121.0px;font-size:12px;color:#000;transform:scaleX(0.9663);">Loads</div>
<div class="t" style="left:1144.9px;top:106.0px;font-size:12px;color:#000;transform:scaleX(0.9891);">Gravity</div>
<div class="t" style="left:1340.0px;top:106.0px;font-size:12px;color:#000;transform:scaleX(1.0313);">Wind</div>
<div class="t" style="left:1392.9px;top:106.0px;font-size:12px;color:#000;transform:scaleX(1.0199);">Direction</div>
<div class="t" style="left:1594.1px;top:106.0px;font-size:12px;color:#000;transform:scaleX(0.9556);">Grids</div>
<div class="t" style="left:1655.0px;top:106.0px;font-size:12px;color:#000;transform:scaleX(0.9516);">Level</div>
<div class="t" style="left:1647.3px;top:121.0px;font-size:12px;color:#000;transform:scaleX(1.0354);">Number</div>
<div class="t" style="left:294.7px;top:62.0px;font-size:12px;color:#000;transform:scaleX(0.9571);">Frame Views</div>
<div class="t" style="left:291.5px;top:92.0px;font-size:12px;color:#000;transform:scaleX(0.9709);">View Filters</div>
<div class="t" style="left:291.9px;top:122.0px;font-size:12px;color:#000;transform:scaleX(1.0027);">Lower Columns</div>
<div class="t" style="left:489.5px;top:62.0px;font-size:12px;color:#000;transform:scaleX(0.9353);">Section Sizes</div>
<div class="t" style="left:490.0px;top:92.0px;font-size:12px;color:#000;transform:scaleX(0.9756);">Beta Angles</div>
<div class="t" style="left:490.0px;top:122.0px;font-size:12px;color:#000;transform:scaleX(1.0054);">Length</div>
<div class="t" style="left:667.5px;top:62.0px;font-size:12px;color:#000;transform:scaleX(0.9397);">X Values</div>
<div class="t" style="left:667.5px;top:92.0px;font-size:12px;color:#000;transform:scaleX(0.9441);">Y Values</div>
<div class="t" style="left:667.5px;top:122.0px;font-size:12px;color:#000;transform:scaleX(0.9533);">Z Values</div>
<div class="t" style="left:819.5px;top:62.0px;font-size:12px;color:#000;transform:scaleX(1.0012);">Stiff Deck</div>
<div class="t" style="left:820.0px;top:92.0px;font-size:12px;color:#000;transform:scaleX(0.8874);">Releases</div>
<div class="t" style="left:978.5px;top:62.0px;font-size:12px;color:#000;transform:scaleX(0.9838);">Show Founds</div>
<div class="t" style="left:979.1px;top:92.0px;font-size:12px;color:#000;transform:scaleX(0.9762);">Draw Short</div>
<div class="t" style="left:979.1px;top:122.0px;font-size:12px;color:#000;transform:scaleX(0.9372);">End Plates</div>
<div class="t" style="left:1226.9px;top:61.0px;font-size:12px;color:#000;transform:scaleX(0.9682);">Patch Loads</div>
<div class="t" style="left:1226.9px;top:92.0px;font-size:12px;color:#000;transform:scaleX(0.9639);">Line Loads</div>
<div class="t" style="left:1226.9px;top:123.0px;font-size:12px;color:#000;transform:scaleX(0.9476);">Show Key</div>
<div class="t" style="left:1481.9px;top:62.0px;font-size:12px;color:#000;transform:scaleX(0.9553);">Coef Values</div>
<div class="t" style="left:1481.9px;top:92.0px;font-size:12px;color:#000;transform:scaleX(0.9248);">Pressure Values</div>
<div class="t" style="left:1481.9px;top:122.0px;font-size:12px;color:#000;transform:scaleX(1.0098);">Wind Zone</div>
<div class="t" style="left:43.9px;top:150.7px;font-size:12px;color:#fff;transform:scaleX(1.0264);">Actions</div>
<div class="t" style="left:210.5px;top:150.7px;font-size:12px;color:#fff;transform:scaleX(0.9884);">Views and Filtering</div>
<div class="t" style="left:455.9px;top:150.7px;font-size:12px;color:#fff;transform:scaleX(1.0117);">Members</div>
<div class="t" style="left:584.0px;top:150.7px;font-size:12px;color:#fff;transform:scaleX(0.9858);">Nodes and Coordinates</div>
<div class="t" style="left:738.5px;top:150.7px;font-size:12px;color:#fff;transform:scaleX(0.9685);">Supports and Restraints</div>
<div class="t" style="left:939.7px;top:150.7px;font-size:12px;color:#fff;transform:scaleX(0.9856);">3D Drawing</div>
<div class="t" style="left:1078.9px;top:150.7px;font-size:12px;color:#fff;transform:scaleX(0.9663);">Loads</div>
<div class="t" style="left:1177.9px;top:150.7px;font-size:12px;color:#fff;transform:scaleX(0.9744);">Gravity Area Load</div>
<div class="t" style="left:1417.5px;top:150.7px;font-size:12px;color:#fff;transform:scaleX(1.0057);">Wind Load</div>
<div class="t" style="left:1582.9px;top:150.7px;font-size:12px;color:#fff;transform:scaleX(0.9528);">Grid Lines and Levels</div>
<div class="t" style="left:1715.5px;top:150.7px;font-size:12px;color:#fff;transform:scaleX(0.9503);">Stats</div>
<div class="t" style="left:1803.7px;top:150.7px;font-size:12px;color:#fff;transform:scaleX(0.9858);">Display</div>
<div class="t" style="left:13.5px;top:1144.0px;font-size:12px;color:#000;transform:scaleX(0.9687);">View: Full Frame</div>
<div class="t" style="left:459.5px;top:1144.0px;font-size:12px;color:#000;transform:scaleX(0.9364);">PDF session closed</div>
</body></html>
